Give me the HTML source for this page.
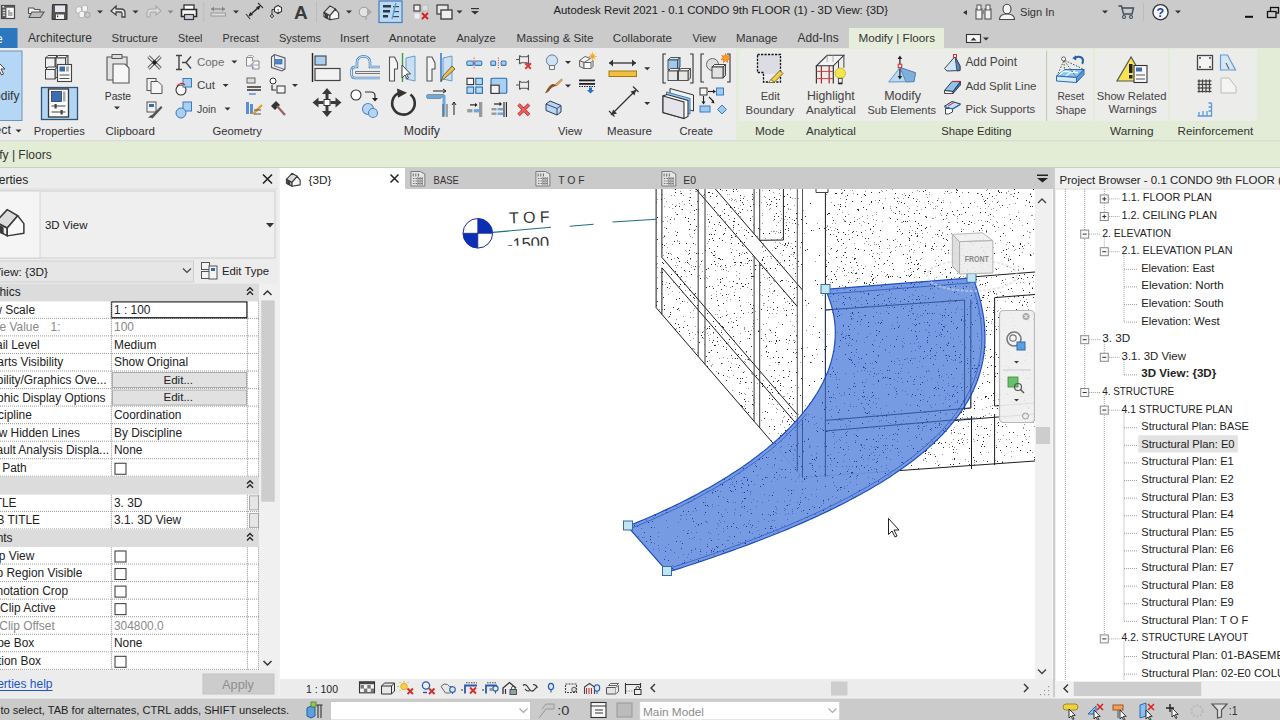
<!DOCTYPE html>
<html><head><meta charset="utf-8"><style>
html,body{margin:0;padding:0;width:1280px;height:720px;overflow:hidden;background:#f0f0f0}
svg{display:block}
text{font-family:"Liberation Sans",sans-serif;white-space:pre}
</style></head><body>
<svg width="1280" height="720" viewBox="0 0 1280 720">
<rect x="0" y="0" width="1280" height="48" fill="#cbcbcb" />
<rect x="1.5" y="5.5" width="13" height="13" fill="#f6f6f6" stroke="#444" stroke-width="1.2" />
<rect x="1.5" y="5.5" width="13" height="2.2" fill="#555" />
<rect x="2.5" y="6" width="1.6" height="1.4" fill="#fff" />
<rect x="1.8" y="7.8" width="4.6" height="10.5" fill="#5a5a5a" />
<rect x="2.8" y="9.5" width="2.4" height="1.4" fill="#ddd" />
<rect x="2.8" y="12" width="2.4" height="1.4" fill="#ddd" />
<rect x="2.8" y="14.5" width="2.4" height="1.4" fill="#ddd" />
<line x1="8" y1="11" x2="10" y2="11" stroke="#555" stroke-width="0.9" />
<line x1="8" y1="13" x2="12.5" y2="13" stroke="#555" stroke-width="0.9" />
<line x1="8" y1="15" x2="12.5" y2="15" stroke="#555" stroke-width="0.9" />
<path d="M28.5 8h5l1.5 1.5h5v4h-11.5z" fill="#f0f0f0" stroke="#555" stroke-width="1.1" />
<path d="M29 17.5l3-5.5h12l-3.5 5.5z" fill="#bdbdbd" stroke="#555" stroke-width="1.1" />
<path d="M52.5 4.5h14.5v15h-15z" fill="#555" stroke="#333" stroke-width="1" />
<rect x="55" y="5.5" width="10" height="6.5" fill="#e4e4ea" />
<rect x="56" y="14.5" width="8" height="4.5" fill="#f4f4f4" />
<rect x="57" y="15.5" width="1.2" height="1.6" fill="#333" />
<path d="M76 8l2.5-1.5 3 1v4.5l-2.5 1.5-3-1z" fill="#f2f2f2" stroke="#b0b0b0" stroke-width="0.9" />
<path d="M82 6.5l2.5-1.5 3 1v4.5l-2.5 1.5-3-1z" fill="#f2f2f2" stroke="#b0b0b0" stroke-width="0.9" />
<path d="M79 12.5l2.5-1.5 3 1v4.5l-2.5 1.5-3-1z" fill="#f2f2f2" stroke="#b0b0b0" stroke-width="0.9" />
<circle cx="87.5" cy="15" r="2.6" fill="none" stroke="#aaa" stroke-width="1.1"/>
<path d="M97 10.5h6l-3 3z" fill="#333"/>
<path d="M111 11l5-5v3h5c3 0 4 2 4 4v4h-3v-3.5c0-1-0.5-1.5-1.5-1.5h-4.5v3z" fill="#e9e9e9" stroke="#444" stroke-width="1.3" />
<path d="M132.5 10.5h6l-3 3z" fill="#333"/>
<path d="M161 11l-5-5v3h-5c-3 0-4 2-4 4v4h3v-3.5c0-1 0.5-1.5 1.5-1.5h4.5v3z" fill="#dcdcdc" stroke="#aaa" stroke-width="1.1" />
<path d="M167.5 10.5h6l-3 3z" fill="#888"/>
<rect x="184" y="5" width="10" height="5" fill="#fff" stroke="#333" stroke-width="1.3" />
<path d="M181.5 9.5h15v7h-15z" fill="#f5f5f5" stroke="#2a2a2a" stroke-width="1.6" />
<rect x="184.5" y="14.5" width="9" height="5" fill="#ccd" stroke="#333" stroke-width="1.2" />
<line x1="203.75" y1="2" x2="203.75" y2="22" stroke="#bcbcbc" stroke-width="1" />
<line x1="211" y1="9" x2="225" y2="9" stroke="#888" stroke-width="1.2" />
<path d="M211 9l3-2.5v5zM225 9l-3-2.5v5z" fill="#888" />
<rect x="211" y="13" width="14.5" height="3" fill="#ddd" stroke="#999" stroke-width="1" />
<path d="M233 10.5h6l-3 3z" fill="#333"/>
<line x1="249" y1="16" x2="260" y2="6" stroke="#222" stroke-width="1.4" />
<line x1="246" y1="14" x2="250" y2="19" stroke="#333" stroke-width="1.1" />
<line x1="258" y1="3" x2="263" y2="8" stroke="#333" stroke-width="1.1" />
<path d="M249 16l1-4 3 3zM260 6l-4 1 3 3z" fill="#222" />
<path d="M278 5.5l3.5 2v4l-3.5 2-3.5-2v-4z" fill="#fff" stroke="#333" stroke-width="1.1" />
<text x="276.6" y="12.5" font-size="6" fill="#222">1</text>
<path d="M274.5 9.5h-2.5v5" fill="none" stroke="#333" stroke-width="1" />
<circle cx="272" cy="16" r="1.4" fill="#fff" stroke="#333" stroke-width="1"/>
<text x="294" y="18.5" font-size="19" fill="#3a3a3a" font-weight="bold">A</text>
<line x1="316.5" y1="2" x2="316.5" y2="22" stroke="#bcbcbc" stroke-width="1" />
<g transform="translate(323.5 4.5) scale(0.92)" stroke="#3a3a3a" stroke-width="1.20" stroke-linejoin="round"><path d="M0.5 8.5L7 12V16.5L0.5 13Z" fill="#ececec"/><path d="M0.5 8.5L7 1.5L13 5L7 12Z" fill="#dcdcdc"/><path d="M7 12L13 5L16.5 9.5V15L7 16.5Z" fill="#f7f7f7"/><path d="M2 14V10.5L4.5 11.8V15.2Z" fill="#3a3a3a"/></g>
<path d="M346 10.5h6l-3 3z" fill="#333"/>
<circle cx="364" cy="12" r="4.8" fill="#e3e3e3" stroke="#999" stroke-width="1"/>
<path d="M367 7.5l5 4.5-5 4.5z" fill="#aaa" />
<line x1="366" y1="17" x2="366" y2="20" stroke="#999" stroke-width="1" />
<rect x="379" y="1" width="23" height="21.5" fill="#bcd9f2" stroke="#3f7fbf" stroke-width="1.2" />
<rect x="383" y="5" width="8" height="2.5" fill="#2a3a4a" />
<rect x="393" y="6" width="6" height="1.2" fill="#3a4a5a" />
<rect x="383" y="10" width="7" height="2.5" fill="#2a3a4a" />
<rect x="393" y="11" width="6" height="1.2" fill="#3a4a5a" />
<rect x="383" y="15" width="5" height="2.5" fill="#2a3a4a" />
<rect x="393" y="16" width="6" height="1.2" fill="#3a4a5a" />
<line x1="392" y1="19" x2="396" y2="3" stroke="#5a9ad8" stroke-width="1.3" />
<rect x="414" y="5" width="6" height="6" fill="#f0f0f0" stroke="#444" stroke-width="1.2" />
<rect x="422" y="5" width="6" height="6" fill="#ddd" stroke="#bbb" stroke-width="1" />
<rect x="414" y="13" width="6" height="6" fill="#eee" stroke="#ccc" stroke-width="1" />
<path d="M422 13l6 6M428 13l-6 6" fill="none" stroke="#d02020" stroke-width="1.8" />
<rect x="437" y="5" width="11" height="9" fill="#e8e8e8" stroke="#444" stroke-width="1.3" />
<rect x="441" y="10" width="11" height="9" fill="#f0f0f0" stroke="#444" stroke-width="1.4" />
<path d="M456.5 10.5h6l-3 3z" fill="#333"/>
<rect x="471" y="8" width="8" height="1.2" fill="#333" />
<path d="M471 11h8l-4 3.5z" fill="#333" />
<text x="553.5" y="13.6" font-size="11.34" fill="#222" textLength="334.5" lengthAdjust="spacingAndGlyphs" >Autodesk Revit 2021 - 0.1 CONDO 9th FLOOR (1) - 3D View: {3D}</text>
<path d="M967 10l-4 2.5 4 2.5z" fill="#333" />
<rect x="976" y="9" width="6" height="10" fill="#f2f2f2" stroke="#555" stroke-width="1.1" />
<rect x="985" y="9" width="6" height="10" fill="#f2f2f2" stroke="#555" stroke-width="1.1" />
<rect x="977" y="5" width="4" height="5" fill="#f2f2f2" stroke="#555" stroke-width="1" />
<rect x="986" y="5" width="4" height="5" fill="#f2f2f2" stroke="#555" stroke-width="1" />
<rect x="981.5" y="10" width="3.5" height="4" fill="#888" />
<ellipse cx="1007" cy="9" rx="4" ry="4.8" fill="#f4f4f4" stroke="#444" stroke-width="1.1"/>
<path d="M999.5 19.5c0-4 3.5-5.5 7.5-5.5s7.5 1.5 7.5 5.5z" fill="#f4f4f4" stroke="#444" stroke-width="1.1" />
<text x="1020" y="16.3" font-size="11.08" fill="#333" textLength="34.5" lengthAdjust="spacingAndGlyphs" >Sign In</text>
<path d="M1102 10.5h6l-3 3z" fill="#333"/>
<path d="M1118.5 6h3l2 8h8.5l1.5-6h-11" fill="none" stroke="#3d4d5d" stroke-width="1.4" />
<circle cx="1124" cy="17" r="1.5" fill="none" stroke="#3d4d5d" stroke-width="1.1"/><circle cx="1131" cy="17" r="1.5" fill="none" stroke="#3d4d5d" stroke-width="1.1"/>
<line x1="1143.5" y1="3" x2="1143.5" y2="21" stroke="#bcbcbc" stroke-width="1" />
<circle cx="1160.5" cy="12.2" r="7.6" fill="#f4f7ff" stroke="#333" stroke-width="1.3"/>
<text x="1156.6" y="16.8" font-size="12.5" font-weight="bold" fill="#1f3f9f">?</text>
<path d="M1175 10.5h6l-3 3z" fill="#333"/>
<rect x="1245" y="15.8" width="8" height="2" fill="#111" />
<rect x="1270.5" y="7.5" width="8" height="5.5" fill="none" stroke="#111" stroke-width="1.3" />
<rect x="1267.5" y="11.5" width="8.5" height="6" fill="#cbcbcb" stroke="#111" stroke-width="1.3" />
<rect x="0" y="28" width="17.5" height="20" fill="#2b78bf" />
<text x="-4" y="42.5" font-size="12" fill="#fff">e</text>
<rect x="849" y="28" width="95" height="20" fill="#e6eedb" />
<text x="28" y="41.8" font-size="12.00" fill="#333" textLength="64.0" lengthAdjust="spacingAndGlyphs" >Architecture</text>
<text x="111.5" y="41.8" font-size="11.46" fill="#333" textLength="46.5" lengthAdjust="spacingAndGlyphs" >Structure</text>
<text x="178" y="41.8" font-size="10.75" fill="#333" textLength="24.5" lengthAdjust="spacingAndGlyphs" >Steel</text>
<text x="222.5" y="41.8" font-size="10.77" fill="#333" textLength="36.5" lengthAdjust="spacingAndGlyphs" >Precast</text>
<text x="279" y="41.8" font-size="10.95" fill="#333" textLength="42.0" lengthAdjust="spacingAndGlyphs" >Systems</text>
<text x="340" y="41.8" font-size="11.60" fill="#333" textLength="29.0" lengthAdjust="spacingAndGlyphs" >Insert</text>
<text x="388.75" y="41.8" font-size="11.80" fill="#333" textLength="47.2" lengthAdjust="spacingAndGlyphs" >Annotate</text>
<text x="456.5" y="41.8" font-size="10.99" fill="#333" textLength="39.1" lengthAdjust="spacingAndGlyphs" >Analyze</text>
<text x="516.5" y="41.8" font-size="11.53" fill="#333" textLength="76.9" lengthAdjust="spacingAndGlyphs" >Massing &amp; Site</text>
<text x="612.8" y="41.8" font-size="11.58" fill="#333" textLength="59.2" lengthAdjust="spacingAndGlyphs" >Collaborate</text>
<text x="692.5" y="41.8" font-size="10.93" fill="#333" textLength="23.5" lengthAdjust="spacingAndGlyphs" >View</text>
<text x="736" y="41.8" font-size="11.48" fill="#333" textLength="41.5" lengthAdjust="spacingAndGlyphs" >Manage</text>
<text x="797.6" y="41.8" font-size="11.90" fill="#333" textLength="41.0" lengthAdjust="spacingAndGlyphs" >Add-Ins</text>
<text x="858.5" y="41.8" font-size="11.70" fill="#333" textLength="76.5" lengthAdjust="spacingAndGlyphs" >Modify | Floors</text>
<rect x="966.5" y="34.5" width="14" height="8" fill="#f4f4f4" stroke="#333" stroke-width="1.1" />
<path d="M970.5 40.5l3-3 3 3z" fill="#333" />
<path d="M983 37.5h6l-3 3z" fill="#333"/>
<rect x="0" y="48" width="1280" height="93" fill="#ececec" />
<rect x="736" y="48" width="544" height="93" fill="#e3ecd6" />
<rect x="739" y="49" width="307" height="72" fill="#ececea" />
<rect x="1048" y="49" width="45" height="72" fill="#ececea" />
<rect x="1095" y="49" width="73" height="72" fill="#ececea" />
<rect x="1170" y="49" width="87" height="72" fill="#ececea" />
<line x1="0" y1="141" x2="1280" y2="141" stroke="#c9cfc2" stroke-width="1" />
<rect x="-1" y="51" width="23" height="69.5" fill="#b5d6f4" stroke="#6b93bd" stroke-width="1" />
<path d="M-4 60l0 13 3-3 2.5 5 2-1-2.5-5 4 0z" fill="#fff" stroke="#333" stroke-width="0.9" />
<text x="-15.9" y="99.9" font-size="11.99" fill="#333" textLength="35.3" lengthAdjust="spacingAndGlyphs" >Modify</text>
<text x="-23.7" y="134" font-size="12.49" fill="#333" textLength="34.7" lengthAdjust="spacingAndGlyphs" >Select</text>
<path d="M15.5 129.5h6l-3 3z" fill="#333"/>
<path d="M45.5 58l2.5-2.5h9.5l-2.5 2.5z" fill="#fafafa" stroke="#444" stroke-width="1" />
<path d="M55.0 58l2.5-2.5v9.5l-2.5 2.5z" fill="#cfcfcf" stroke="#444" stroke-width="1" />
<rect x="45.5" y="58" width="9.5" height="9.5" fill="#f0f0f0" stroke="#444" stroke-width="1" />
<path d="M56 58l2.5-2.5h9.5l-2.5 2.5z" fill="#fafafa" stroke="#444" stroke-width="1" />
<path d="M65.5 58l2.5-2.5v9.5l-2.5 2.5z" fill="#cfcfcf" stroke="#444" stroke-width="1" />
<rect x="56" y="58" width="9.5" height="9.5" fill="#f0f0f0" stroke="#444" stroke-width="1" />
<path d="M45.5 69.5l2.5-2.5h9.5l-2.5 2.5z" fill="#fafafa" stroke="#444" stroke-width="1" />
<path d="M55.0 69.5l2.5-2.5v9.5l-2.5 2.5z" fill="#cfcfcf" stroke="#444" stroke-width="1" />
<rect x="45.5" y="69.5" width="9.5" height="9.5" fill="#f0f0f0" stroke="#444" stroke-width="1" />
<rect x="57.5" y="64.5" width="14" height="17" fill="#f8f8f8" stroke="#444" stroke-width="1.1" />
<rect x="59.5" y="66.5" width="5.5" height="5" fill="#3c6aa8" />
<rect x="66" y="66.5" width="3" height="5" fill="#aaa" />
<line x1="59.5" y1="75" x2="69.5" y2="75" stroke="#555" stroke-width="1" />
<line x1="59.5" y1="78.5" x2="69.5" y2="78.5" stroke="#555" stroke-width="1" />
<rect x="41.5" y="87.5" width="36" height="32" fill="#b2d5f3" stroke="#2f5478" stroke-width="1.3" />
<rect x="48.5" y="89" width="20" height="28" fill="#fafafa" stroke="#333" stroke-width="1.3" />
<rect x="51.5" y="91.5" width="10" height="10" fill="#3d6cb0" stroke="#1f3f70" stroke-width="0.8" />
<rect x="63" y="91.5" width="2.5" height="10" fill="#aaa" />
<line x1="51.5" y1="106" x2="65.5" y2="106" stroke="#777" stroke-width="1.4" />
<line x1="51.5" y1="112" x2="65.5" y2="112" stroke="#777" stroke-width="1.4" />
<rect x="54.5" y="104" width="2.2" height="4.5" fill="#444" />
<rect x="60.5" y="110" width="2.2" height="4.5" fill="#444" />
<text x="33.75" y="135" font-size="11.18" fill="#333" textLength="51.0" lengthAdjust="spacingAndGlyphs" >Properties</text>
<path d="M107 57h20v23h-20z" fill="#e2e2e2" stroke="#555" stroke-width="1.1" />
<rect x="112" y="54.5" width="10" height="4" fill="#ddd" stroke="#555" stroke-width="1" />
<path d="M113 64h12l4 4v15h-16z" fill="#f6f6f6" stroke="#555" stroke-width="1.1" />
<text x="104.8" y="100.3" font-size="10.25" fill="#333" textLength="26.2" lengthAdjust="spacingAndGlyphs" >Paste</text>
<path d="M114 106.5h6l-3 3z" fill="#333"/>
<text x="105.5" y="135" font-size="11.54" fill="#333" textLength="49.4" lengthAdjust="spacingAndGlyphs" >Clipboard</text>
<path d="M148.5 56.5L160.5 68.5M160.5 56.5L148.5 68.5" fill="none" stroke="#555" stroke-width="3.2" />
<path d="M148.5 56.5L160.5 68.5M160.5 56.5L148.5 68.5" fill="none" stroke="#f4f4f4" stroke-width="1.4" />
<circle cx="154.5" cy="62.5" r="2.2" fill="#222"/>
<rect x="147" y="78.5" width="9" height="12" fill="#f2f2f2" stroke="#555" stroke-width="1" />
<path d="M151 81.5h7l4 4v8h-11z" fill="#f6f6f6" stroke="#555" stroke-width="1" />
<rect x="147" y="102" width="9" height="10" fill="#f2f2f2" stroke="#555" stroke-width="1" />
<rect x="149" y="104" width="5" height="3" fill="#3c6aa8" />
<path d="M150 117l11-11 1.5 1.5-10 11z" fill="#555" />
<path d="M148 118l3-3 2 2z" fill="#444" />
<path d="M176 55.5h6M176 69.5h6M179 55.5v14M182 62.5h4l5-6M186 62.5l5 6" fill="none" stroke="#444" stroke-width="1.4" />
<text x="196.9" y="66" font-size="11.50" fill="#6c6c6c" textLength="27.5" lengthAdjust="spacingAndGlyphs" >Cope</text>
<path d="M231.4 60.5h6l-3 3z" fill="#333"/>
<circle cx="181" cy="90" r="5" fill="#fff" stroke="#333" stroke-width="1.1"/>
<rect x="183" y="78.5" width="8.5" height="8.5" fill="#a9d0f0" stroke="#3b79c0" stroke-width="1" />
<path d="M177 86a5 5 0 0 1 8-1" fill="none" stroke="#d22" stroke-width="1.2" />
<text x="196.9" y="89.3" font-size="11.63" fill="#444" textLength="18.1" lengthAdjust="spacingAndGlyphs" >Cut</text>
<path d="M222.6 84h6l-3 3z" fill="#333"/>
<rect x="183" y="102" width="8.5" height="9" fill="#a9d0f0" stroke="#3b79c0" stroke-width="1" />
<circle cx="181" cy="113" r="5" fill="#a9d0f0" stroke="#3b79c0" stroke-width="1"/>
<text x="196.9" y="113" font-size="10.55" fill="#444" textLength="19.3" lengthAdjust="spacingAndGlyphs" >Join</text>
<path d="M224.5 107.5h6l-3 3z" fill="#333"/>
<path d="M246.5 57.5h6v3.5h6.5v8h-6.5v-3h-6z" fill="#f6f6f6" stroke="#8a8a8a" stroke-width="1" />
<path d="M246.5 57.5l2-2h4l2 2" fill="none" stroke="#9a9a9a" stroke-width="0.8" />
<path d="M259 65h-8l3-3M251 65l3 3" fill="none" stroke="#9aa8b8" stroke-width="1.2" />
<path d="M271.5 57l3-2.5 10.5 3.5v11l-3 2-10.5-3.5z" fill="#e9eef4" stroke="#556" stroke-width="1.1" />
<path d="M274.5 54.5v11.5l10.5 3.5" fill="none" stroke="#556" stroke-width="0.8" />
<rect x="275.5" y="59.5" width="6.5" height="4.5" fill="#4f86c6" stroke="#2a5a9a" stroke-width="0.6" />
<rect x="247" y="78" width="8" height="5" fill="#ddd" stroke="#666" stroke-width="1" />
<line x1="247" y1="87" x2="261" y2="87" stroke="#333" stroke-width="1.5" />
<line x1="247" y1="90" x2="261" y2="90" stroke="#333" stroke-width="1.5" />
<line x1="249" y1="94" x2="256" y2="94" stroke="#3b79c0" stroke-width="1.2" />
<circle cx="273" cy="81" r="3" fill="#fff" stroke="#333" stroke-width="1"/>
<rect x="277" y="86" width="8" height="7" fill="#f4f4f4" stroke="#333" stroke-width="1" />
<path d="M272 85v5h4" fill="none" stroke="#333" stroke-width="1.2" />
<path d="M292 84h6l-3 3z" fill="#333"/>
<rect x="246" y="102" width="3" height="12" fill="#5b8fd0" />
<rect x="250" y="104" width="3" height="10" fill="#5b8fd0" />
<path d="M253 114l9-9" fill="none" stroke="#e8a030" stroke-width="2.4" />
<line x1="254" y1="110" x2="261" y2="110" stroke="#555" stroke-width="1" />
<line x1="254" y1="114" x2="261" y2="114" stroke="#555" stroke-width="1" />
<path d="M271 106l5-5 4 4-5 5z" fill="#333" />
<path d="M277 106l8 9" fill="none" stroke="#9a6060" stroke-width="2.2" />
<text x="212.5" y="135" font-size="11.28" fill="#333" textLength="49.5" lengthAdjust="spacingAndGlyphs" >Geometry</text>
<line x1="312.5" y1="53" x2="312.5" y2="82" stroke="#222" stroke-width="1.4" />
<rect x="315" y="56" width="11" height="9" fill="#a9d0f0" stroke="#444" stroke-width="1.1" />
<rect x="315" y="68.5" width="25" height="12" fill="#f2f2f2" stroke="#444" stroke-width="1.2" />
<path d="M380 67H370V62C370 54.5 357 54.5 357 62V67H354.5C352 67 351.5 69 351.5 71V74C351.5 76.5 352.5 78 355 78H380" fill="none" stroke="#4a88c8" stroke-width="2.6" />
<path d="M380 67H370V62C370 54.5 357 54.5 357 62V67H354.5C352 67 351.5 69 351.5 71V74C351.5 76.5 352.5 78 355 78H380" fill="none" stroke="#f2f2f2" stroke-width="0.9" />
<path d="M380 71.5H355.5V73.5H380" fill="none" stroke="#777" stroke-width="1" />
<path d="M389.5 57h5l3 6v6h-3v12h-5z" fill="#f4f4f4" stroke="#555" stroke-width="1.1" />
<path d="M406 58l9-2v25l-9-2z" fill="#c9e0f3" stroke="#6a9acb" stroke-width="1" />
<line x1="402.5" y1="53" x2="402.5" y2="82" stroke="#3aa040" stroke-width="1.4" />
<path d="M402 65v13l3-3 2 4 1.5-1-2-4h4z" fill="#fff" stroke="#333" stroke-width="0.9" />
<path d="M427 57h5l3 6v6h-3v12h-5z" fill="#f4f4f4" stroke="#555" stroke-width="1.1" />
<path d="M443 58l9-2v25l-9-2z" fill="#c9e0f3" stroke="#6a9acb" stroke-width="1" />
<line x1="441" y1="53" x2="441" y2="82" stroke="#3a7fcf" stroke-width="1.6" />
<path d="M441 81l2-5 9-10 3 3-10 9z" fill="#f2c040" stroke="#555" stroke-width="0.9" />
<path d="M327 88l-5 6h3.5v5h3v-5h3.5zM327 117l-5-6h3.5v-5h3v5h3.5zM312.5 102.5l6-5v3.5h5v3h-5v3.5zM341.5 102.5l-6-5v3.5h-5v3h5v3.5z" fill="#3a3a3a" />
<rect x="324" y="99.5" width="6" height="6" fill="#fff" stroke="#333" stroke-width="1" />
<circle cx="356" cy="95" r="5" fill="#fff" stroke="#333" stroke-width="1.1"/>
<path d="M365 92h6c3 0 4 2 4 4v3" fill="none" stroke="#333" stroke-width="1.2" />
<path d="M372 98l3 3.5 3-3.5z" fill="#222" />
<circle cx="368" cy="109" r="5.5" fill="#b7d5f0" stroke="#4a88c8" stroke-width="1.1"/><circle cx="373" cy="113" r="4.5" fill="#b7d5f0" stroke="#4a88c8" stroke-width="1.1"/>
<path d="M398.5 93.2A11.3 11.3 0 1 0 410.5 94.5" fill="none" stroke="#333" stroke-width="2.6" />
<path d="M397 88.5l10 4.2-9 5z" fill="#333" />
<path d="M427 95h17M427 98h14" fill="none" stroke="#333" stroke-width="1" />
<path d="M426 96.5h18v20" fill="none" stroke="#6aa8e0" stroke-width="3" />
<path d="M433 91h13l-3-2M446 91l-3 2M454 115v-13l-2 3M454 102l2 3" fill="none" stroke="#222" stroke-width="1" />
<path d="M443 104v13M447 104v13" fill="none" stroke="#555" stroke-width="1" />
<rect x="466.8" y="61" width="6.5" height="4.4" fill="#a9d0f0" stroke="#3a78b8" stroke-width="1.1" rx="1.2"/>
<rect x="474.8" y="61" width="7" height="4.4" fill="#a9d0f0" stroke="#3a78b8" stroke-width="1.1" rx="1.2"/>
<line x1="474.1" y1="57.5" x2="474.1" y2="68.5" stroke="#e04040" stroke-width="1" stroke-dasharray="1.2 1.2"/>
<rect x="490.8" y="61" width="4.8" height="4.4" fill="#a9d0f0" stroke="#3a78b8" stroke-width="1.1" rx="1"/>
<rect x="501.2" y="61" width="4.8" height="4.4" fill="#a9d0f0" stroke="#3a78b8" stroke-width="1.1" rx="1"/>
<line x1="498.4" y1="57.5" x2="498.4" y2="68.5" stroke="#e04040" stroke-width="1" stroke-dasharray="1.2 1.2"/>
<path d="M516 59.5h3.5M519.5 55.5v8.5M519.5 55.5l1.5 1.2h6l1.5-1.2v8.5l-1.5-1.2h-6l-1.5 1.2" fill="none" stroke="#555" stroke-width="1.1" />
<path d="M525.3 63.3l5.6 5.6M530.9 63.3l-5.6 5.6" fill="none" stroke="#e03535" stroke-width="2" />
<rect x="467" y="78.3" width="6.6" height="6.3" fill="#f6f6f6" stroke="#333" stroke-width="1.1" />
<rect x="475.8" y="78.3" width="6.6" height="6.3" fill="#b5daf2" stroke="#2a6ab0" stroke-width="1.1" />
<rect x="467" y="87" width="6.6" height="6.3" fill="#b5daf2" stroke="#2a6ab0" stroke-width="1.1" />
<rect x="475.8" y="87" width="6.6" height="6.3" fill="#b5daf2" stroke="#2a6ab0" stroke-width="1.1" />
<rect x="491" y="78.3" width="15.8" height="15" fill="#a9d0f0" stroke="#2a6ab0" stroke-width="1.1" rx="1"/>
<rect x="491" y="85.2" width="8.2" height="8.2" fill="#f2f2f2" stroke="#333" stroke-width="1.1" />
<path d="M516 85h3.5M519.5 81v8.5M519.5 81l1.5 1.2h6l1.5-1.2v8.5l-1.5-1.2h-6l-1.5 1.2" fill="none" stroke="#555" stroke-width="1.1" />
<path d="M470 104.9h5.5" fill="none" stroke="#222" stroke-width="1.2" />
<path d="M475 102.8l2.5 2.1-2.5 2.1z" fill="#222" />
<rect x="479" y="102" width="3.3" height="15" fill="#999" />
<rect x="467.2" y="109.1" width="5.2" height="3.3" fill="#999" />
<rect x="473.8" y="109.1" width="5.5" height="3.3" fill="#6aa8e0" />
<path d="M494 104h6" fill="none" stroke="#222" stroke-width="1.2" />
<path d="M499.5 101.8l2.5 2.2-2.5 2.2z" fill="#222" />
<line x1="504" y1="102" x2="504" y2="117" stroke="#222" stroke-width="1.1" />
<line x1="506.4" y1="102" x2="506.4" y2="117" stroke="#222" stroke-width="1.1" />
<rect x="491.5" y="108" width="5" height="2.4" fill="#999" />
<rect x="491.5" y="112.5" width="5" height="2.4" fill="#999" />
<rect x="497.5" y="108" width="5.5" height="2.4" fill="#6aa8e0" />
<rect x="497.5" y="112.5" width="5.5" height="2.4" fill="#6aa8e0" />
<path d="M518.5 104.5l10.5 10.5M529 104.5l-10.5 10.5" fill="none" stroke="#b03030" stroke-width="3.4" />
<path d="M518.5 104.5l10.5 10.5M529 104.5l-10.5 10.5" fill="none" stroke="#f06060" stroke-width="2" />
<circle cx="552" cy="60.5" r="5.6" fill="#cfe3f6" stroke="#6a7a9a" stroke-width="1"/>
<path d="M549.5 65.5h5v4h-5z" fill="#f4f4f4" stroke="#666" stroke-width="0.9" />
<path d="M565 61h6l-3 3z" fill="#333"/>
<path d="M579.5 60.5L585 56.5L590.5 58.5L584 62.5Z" fill="#f4f4f4" stroke="#666" stroke-width="1" />
<path d="M579.5 60.5V66.5L584 68.5V62.5Z" fill="#e0e0e0" stroke="#666" stroke-width="1" />
<path d="M584 62.5H591V68.5H584Z" fill="#f8f8f8" stroke="#666" stroke-width="1" />
<path d="M591 62.5l2-2v6l-2 2" fill="none" stroke="#666" stroke-width="1" />
<circle cx="592.5" cy="56.5" r="2.2" fill="#f7a21b"/>
<path d="M592.5 52.5v1.5M592.5 59v1.5M588.5 56.5h1.5M595 56.5h1.5M589.7 53.7l1 1M594.3 58.3l1 1M595.3 53.7l-1 1" fill="none" stroke="#f7a21b" stroke-width="0.9" />
<path d="M555 84.5L561.5 79L562.5 80L556.5 86Z" fill="#e8a860" stroke="#a06a30" stroke-width="0.6" />
<path d="M556.5 86C553 86.5 551 88 549.5 90.5C548.5 92 546.5 93 545 93.2C546.5 90.5 548 87.5 550 85.5C551.5 84 553.5 83.5 555 84.5Z" fill="#8a5528" />
<path d="M565 84.5h6l-3 3z" fill="#333"/>
<rect x="579" y="79.5" width="16" height="1.8" fill="#222" />
<rect x="579" y="83" width="16" height="1.8" fill="#222" />
<line x1="579" y1="86.5" x2="595" y2="86.5" stroke="#222" stroke-width="1" stroke-dasharray="1.5 1"/>
<path d="M589 87.5h3v2.5h2.2l-3.7 3.5-3.7-3.5h2.2z" fill="#2a70c8" />
<path d="M546 104L550 101L561 105.5V112L557 115L546 110.5Z" fill="#b9d7f2" stroke="#2a3a5a" stroke-width="1" />
<path d="M546 104L557 108.5L561 105.5M557 108.5V115" fill="none" stroke="#2a3a5a" stroke-width="0.9" />
<text x="403.75" y="135" font-size="12.31" fill="#333" textLength="36.2" lengthAdjust="spacingAndGlyphs" >Modify</text>
<text x="558" y="135" font-size="11.17" fill="#333" textLength="24.0" lengthAdjust="spacingAndGlyphs" >View</text>
<path d="M609 63h27" fill="none" stroke="#333" stroke-width="1.3" />
<path d="M609 63l4-3.5v7zM636 63l-4-3.5v7z" fill="#333" />
<rect x="609" y="71" width="27.5" height="5.5" fill="#f2c040" stroke="#a07a10" stroke-width="1" />
<path d="M644.2 67.2h6l-3 3z" fill="#333"/>
<line x1="611" y1="115" x2="636" y2="90" stroke="#333" stroke-width="1.2" />
<path d="M609 111l5.5 5.5M633 86.5l5.5 5.5" fill="none" stroke="#333" stroke-width="1.2" />
<path d="M611.5 115l1.5-5.5 4 4zM636 90l-5.5 1.5 4 4z" fill="#333" />
<path d="M644.2 102.1h6l-3 3z" fill="#333"/>
<text x="607" y="135" font-size="11.57" fill="#333" textLength="45.0" lengthAdjust="spacingAndGlyphs" >Measure</text>
<path d="M666 54h-3v29h3M690 54h3v29h-3" fill="none" stroke="#333" stroke-width="1.1" />
<path d="M668 60l2.5-2.5h9.5l-2.5 2.5z" fill="#c8e2f6" stroke="#444" stroke-width="0.9" />
<path d="M677.5 60l2.5-2.5v9.5l-2.5 2.5z" fill="#7fb2de" stroke="#444" stroke-width="0.9" />
<rect x="668" y="60" width="9.5" height="9.5" fill="#9ccbef" stroke="#444" stroke-width="0.9" />
<path d="M668 71l2.5-2.5h9.5l-2.5 2.5z" fill="#f6f6f6" stroke="#444" stroke-width="0.9" />
<path d="M677.5 71l2.5-2.5v9.5l-2.5 2.5z" fill="#cfcfcf" stroke="#444" stroke-width="0.9" />
<rect x="668" y="71" width="9.5" height="9.5" fill="#e6e6e6" stroke="#444" stroke-width="0.9" />
<path d="M678.5 71l2.5-2.5h9.5l-2.5 2.5z" fill="#f6f6f6" stroke="#444" stroke-width="0.9" />
<path d="M688.0 71l2.5-2.5v9.5l-2.5 2.5z" fill="#cfcfcf" stroke="#444" stroke-width="0.9" />
<rect x="678.5" y="71" width="9.5" height="9.5" fill="#e6e6e6" stroke="#444" stroke-width="0.9" />
<path d="M704 54h-3v28h3M727 54h3v28h-3" fill="none" stroke="#333" stroke-width="1.1" />
<circle cx="712.5" cy="64.5" r="6" fill="#dedede" stroke="#666" stroke-width="1"/>
<path d="M712 67l2.5-2.5h11l-2.5 2.5z" fill="#f4f4f4" stroke="#333" stroke-width="0.9" />
<path d="M723 67l2.5-2.5v11l-2.5 2.5z" fill="#cacaca" stroke="#333" stroke-width="0.9" />
<rect x="712" y="67" width="11" height="11" fill="#e2e2e2" stroke="#333" stroke-width="0.9" />
<path d="M725.5 53.5l1.2 2.6 2.8-.8-1.6 2.4 2.4 1.6-2.8.4.2 2.8-2.2-1.8-2 2 .2-2.8-2.8-.4 2.4-1.6-1.6-2.4 2.8.8z" fill="#f7a21b" stroke="#e0601a" stroke-width="0.6" />
<path d="M670 88.5L693.5 95V111L670 104.5Z" fill="#f2f2f2" stroke="#333" stroke-width="1" />
<path d="M666.5 92L690 98.5V114L666.5 107.5Z" fill="#9ccbef" stroke="#3b79c0" stroke-width="1" />
<path d="M663 112.5V96L667 94.5L688 100.5V116.5L684 118.5Z" fill="#fff" stroke="#333" stroke-width="1.1" />
<path d="M663 96L684 102V118.5L663 112.5Z" fill="#e4e4ea" stroke="#333" stroke-width="1.1" />
<rect x="700" y="88" width="7" height="7" fill="#f4f4f4" stroke="#333" stroke-width="1" />
<line x1="708" y1="91.5" x2="714" y2="91.5" stroke="#222" stroke-width="1.1" />
<path d="M713 89.5l3 2-3 2z" fill="#222" />
<rect x="716.5" y="88" width="7" height="7" fill="#9ccbef" stroke="#3b79c0" stroke-width="1" />
<line x1="703.5" y1="96" x2="703.5" y2="102" stroke="#222" stroke-width="1.1" />
<path d="M701.5 101.5l2 3 2-3z" fill="#222" />
<rect x="700" y="106" width="10" height="6" fill="#9ccbef" stroke="#3b79c0" stroke-width="1" />
<line x1="709" y1="97" x2="713" y2="101" stroke="#222" stroke-width="1.1" />
<path d="M711 102.5l3.5 1-1-3.5z" fill="#222" />
<path d="M722 105l4.5 4.5-4.5 4.5-4.5-4.5z" fill="#9ccbef" stroke="#3b79c0" stroke-width="1" />
<text x="679.5" y="135" font-size="11.16" fill="#333" textLength="33.5" lengthAdjust="spacingAndGlyphs" >Create</text>
<path d="M757.5 54.5H780.5V82H763.5V72.5H757.5Z" fill="#dcdce4" />
<path d="M763.5 74H780.5V82H763.5Z" fill="#ececf0" />
<path d="M757.5 54.5H780.5V82H763.5V72.5H757.5Z" fill="none" stroke="#111" stroke-width="1.3" stroke-dasharray="2.2 1.3"/>
<path d="M771 79.5L780 70.5L783 73.5L774 82.5Z" fill="#f2d040" stroke="#6a5a20" stroke-width="0.9" />
<path d="M768.5 82.5L771 79.5L774 82.5Z" fill="#fff8e0" stroke="#6a5a20" stroke-width="0.8" />
<text x="760.7" y="99.8" font-size="11.08" fill="#444" textLength="19.1" lengthAdjust="spacingAndGlyphs" >Edit</text>
<text x="745.6" y="114.1" font-size="11.35" fill="#444" textLength="48.6" lengthAdjust="spacingAndGlyphs" >Boundary</text>
<text x="755" y="134.9" font-size="11.83" fill="#333" textLength="29.6" lengthAdjust="spacingAndGlyphs" >Mode</text>
<path d="M816.4 65.8L827.2 55.3H843.9L833.3 65.8Z" fill="#f4f4f6" stroke="#333" stroke-width="1.1" />
<path d="M843.9 55.3V67.8M838.5 60.8V68" fill="none" stroke="#444" stroke-width="1" />
<line x1="827.2" y1="55.3" x2="827.2" y2="62" stroke="#999" stroke-width="0.8" />
<line x1="833" y1="55.3" x2="833" y2="62" stroke="#999" stroke-width="0.8" />
<path d="M816.4 65.8V83.6M833.3 65.8V83.6" fill="none" stroke="#333" stroke-width="1.2" />
<path d="M821.4 66V83.6M829.2 66V83.6" fill="none" stroke="#b02828" stroke-width="1.2" />
<path d="M816.4 71.4H833.3M816.4 78.6H833.3" fill="none" stroke="#c84040" stroke-width="1" />
<circle cx="840.3" cy="73.3" r="5.2" fill="#f5e64a" stroke="#c8b430" stroke-width="0.9"/>
<rect x="838.4" y="78.3" width="3.8" height="5.5" fill="#f0f0f0" stroke="#444" stroke-width="0.9" />
<rect x="838.6" y="82.5" width="3.4" height="1.6" fill="#222" />
<text x="806.9" y="99.8" font-size="12.28" fill="#444" textLength="47.8" lengthAdjust="spacingAndGlyphs" >Highlight</text>
<text x="806" y="114.1" font-size="11.64" fill="#444" textLength="49.8" lengthAdjust="spacingAndGlyphs" >Analytical</text>
<text x="806" y="134.9" font-size="11.64" fill="#333" textLength="49.8" lengthAdjust="spacingAndGlyphs" >Analytical</text>
<path d="M888.7 82L899.9 67.5L915.5 72.8L914 81.6Z" fill="#b9daf2" stroke="#5a8cc0" stroke-width="0.9" />
<path d="M899.9 67.5L915.5 72.8L914 81.6L906 82Z" fill="#7fb0dc" stroke="#4a7ab0" stroke-width="0.8" />
<line x1="899.9" y1="57" x2="899.9" y2="64" stroke="#222" stroke-width="1.2" />
<path d="M897.6 59l2.3-3.5 2.3 3.5z" fill="#222" />
<rect x="898.2" y="64.2" width="3.5" height="3.5" fill="#fff" stroke="#d22" stroke-width="1" />
<line x1="899.9" y1="69" x2="899.9" y2="77" stroke="#222" stroke-width="1.2" />
<path d="M897.6 76l2.3 3.5 2.3-3.5z" fill="#222" />
<text x="884.2" y="99.8" font-size="12.46" fill="#444" textLength="36.7" lengthAdjust="spacingAndGlyphs" >Modify</text>
<text x="867.5" y="114.1" font-size="11.00" fill="#444" textLength="68.5" lengthAdjust="spacingAndGlyphs" >Sub Elements</text>
<path d="M944.5 68.5L955 56.5L960 66V70.5L947 71Z" fill="#cfe6f8" stroke="#444" stroke-width="1" />
<path d="M955 56.5L960 66V70.5L957 71Z" fill="#5a8abf" stroke="#334" stroke-width="0.8" />
<rect x="953.5" y="54.5" width="3" height="3" fill="#fff" stroke="#d22" stroke-width="0.9" />
<path d="M944.5 90.5L952 81.5H960.5L953 91.5Z" fill="#8ec4ee" stroke="#334" stroke-width="1" />
<path d="M944.5 90.5V93.5H953V91.5Z" fill="#fff" stroke="#334" stroke-width="0.9" />
<path d="M953 91.5L960.5 81.5V85L953 93.5Z" fill="#3a70b0" stroke="#334" stroke-width="0.8" />
<line x1="952" y1="81.5" x2="960.5" y2="81.5" stroke="#d23" stroke-width="1.2" />
<path d="M944 106.5L952 101.5L960.5 104L952.5 109Z" fill="#bfe0f6" stroke="#334" stroke-width="1" />
<line x1="948" y1="106" x2="954" y2="102.5" stroke="#d23" stroke-width="1" />
<path d="M945.5 108.5h7v3.5l-4 2h-3z" fill="#fff" stroke="#334" stroke-width="0.9" />
<path d="M944 106.5c3 1 6 2 8.5 2.5l8-4.5" fill="none" stroke="#3a70b0" stroke-width="1.2" />
<text x="965.4" y="66.3" font-size="11.90" fill="#444" textLength="51.6" lengthAdjust="spacingAndGlyphs" >Add Point</text>
<text x="965.4" y="89.8" font-size="11.52" fill="#444" textLength="71.1" lengthAdjust="spacingAndGlyphs" >Add Split Line</text>
<text x="965.4" y="113.3" font-size="11.31" fill="#444" textLength="69.8" lengthAdjust="spacingAndGlyphs" >Pick Supports</text>
<line x1="1046.5" y1="51" x2="1046.5" y2="121" stroke="#c4c8c0" stroke-width="1" />
<text x="941.2" y="134.8" font-size="11.29" fill="#333" textLength="70.3" lengthAdjust="spacingAndGlyphs" >Shape Editing</text>
<path d="M1056.5 76L1065 69.5H1084L1076.5 77.5Z" fill="#8cc4ee" stroke="#2a6ab0" stroke-width="1" />
<path d="M1058.5 75.5l5-4h6M1066 76l4-3.5h8M1072 73l3-2.5" fill="none" stroke="#e8f6ff" stroke-width="1.3" />
<path d="M1056.5 76L1076.5 77.5V82.5L1056.5 81Z" fill="#d4ecfa" stroke="#2a6ab0" stroke-width="1" />
<path d="M1076.5 77.5L1084 69.5V74.5L1076.5 82.5Z" fill="#5a9ad8" stroke="#2a6ab0" stroke-width="1" />
<path d="M1063.6 61L1057.5 75M1063.8 61L1064.5 69.5M1064.5 61L1076 76.5M1065 60.5L1083 69" fill="none" stroke="#555" stroke-width="1" stroke-dasharray="1.6 1.4"/>
<circle cx="1063.6" cy="58.9" r="2" fill="#fff" stroke="#555" stroke-width="0.9"/>
<path d="M1075 58C1078.5 55.8 1083 56.8 1083 60.8C1083 62.3 1082.6 63.2 1082 63.8" fill="none" stroke="#2062b0" stroke-width="2" />
<path d="M1072.3 58.3L1076 55.2L1076.3 60.5Z" fill="#2062b0" />
<text x="1057.4" y="99.6" font-size="10.26" fill="#444" textLength="26.8" lengthAdjust="spacingAndGlyphs" >Reset</text>
<text x="1055.5" y="114" font-size="10.58" fill="#444" textLength="30.6" lengthAdjust="spacingAndGlyphs" >Shape</text>
<path d="M1131 57l-14 24h28z" fill="#f8e450" stroke="#555" stroke-width="1.2" />
<rect x="1129" y="64" width="3.5" height="9" fill="#222" />
<rect x="1129" y="75" width="3.5" height="3.5" fill="#222" />
<rect x="1134" y="65.5" width="13" height="17" fill="#f8f8f8" stroke="#333" stroke-width="1.1" />
<rect x="1136" y="67.5" width="6" height="4" fill="#3d6cb0" />
<line x1="1136" y1="75" x2="1145" y2="75" stroke="#555" stroke-width="1" />
<line x1="1136" y1="79" x2="1145" y2="79" stroke="#555" stroke-width="1" />
<text x="1096.7" y="100" font-size="11.20" fill="#444" textLength="69.7" lengthAdjust="spacingAndGlyphs" >Show Related</text>
<text x="1108.6" y="113.3" font-size="11.51" fill="#444" textLength="48.2" lengthAdjust="spacingAndGlyphs" >Warnings</text>
<text x="1110" y="134.8" font-size="11.80" fill="#333" textLength="43.5" lengthAdjust="spacingAndGlyphs" >Warning</text>
<rect x="1197.5" y="55.5" width="15" height="14" fill="#f4f4f4" stroke="#444" stroke-width="1.3" />
<circle cx="1200" cy="58" r="0.9" fill="#333"/>
<circle cx="1210" cy="58" r="0.9" fill="#333"/>
<circle cx="1200" cy="67" r="0.9" fill="#333"/>
<circle cx="1210" cy="67" r="0.9" fill="#333"/>
<path d="M1220.5 55v15h15l-8-15z" fill="#d6e6f5" stroke="#6a9acb" stroke-width="1.2" />
<path d="M1226 63l3 6" fill="none" stroke="#444" stroke-width="1" />
<line x1="1199" y1="79.5" x2="1199" y2="92.5" stroke="#444" stroke-width="1.2" />
<line x1="1197.5" y1="81" x2="1211.5" y2="81" stroke="#444" stroke-width="1.2" />
<line x1="1202.5" y1="79.5" x2="1202.5" y2="92.5" stroke="#444" stroke-width="1.2" />
<line x1="1197.5" y1="84.5" x2="1211.5" y2="84.5" stroke="#444" stroke-width="1.2" />
<line x1="1206" y1="79.5" x2="1206" y2="92.5" stroke="#444" stroke-width="1.2" />
<line x1="1197.5" y1="88" x2="1211.5" y2="88" stroke="#444" stroke-width="1.2" />
<line x1="1209.5" y1="79.5" x2="1209.5" y2="92.5" stroke="#444" stroke-width="1.2" />
<line x1="1197.5" y1="91.5" x2="1211.5" y2="91.5" stroke="#444" stroke-width="1.2" />
<path d="M1221 78v15h15v-6l-7-9z" fill="#f4f4f4" stroke="#bbb" stroke-width="1" />
<path d="M1197.5 116h14v-13M1199 116v-4M1203 116v-5M1207 116v-5M1211.5 103h-3M1211.5 107h-3M1211.5 111h-3" fill="none" stroke="#5a9ad8" stroke-width="1.3" />
<text x="1177.6" y="134.8" font-size="11.64" fill="#333" textLength="75.7" lengthAdjust="spacingAndGlyphs" >Reinforcement</text>
<rect x="0" y="141.5" width="1280" height="26.5" fill="#e3edd5" />
<line x1="0" y1="167.5" x2="1280" y2="167.5" stroke="#c9cfc0" stroke-width="1" />
<text x="-26.8" y="159.4" font-size="12.01" fill="#333" textLength="78.5" lengthAdjust="spacingAndGlyphs" >Modify | Floors</text>
<rect x="0" y="168" width="278" height="530" fill="#ececec" />
<text x="-26.5" y="183.5" font-size="12.00" fill="#222" textLength="54.7" lengthAdjust="spacingAndGlyphs" >Properties</text>
<path d="M263 174.5l9 9M272 174.5l-9 9" fill="none" stroke="#222" stroke-width="1.6" />
<line x1="0" y1="189" x2="278" y2="189" stroke="#dadada" stroke-width="1" />
<rect x="-1" y="191" width="276" height="67" fill="#efefef" stroke="#cdcdcd" stroke-width="1" />
<rect x="-1" y="191" width="41" height="67" fill="#f5f5f5" stroke="#d4d4d4" stroke-width="1" />
<g transform="translate(-5 207) scale(1.75)" stroke="#3a3a3a" stroke-width="0.86" stroke-linejoin="round"><path d="M0.5 8.5L7 12V16.5L0.5 13Z" fill="#ececec"/><path d="M0.5 8.5L7 1.5L13 5L7 12Z" fill="#dcdcdc"/><path d="M7 12L13 5L16.5 9.5V15L7 16.5Z" fill="#f7f7f7"/><path d="M2 14V10.5L4.5 11.8V15.2Z" fill="#3a3a3a"/></g>
<text x="45" y="228.6" font-size="11.44" fill="#222" textLength="42.4" lengthAdjust="spacingAndGlyphs" >3D View</text>
<path d="M266 223h8l-4 4.5z" fill="#333" />
<rect x="-1" y="261" width="194.5" height="21" fill="#e6e6e6" stroke="#cfcfcf" stroke-width="1" />
<text x="48" y="275.6" font-size="11.8" fill="#222" text-anchor="end">3D View: {3D}</text>
<path d="M183 268.5l4 4 4-4" fill="none" stroke="#444" stroke-width="1.2" />
<rect x="201.5" y="262.5" width="8" height="7" fill="#f4f4f4" stroke="#555" stroke-width="1" />
<rect x="201.5" y="271.5" width="8" height="7" fill="#f4f4f4" stroke="#555" stroke-width="1" />
<rect x="209" y="266" width="8" height="13" fill="#f4f4f4" stroke="#555" stroke-width="1" />
<rect x="211" y="268" width="4" height="3" fill="#3c6aa8" />
<text x="222" y="274.8" font-size="11.32" fill="#222" textLength="47.0" lengthAdjust="spacingAndGlyphs" >Edit Type</text>
<rect x="0" y="283.75" width="259" height="386.1" fill="#fff" />
<rect x="0" y="283.75" width="259" height="17.55" fill="#dcdcdc" />
<text x="20.6" y="296.35" font-size="12.3" fill="#222" text-anchor="end" textLength="47.6" lengthAdjust="spacingAndGlyphs">Graphics</text>
<path d="M247 290.75l3-3 3 3M247 294.75l3-3 3 3" fill="none" stroke="#222" stroke-width="1.4" />
<line x1="0" y1="318.35" x2="259" y2="318.35" stroke="#9a9a9a" stroke-width="1" stroke-dasharray="1 1"/>
<text x="35" y="313.8" font-size="12.3" fill="#222" text-anchor="end" textLength="58.7" lengthAdjust="spacingAndGlyphs">View Scale</text>
<text x="114" y="313.8" font-size="12.3" fill="#222" textLength="36.4" lengthAdjust="spacingAndGlyphs">1 : 100</text>
<rect x="111.5" y="301.8" width="135.5" height="16" fill="none" stroke="#111" stroke-width="1.3" />
<line x1="0" y1="335.9" x2="259" y2="335.9" stroke="#9a9a9a" stroke-width="1" stroke-dasharray="1 1"/>
<text x="39" y="331.35" font-size="12.3" fill="#8a8a8a" text-anchor="end" textLength="62.6" lengthAdjust="spacingAndGlyphs">Scale Value</text>
<text x="50.6" y="331.35" font-size="12.3" fill="#8a8a8a" textLength="9.9" lengthAdjust="spacingAndGlyphs">1:</text>
<text x="114" y="331.35" font-size="12.3" fill="#8a8a8a" textLength="19.9" lengthAdjust="spacingAndGlyphs">100</text>
<line x1="0" y1="353.45" x2="259" y2="353.45" stroke="#9a9a9a" stroke-width="1" stroke-dasharray="1 1"/>
<text x="39.7" y="348.9" font-size="12.3" fill="#222" text-anchor="end" textLength="62.2" lengthAdjust="spacingAndGlyphs">Detail Level</text>
<text x="114" y="348.9" font-size="12.3" fill="#222" textLength="42.3" lengthAdjust="spacingAndGlyphs">Medium</text>
<line x1="0" y1="371" x2="259" y2="371" stroke="#9a9a9a" stroke-width="1" stroke-dasharray="1 1"/>
<text x="63.2" y="366.45" font-size="12.3" fill="#222" text-anchor="end" textLength="73.8" lengthAdjust="spacingAndGlyphs">Parts Visibility</text>
<text x="114" y="366.45" font-size="12.3" fill="#222" textLength="74.1" lengthAdjust="spacingAndGlyphs">Show Original</text>
<line x1="0" y1="388.55" x2="259" y2="388.55" stroke="#9a9a9a" stroke-width="1" stroke-dasharray="1 1"/>
<text x="106.5" y="384" font-size="12.3" fill="#222" text-anchor="end" textLength="128.7" lengthAdjust="spacingAndGlyphs">Visibility/Graphics Ove...</text>
<rect x="112.5" y="372.5" width="134" height="15" fill="#e1e1e1" stroke="#adadad" stroke-width="1" />
<text x="163.5" y="383.7" font-size="11.54" fill="#222" textLength="29.5" lengthAdjust="spacingAndGlyphs" >Edit...</text>
<line x1="0" y1="406.1" x2="259" y2="406.1" stroke="#9a9a9a" stroke-width="1" stroke-dasharray="1 1"/>
<text x="105.5" y="401.55" font-size="12.3" fill="#222" text-anchor="end" textLength="128.3" lengthAdjust="spacingAndGlyphs">Graphic Display Options</text>
<rect x="112.5" y="390.05" width="134" height="15" fill="#e1e1e1" stroke="#adadad" stroke-width="1" />
<text x="163.5" y="401.25" font-size="11.54" fill="#222" textLength="29.5" lengthAdjust="spacingAndGlyphs" >Edit...</text>
<line x1="0" y1="423.65" x2="259" y2="423.65" stroke="#9a9a9a" stroke-width="1" stroke-dasharray="1 1"/>
<text x="31.8" y="419.1" font-size="12.3" fill="#222" text-anchor="end" textLength="50.9" lengthAdjust="spacingAndGlyphs">Discipline</text>
<text x="114" y="419.1" font-size="12.3" fill="#222" textLength="67.5" lengthAdjust="spacingAndGlyphs">Coordination</text>
<line x1="0" y1="441.2" x2="259" y2="441.2" stroke="#9a9a9a" stroke-width="1" stroke-dasharray="1 1"/>
<text x="80" y="436.65" font-size="12.3" fill="#222" text-anchor="end" textLength="102.5" lengthAdjust="spacingAndGlyphs">Show Hidden Lines</text>
<text x="114" y="436.65" font-size="12.3" fill="#222" textLength="68.1" lengthAdjust="spacingAndGlyphs">By Discipline</text>
<line x1="0" y1="458.75" x2="259" y2="458.75" stroke="#9a9a9a" stroke-width="1" stroke-dasharray="1 1"/>
<text x="109" y="454.2" font-size="12.3" fill="#222" text-anchor="end" textLength="131.0" lengthAdjust="spacingAndGlyphs">Default Analysis Displa...</text>
<text x="114" y="454.2" font-size="12.3" fill="#222" textLength="28.4" lengthAdjust="spacingAndGlyphs">None</text>
<line x1="0" y1="476.3" x2="259" y2="476.3" stroke="#9a9a9a" stroke-width="1" stroke-dasharray="1 1"/>
<text x="26.7" y="471.75" font-size="12.3" fill="#222" text-anchor="end" textLength="49.0" lengthAdjust="spacingAndGlyphs">Sun Path</text>
<rect x="115" y="463.25" width="11" height="11" fill="#fff" stroke="#333" stroke-width="1" />
<rect x="0" y="476.8" width="259" height="17.55" fill="#dcdcdc" />
<path d="M247 483.8l3-3 3 3M247 487.8l3-3 3 3" fill="none" stroke="#222" stroke-width="1.4" />
<line x1="0" y1="511.4" x2="259" y2="511.4" stroke="#9a9a9a" stroke-width="1" stroke-dasharray="1 1"/>
<text x="16.5" y="506.85" font-size="12.3" fill="#222" text-anchor="end" textLength="32.4" lengthAdjust="spacingAndGlyphs">TITLE</text>
<text x="114" y="506.85" font-size="12.3" fill="#222" textLength="28.4" lengthAdjust="spacingAndGlyphs">3. 3D</text>
<rect x="249.5" y="495.85" width="9" height="14" fill="#e6e6e6" stroke="#aaa" stroke-width="1" />
<line x1="0" y1="528.95" x2="259" y2="528.95" stroke="#9a9a9a" stroke-width="1" stroke-dasharray="1 1"/>
<text x="40" y="524.4" font-size="12.3" fill="#222" text-anchor="end" textLength="60.0" lengthAdjust="spacingAndGlyphs">SUB TITLE</text>
<text x="114" y="524.4" font-size="12.3" fill="#222" textLength="67.2" lengthAdjust="spacingAndGlyphs">3.1. 3D View</text>
<rect x="249.5" y="513.4" width="9" height="14" fill="#e6e6e6" stroke="#aaa" stroke-width="1" />
<rect x="0" y="529.45" width="259" height="17.55" fill="#dcdcdc" />
<text x="12.5" y="542.05" font-size="12.3" fill="#222" text-anchor="end" textLength="39.7" lengthAdjust="spacingAndGlyphs">Extents</text>
<path d="M247 536.45l3-3 3 3M247 540.45l3-3 3 3" fill="none" stroke="#222" stroke-width="1.4" />
<line x1="0" y1="564.05" x2="259" y2="564.05" stroke="#9a9a9a" stroke-width="1" stroke-dasharray="1 1"/>
<text x="34.3" y="559.5" font-size="12.3" fill="#222" text-anchor="end" textLength="54.7" lengthAdjust="spacingAndGlyphs">Crop View</text>
<rect x="115" y="551" width="11" height="11" fill="#fff" stroke="#333" stroke-width="1" />
<line x1="0" y1="581.6" x2="259" y2="581.6" stroke="#9a9a9a" stroke-width="1" stroke-dasharray="1 1"/>
<text x="82.3" y="577.05" font-size="12.3" fill="#222" text-anchor="end" textLength="105.0" lengthAdjust="spacingAndGlyphs">Crop Region Visible</text>
<rect x="115" y="568.55" width="11" height="11" fill="#fff" stroke="#333" stroke-width="1" />
<line x1="0" y1="599.15" x2="259" y2="599.15" stroke="#9a9a9a" stroke-width="1" stroke-dasharray="1 1"/>
<text x="68" y="594.6" font-size="12.3" fill="#222" text-anchor="end" textLength="86.0" lengthAdjust="spacingAndGlyphs">Annotation Crop</text>
<rect x="115" y="586.1" width="11" height="11" fill="#fff" stroke="#333" stroke-width="1" />
<line x1="0" y1="616.7" x2="259" y2="616.7" stroke="#9a9a9a" stroke-width="1" stroke-dasharray="1 1"/>
<text x="55.6" y="612.15" font-size="12.3" fill="#222" text-anchor="end" textLength="76.7" lengthAdjust="spacingAndGlyphs">Far Clip Active</text>
<rect x="115" y="603.65" width="11" height="11" fill="#fff" stroke="#333" stroke-width="1" />
<line x1="0" y1="634.25" x2="259" y2="634.25" stroke="#9a9a9a" stroke-width="1" stroke-dasharray="1 1"/>
<text x="54.7" y="629.7" font-size="12.3" fill="#8a8a8a" text-anchor="end" textLength="76.5" lengthAdjust="spacingAndGlyphs">Far Clip Offset</text>
<text x="114" y="629.7" font-size="12.3" fill="#8a8a8a" textLength="49.6" lengthAdjust="spacingAndGlyphs">304800.0</text>
<line x1="0" y1="651.8" x2="259" y2="651.8" stroke="#9a9a9a" stroke-width="1" stroke-dasharray="1 1"/>
<text x="34.3" y="647.25" font-size="12.3" fill="#222" text-anchor="end" textLength="57.6" lengthAdjust="spacingAndGlyphs">Scope Box</text>
<text x="114" y="647.25" font-size="12.3" fill="#222" textLength="28.4" lengthAdjust="spacingAndGlyphs">None</text>
<line x1="0" y1="669.35" x2="259" y2="669.35" stroke="#9a9a9a" stroke-width="1" stroke-dasharray="1 1"/>
<text x="41" y="664.8" font-size="12.3" fill="#222" text-anchor="end" textLength="63.5" lengthAdjust="spacingAndGlyphs">Section Box</text>
<rect x="115" y="656.3" width="11" height="11" fill="#fff" stroke="#333" stroke-width="1" />
<line x1="111.5" y1="301.3" x2="111.5" y2="669.85" stroke="#9a9a9a" stroke-width="1" stroke-dasharray="1 1"/>
<line x1="247.5" y1="301.3" x2="247.5" y2="669.85" stroke="#9a9a9a" stroke-width="1" stroke-dasharray="1 1"/>
<line x1="258.5" y1="301.3" x2="258.5" y2="669.85" stroke="#9a9a9a" stroke-width="1" stroke-dasharray="1 1"/>
<rect x="0" y="283.75" width="259" height="17.55" fill="#dcdcdc" />
<text x="20.6" y="296.35" font-size="12.3" fill="#222" text-anchor="end" textLength="47.6" lengthAdjust="spacingAndGlyphs">Graphics</text>
<path d="M247 290.75l3-3 3 3M247 294.75l3-3 3 3" fill="none" stroke="#222" stroke-width="1.4" />
<rect x="0" y="476.8" width="259" height="17.55" fill="#dcdcdc" />
<path d="M247 483.8l3-3 3 3M247 487.8l3-3 3 3" fill="none" stroke="#222" stroke-width="1.4" />
<rect x="0" y="529.45" width="259" height="17.55" fill="#dcdcdc" />
<text x="12.5" y="542.05" font-size="12.3" fill="#222" text-anchor="end" textLength="39.7" lengthAdjust="spacingAndGlyphs">Extents</text>
<path d="M247 536.45l3-3 3 3M247 540.45l3-3 3 3" fill="none" stroke="#222" stroke-width="1.4" />
<rect x="259" y="283.5" width="19" height="386" fill="#f0f0f0" />
<path d="M263.5 295l4-4 4 4" fill="none" stroke="#333" stroke-width="1.5" />
<rect x="261.25" y="300.4" width="13.5" height="201.3" fill="#cdcdcd" />
<path d="M263.5 661l4 4 4-4" fill="none" stroke="#333" stroke-width="1.5" />
<text x="52.5" y="688" font-size="12" fill="#1a56c8" text-anchor="end">Properties help</text>
<line x1="-5" y1="690.5" x2="52.5" y2="690.5" stroke="#1a56c8" stroke-width="1" />
<rect x="203" y="674" width="71" height="20" fill="#cccccc" stroke="#c4c4c4" stroke-width="1" />
<text x="222" y="689" font-size="12.79" fill="#8f8f8f" textLength="32.0" lengthAdjust="spacingAndGlyphs" >Apply</text>
<rect x="280" y="168" width="773" height="530" fill="#fff" />
<rect x="280" y="168" width="773" height="21" fill="#cacaca" />
<rect x="280" y="168" width="125" height="21" fill="#fff" />
<g transform="translate(286 172) scale(0.86)" stroke="#3a3a3a" stroke-width="1.28" stroke-linejoin="round"><path d="M0.5 8.5L7 12V16.5L0.5 13Z" fill="#ececec"/><path d="M0.5 8.5L7 1.5L13 5L7 12Z" fill="#dcdcdc"/><path d="M7 12L13 5L16.5 9.5V15L7 16.5Z" fill="#f7f7f7"/><path d="M2 14V10.5L4.5 11.8V15.2Z" fill="#3a3a3a"/></g>
<text x="308.6" y="184.2" font-size="11.77" fill="#222" textLength="22.9" lengthAdjust="spacingAndGlyphs" >{3D}</text>
<path d="M390.5 174.5l8 8M398.5 174.5l-8 8" fill="none" stroke="#222" stroke-width="1.5" />
<path d="M410.9 171.5H420.4L424.9 174V186H410.9Z" fill="#e4e4e4" stroke="#7a7a7a" stroke-width="1" />
<line x1="413.2" y1="173.5" x2="413.2" y2="176.5" stroke="#666" stroke-width="1" />
<line x1="415.8" y1="173.5" x2="415.8" y2="176.5" stroke="#666" stroke-width="1" />
<line x1="418.4" y1="173.5" x2="418.4" y2="176.5" stroke="#666" stroke-width="1" />
<line x1="412.9" y1="178.5" x2="422.9" y2="178.5" stroke="#777" stroke-width="1" stroke-dasharray="1.6 1"/>
<line x1="412.9" y1="181" x2="422.9" y2="181" stroke="#777" stroke-width="1" stroke-dasharray="1.6 1"/>
<line x1="412.9" y1="183.5" x2="422.9" y2="183.5" stroke="#777" stroke-width="1" stroke-dasharray="1.6 1"/>
<line x1="417.9" y1="177" x2="417.9" y2="185" stroke="#777" stroke-width="0.9" />
<line x1="420.1" y1="177" x2="420.1" y2="185" stroke="#777" stroke-width="0.9" />
<line x1="422.3" y1="177" x2="422.3" y2="185" stroke="#777" stroke-width="0.9" />
<text x="433.6" y="184.2" font-size="11.80" fill="#333" textLength="25.2" lengthAdjust="spacingAndGlyphs" >BASE</text>
<path d="M535.9 171.5H545.4L549.9 174V186H535.9Z" fill="#e4e4e4" stroke="#7a7a7a" stroke-width="1" />
<line x1="538.2" y1="173.5" x2="538.2" y2="176.5" stroke="#666" stroke-width="1" />
<line x1="540.8" y1="173.5" x2="540.8" y2="176.5" stroke="#666" stroke-width="1" />
<line x1="543.4" y1="173.5" x2="543.4" y2="176.5" stroke="#666" stroke-width="1" />
<line x1="537.9" y1="178.5" x2="547.9" y2="178.5" stroke="#777" stroke-width="1" stroke-dasharray="1.6 1"/>
<line x1="537.9" y1="181" x2="547.9" y2="181" stroke="#777" stroke-width="1" stroke-dasharray="1.6 1"/>
<line x1="537.9" y1="183.5" x2="547.9" y2="183.5" stroke="#777" stroke-width="1" stroke-dasharray="1.6 1"/>
<line x1="542.9" y1="177" x2="542.9" y2="185" stroke="#777" stroke-width="0.9" />
<line x1="545.1" y1="177" x2="545.1" y2="185" stroke="#777" stroke-width="0.9" />
<line x1="547.3" y1="177" x2="547.3" y2="185" stroke="#777" stroke-width="0.9" />
<text x="558.2" y="184.2" font-size="11.80" fill="#333" textLength="26.5" lengthAdjust="spacingAndGlyphs" >T O F</text>
<path d="M661.8 171.5H671.3L675.8 174V186H661.8Z" fill="#e4e4e4" stroke="#7a7a7a" stroke-width="1" />
<line x1="664.1" y1="173.5" x2="664.1" y2="176.5" stroke="#666" stroke-width="1" />
<line x1="666.7" y1="173.5" x2="666.7" y2="176.5" stroke="#666" stroke-width="1" />
<line x1="669.3" y1="173.5" x2="669.3" y2="176.5" stroke="#666" stroke-width="1" />
<line x1="663.8" y1="178.5" x2="673.8" y2="178.5" stroke="#777" stroke-width="1" stroke-dasharray="1.6 1"/>
<line x1="663.8" y1="181" x2="673.8" y2="181" stroke="#777" stroke-width="1" stroke-dasharray="1.6 1"/>
<line x1="663.8" y1="183.5" x2="673.8" y2="183.5" stroke="#777" stroke-width="1" stroke-dasharray="1.6 1"/>
<line x1="668.8" y1="177" x2="668.8" y2="185" stroke="#777" stroke-width="0.9" />
<line x1="671" y1="177" x2="671" y2="185" stroke="#777" stroke-width="0.9" />
<line x1="673.2" y1="177" x2="673.2" y2="185" stroke="#777" stroke-width="0.9" />
<text x="683.2" y="184.2" font-size="11.80" fill="#333" textLength="12.8" lengthAdjust="spacingAndGlyphs" >E0</text>
<rect x="1037" y="174.5" width="11" height="1.5" fill="#222" />
<path d="M1037 178h11l-5.5 4.5z" fill="#222" />
<rect x="280" y="189" width="755" height="490" fill="#fff" />
<path d="M778 232h1v1h-1zM794 205h1v1h-1zM690 312h1v1h-1zM702 253h1v1h-1zM827 275h1v1h-1zM920 259h1v1h-1zM942 233h1v1h-1zM974 462h1v1h-1zM907 206h1v1h-1zM909 195h1v1h-1zM744 329h1v1h-1zM795 353h1v1h-1zM951 442h1v1h-1zM1032 324h1v1h-1zM717 195h1v1h-1zM856 231h1v1h-1zM1026 439h1v1h-1zM1029 436h1v1h-1zM761 264h1v1h-1zM1018 318h1v1h-1zM730 248h1v1h-1zM997 432h1v1h-1zM1000 415h1v1h-1zM837 240h1v1h-1zM782 421h1v1h-1zM806 305h1v1h-1zM790 321h1v1h-1zM998 310h1v1h-1zM958 238h1v1h-1zM750 269h1v1h-1zM1013 264h1v1h-1zM747 210h1v1h-1zM1022 252h1v1h-1zM806 330h1v1h-1zM717 314h1v1h-1zM929 194h1v1h-1zM827 287h1v1h-1zM774 277h1v1h-1zM864 243h1v1h-1zM1010 219h1v1h-1zM974 441h1v1h-1zM846 247h1v1h-1zM771 256h1v1h-1zM1029 232h1v1h-1zM899 201h1v1h-1zM994 370h1v1h-1zM963 229h1v1h-1zM792 219h1v1h-1zM841 189h1v1h-1zM932 248h1v1h-1zM757 383h1v1h-1zM766 338h1v1h-1zM832 223h1v1h-1zM1010 194h1v1h-1zM1014 250h1v1h-1zM709 340h1v1h-1zM786 280h1v1h-1zM974 223h1v1h-1zM797 302h1v1h-1zM674 218h1v1h-1zM750 266h1v1h-1zM727 297h1v1h-1zM991 424h1v1h-1zM1002 461h1v1h-1zM928 203h1v1h-1zM768 403h1v1h-1zM844 252h1v1h-1zM1022 225h1v1h-1zM1017 435h1v1h-1zM664 198h1v1h-1zM995 326h1v1h-1zM656 302h1v1h-1zM751 373h1v1h-1zM698 209h1v1h-1zM1019 375h1v1h-1zM784 310h1v1h-1zM996 445h1v1h-1zM938 198h1v1h-1zM734 292h1v1h-1zM669 207h1v1h-1zM753 405h1v1h-1zM784 267h1v1h-1zM889 265h1v1h-1zM942 454h1v1h-1zM751 313h1v1h-1zM1007 242h1v1h-1zM974 274h1v1h-1zM826 264h1v1h-1zM1014 219h1v1h-1zM774 247h1v1h-1zM690 236h1v1h-1zM1017 279h1v1h-1zM791 309h1v1h-1zM997 311h1v1h-1zM763 340h1v1h-1zM697 331h1v1h-1zM838 204h1v1h-1zM740 306h1v1h-1zM702 260h1v1h-1zM943 200h1v1h-1zM841 257h1v1h-1zM690 317h1v1h-1zM995 268h1v1h-1zM710 334h1v1h-1zM734 265h1v1h-1zM986 350h1v1h-1zM990 219h1v1h-1zM752 374h1v1h-1zM668 232h1v1h-1zM791 254h1v1h-1zM879 248h1v1h-1zM835 228h1v1h-1zM756 192h1v1h-1zM998 201h1v1h-1zM951 192h1v1h-1zM670 286h1v1h-1zM745 404h1v1h-1zM772 250h1v1h-1zM666 201h1v1h-1zM993 208h1v1h-1zM977 424h1v1h-1zM787 393h1v1h-1zM763 251h1v1h-1zM844 220h1v1h-1zM770 392h1v1h-1zM780 243h1v1h-1zM932 218h1v1h-1zM694 300h1v1h-1zM831 230h1v1h-1zM809 403h1v1h-1zM989 413h1v1h-1zM979 386h1v1h-1zM828 279h1v1h-1zM693 310h1v1h-1zM1015 249h1v1h-1zM937 461h1v1h-1zM869 254h1v1h-1zM789 374h1v1h-1zM969 451h1v1h-1zM956 237h1v1h-1zM744 229h1v1h-1zM897 197h1v1h-1zM794 326h1v1h-1zM1005 365h1v1h-1zM955 452h1v1h-1zM914 250h1v1h-1zM967 417h1v1h-1zM776 313h1v1h-1zM1009 204h1v1h-1zM670 223h1v1h-1zM802 360h1v1h-1zM932 237h1v1h-1zM1014 416h1v1h-1zM766 206h1v1h-1zM1026 430h1v1h-1zM772 313h1v1h-1zM798 387h1v1h-1zM755 311h1v1h-1zM992 201h1v1h-1zM963 440h1v1h-1zM958 247h1v1h-1zM1009 256h1v1h-1zM1000 207h1v1h-1zM753 225h1v1h-1zM912 192h1v1h-1zM729 199h1v1h-1zM825 217h1v1h-1zM740 205h1v1h-1zM865 230h1v1h-1zM782 237h1v1h-1zM909 250h1v1h-1zM1001 252h1v1h-1zM708 241h1v1h-1zM732 208h1v1h-1zM842 193h1v1h-1zM881 190h1v1h-1zM667 216h1v1h-1zM729 194h1v1h-1zM938 236h1v1h-1zM1023 414h1v1h-1zM732 395h1v1h-1zM747 253h1v1h-1zM842 271h1v1h-1zM783 291h1v1h-1zM986 190h1v1h-1zM771 231h1v1h-1zM876 214h1v1h-1zM778 433h1v1h-1zM1015 385h1v1h-1zM786 342h1v1h-1zM720 281h1v1h-1zM954 277h1v1h-1zM657 277h1v1h-1zM909 246h1v1h-1zM865 266h1v1h-1zM720 340h1v1h-1zM993 357h1v1h-1zM979 280h1v1h-1zM965 277h1v1h-1zM1019 332h1v1h-1zM748 302h1v1h-1zM739 278h1v1h-1zM791 243h1v1h-1zM691 267h1v1h-1zM704 317h1v1h-1zM716 291h1v1h-1zM827 226h1v1h-1zM763 305h1v1h-1zM949 444h1v1h-1zM897 241h1v1h-1zM940 213h1v1h-1zM805 405h1v1h-1zM762 215h1v1h-1zM961 264h1v1h-1zM1023 373h1v1h-1zM762 246h1v1h-1zM940 213h1v1h-1zM953 429h1v1h-1zM779 242h1v1h-1zM777 295h1v1h-1zM999 463h1v1h-1zM876 212h1v1h-1zM718 317h1v1h-1zM763 380h1v1h-1zM768 317h1v1h-1zM778 322h1v1h-1zM1000 439h1v1h-1zM1020 368h1v1h-1zM886 275h1v1h-1zM1017 328h1v1h-1zM769 288h1v1h-1zM666 243h1v1h-1zM825 213h1v1h-1zM863 221h1v1h-1zM752 216h1v1h-1zM751 330h1v1h-1zM683 316h1v1h-1zM736 275h1v1h-1zM935 463h1v1h-1zM693 348h1v1h-1zM663 221h1v1h-1zM720 293h1v1h-1zM845 264h1v1h-1zM957 442h1v1h-1zM914 277h1v1h-1zM723 357h1v1h-1zM985 208h1v1h-1zM731 363h1v1h-1zM901 246h1v1h-1zM707 243h1v1h-1zM987 374h1v1h-1zM736 283h1v1h-1zM1006 352h1v1h-1zM936 263h1v1h-1zM1031 255h1v1h-1zM866 241h1v1h-1zM830 282h1v1h-1zM792 415h1v1h-1zM692 237h1v1h-1zM690 287h1v1h-1zM917 199h1v1h-1zM915 231h1v1h-1zM1022 445h1v1h-1zM682 201h1v1h-1zM1028 442h1v1h-1zM744 371h1v1h-1zM739 230h1v1h-1zM746 238h1v1h-1zM791 421h1v1h-1zM662 247h1v1h-1zM677 240h1v1h-1zM972 215h1v1h-1zM767 307h1v1h-1zM1006 244h1v1h-1zM739 211h1v1h-1zM694 214h1v1h-1zM869 204h1v1h-1zM814 358h1v1h-1zM852 190h1v1h-1zM771 440h1v1h-1zM957 273h1v1h-1zM898 203h1v1h-1zM973 231h1v1h-1zM905 263h1v1h-1zM919 201h1v1h-1zM767 256h1v1h-1zM1001 283h1v1h-1zM862 216h1v1h-1zM969 224h1v1h-1zM1006 198h1v1h-1zM1022 288h1v1h-1zM826 260h1v1h-1zM769 209h1v1h-1zM692 348h1v1h-1zM781 433h1v1h-1zM989 222h1v1h-1zM859 223h1v1h-1zM718 344h1v1h-1zM986 334h1v1h-1zM852 273h1v1h-1zM744 361h1v1h-1zM748 401h1v1h-1zM1000 406h1v1h-1zM731 370h1v1h-1zM954 215h1v1h-1zM788 236h1v1h-1zM1011 451h1v1h-1zM971 421h1v1h-1zM954 262h1v1h-1zM743 246h1v1h-1zM745 331h1v1h-1zM956 190h1v1h-1zM662 221h1v1h-1zM725 267h1v1h-1zM793 254h1v1h-1zM1018 335h1v1h-1zM694 349h1v1h-1zM908 211h1v1h-1zM1025 205h1v1h-1zM993 400h1v1h-1zM1026 377h1v1h-1zM709 338h1v1h-1zM768 300h1v1h-1zM775 233h1v1h-1zM760 294h1v1h-1zM856 272h1v1h-1zM785 302h1v1h-1zM788 242h1v1h-1zM812 334h1v1h-1zM976 417h1v1h-1zM740 216h1v1h-1zM921 209h1v1h-1zM779 189h1v1h-1zM879 254h1v1h-1zM1033 422h1v1h-1zM763 245h1v1h-1zM730 266h1v1h-1zM939 464h1v1h-1zM718 372h1v1h-1zM697 352h1v1h-1zM1000 394h1v1h-1zM1027 315h1v1h-1zM733 259h1v1h-1zM731 321h1v1h-1zM930 204h1v1h-1zM746 377h1v1h-1zM834 230h1v1h-1zM954 427h1v1h-1zM674 258h1v1h-1zM739 383h1v1h-1zM925 243h1v1h-1zM954 447h1v1h-1zM795 276h1v1h-1zM712 364h1v1h-1zM957 453h1v1h-1zM927 197h1v1h-1zM1013 317h1v1h-1zM1027 378h1v1h-1zM663 255h1v1h-1zM1005 284h1v1h-1zM949 447h1v1h-1zM857 219h1v1h-1zM1002 389h1v1h-1zM722 316h1v1h-1zM753 197h1v1h-1zM735 264h1v1h-1zM709 221h1v1h-1zM770 307h1v1h-1zM970 254h1v1h-1zM680 193h1v1h-1zM792 325h1v1h-1zM981 220h1v1h-1zM776 248h1v1h-1zM792 223h1v1h-1zM1014 403h1v1h-1zM744 327h1v1h-1zM1015 331h1v1h-1zM891 251h1v1h-1zM829 254h1v1h-1zM753 320h1v1h-1zM712 228h1v1h-1zM719 358h1v1h-1zM1018 266h1v1h-1zM794 340h1v1h-1zM716 296h1v1h-1zM946 431h1v1h-1zM743 265h1v1h-1zM712 286h1v1h-1zM777 310h1v1h-1zM717 215h1v1h-1zM920 265h1v1h-1zM878 244h1v1h-1zM876 220h1v1h-1zM739 273h1v1h-1zM715 254h1v1h-1zM773 280h1v1h-1zM689 203h1v1h-1zM682 301h1v1h-1zM776 327h1v1h-1zM700 264h1v1h-1zM998 326h1v1h-1zM884 272h1v1h-1zM1019 220h1v1h-1zM777 239h1v1h-1zM967 439h1v1h-1zM1000 308h1v1h-1zM1004 422h1v1h-1zM860 286h1v1h-1zM985 347h1v1h-1zM784 416h1v1h-1zM936 246h1v1h-1zM934 279h1v1h-1zM873 219h1v1h-1zM793 294h1v1h-1zM919 225h1v1h-1zM690 340h1v1h-1zM959 252h1v1h-1zM770 284h1v1h-1zM726 347h1v1h-1zM909 230h1v1h-1zM1034 351h1v1h-1zM784 396h1v1h-1zM745 263h1v1h-1zM722 363h1v1h-1zM732 358h1v1h-1zM912 230h1v1h-1zM804 233h1v1h-1zM711 295h1v1h-1zM725 222h1v1h-1zM788 343h1v1h-1zM802 294h1v1h-1zM760 285h1v1h-1zM677 265h1v1h-1zM928 452h1v1h-1zM986 407h1v1h-1zM703 195h1v1h-1zM752 256h1v1h-1zM935 206h1v1h-1zM981 454h1v1h-1zM917 190h1v1h-1zM798 266h1v1h-1zM954 427h1v1h-1zM916 281h1v1h-1zM942 232h1v1h-1zM1009 214h1v1h-1zM986 317h1v1h-1zM753 400h1v1h-1zM692 332h1v1h-1zM817 354h1v1h-1zM835 223h1v1h-1zM837 214h1v1h-1zM994 198h1v1h-1zM1008 326h1v1h-1zM1002 422h1v1h-1zM938 256h1v1h-1zM1005 235h1v1h-1zM795 349h1v1h-1zM879 236h1v1h-1zM702 271h1v1h-1zM1015 372h1v1h-1zM885 276h1v1h-1zM680 191h1v1h-1zM1032 385h1v1h-1zM1023 279h1v1h-1zM659 309h1v1h-1zM851 282h1v1h-1zM906 465h1v1h-1zM1032 369h1v1h-1zM740 383h1v1h-1zM827 334h1v1h-1zM781 214h1v1h-1zM771 283h1v1h-1zM901 234h1v1h-1zM783 218h1v1h-1zM782 266h1v1h-1zM740 305h1v1h-1zM1004 217h1v1h-1zM841 245h1v1h-1zM925 269h1v1h-1zM672 291h1v1h-1zM1033 281h1v1h-1zM953 439h1v1h-1zM1023 375h1v1h-1zM870 245h1v1h-1zM772 293h1v1h-1zM792 198h1v1h-1zM758 330h1v1h-1zM715 270h1v1h-1zM979 285h1v1h-1zM727 194h1v1h-1zM779 375h1v1h-1zM997 222h1v1h-1zM963 267h1v1h-1zM1032 215h1v1h-1zM848 272h1v1h-1zM666 252h1v1h-1zM730 239h1v1h-1zM918 264h1v1h-1zM849 280h1v1h-1zM706 329h1v1h-1zM707 278h1v1h-1zM740 317h1v1h-1zM1023 427h1v1h-1zM976 240h1v1h-1zM853 193h1v1h-1zM982 247h1v1h-1zM681 209h1v1h-1zM999 441h1v1h-1zM1006 349h1v1h-1zM982 230h1v1h-1zM1018 270h1v1h-1zM971 260h1v1h-1zM1017 295h1v1h-1zM845 196h1v1h-1zM735 289h1v1h-1zM1004 325h1v1h-1zM954 246h1v1h-1zM760 373h1v1h-1zM950 273h1v1h-1zM694 308h1v1h-1zM712 253h1v1h-1zM874 244h1v1h-1zM731 200h1v1h-1zM917 233h1v1h-1zM933 218h1v1h-1zM780 220h1v1h-1zM735 199h1v1h-1zM993 307h1v1h-1zM769 395h1v1h-1zM733 375h1v1h-1zM1023 282h1v1h-1zM668 317h1v1h-1zM770 358h1v1h-1zM697 276h1v1h-1zM974 202h1v1h-1zM899 213h1v1h-1zM1013 263h1v1h-1zM887 248h1v1h-1zM889 245h1v1h-1zM926 216h1v1h-1zM695 326h1v1h-1zM797 390h1v1h-1zM1021 414h1v1h-1zM926 461h1v1h-1zM989 266h1v1h-1zM958 433h1v1h-1zM694 233h1v1h-1zM665 217h1v1h-1zM1023 296h1v1h-1zM992 225h1v1h-1zM1005 424h1v1h-1zM923 459h1v1h-1zM842 285h1v1h-1zM1033 318h1v1h-1zM895 239h1v1h-1zM722 211h1v1h-1zM778 364h1v1h-1zM973 391h1v1h-1zM943 202h1v1h-1zM908 269h1v1h-1zM988 206h1v1h-1zM741 393h1v1h-1zM885 283h1v1h-1zM1017 414h1v1h-1zM706 277h1v1h-1zM875 224h1v1h-1zM848 230h1v1h-1zM967 251h1v1h-1zM1029 284h1v1h-1zM1005 279h1v1h-1zM762 412h1v1h-1zM941 215h1v1h-1zM687 260h1v1h-1zM767 270h1v1h-1zM983 374h1v1h-1zM695 334h1v1h-1zM715 314h1v1h-1zM798 224h1v1h-1zM672 208h1v1h-1zM770 208h1v1h-1zM840 198h1v1h-1zM868 244h1v1h-1zM782 255h1v1h-1zM985 415h1v1h-1zM770 256h1v1h-1zM948 252h1v1h-1zM656 264h1v1h-1zM734 344h1v1h-1zM851 267h1v1h-1zM1011 271h1v1h-1zM996 195h1v1h-1zM773 192h1v1h-1zM771 341h1v1h-1zM921 258h1v1h-1zM1028 243h1v1h-1zM957 216h1v1h-1zM993 247h1v1h-1zM1012 223h1v1h-1zM1019 218h1v1h-1zM930 281h1v1h-1zM963 276h1v1h-1zM1018 212h1v1h-1zM1004 329h1v1h-1zM932 248h1v1h-1zM968 422h1v1h-1zM690 193h1v1h-1zM752 391h1v1h-1zM933 208h1v1h-1zM889 217h1v1h-1zM815 261h1v1h-1zM964 241h1v1h-1zM1016 283h1v1h-1zM697 308h1v1h-1zM878 268h1v1h-1zM792 391h1v1h-1zM783 386h1v1h-1zM718 263h1v1h-1zM1026 375h1v1h-1zM1029 201h1v1h-1zM747 338h1v1h-1zM1009 439h1v1h-1zM859 218h1v1h-1zM957 419h1v1h-1zM776 231h1v1h-1zM777 337h1v1h-1zM990 291h1v1h-1zM793 268h1v1h-1zM867 215h1v1h-1zM695 229h1v1h-1zM951 233h1v1h-1zM947 234h1v1h-1zM837 269h1v1h-1zM783 396h1v1h-1zM1029 430h1v1h-1zM989 436h1v1h-1zM771 239h1v1h-1zM1034 344h1v1h-1zM752 196h1v1h-1zM662 309h1v1h-1zM752 295h1v1h-1zM745 394h1v1h-1zM1034 420h1v1h-1zM873 231h1v1h-1zM962 438h1v1h-1zM722 190h1v1h-1zM745 359h1v1h-1zM735 210h1v1h-1zM780 253h1v1h-1zM935 260h1v1h-1zM1034 302h1v1h-1zM680 277h1v1h-1zM895 247h1v1h-1zM861 265h1v1h-1zM769 365h1v1h-1zM1004 455h1v1h-1zM788 208h1v1h-1zM962 417h1v1h-1zM975 429h1v1h-1zM1028 309h1v1h-1zM783 308h1v1h-1zM702 203h1v1h-1zM889 248h1v1h-1zM983 372h1v1h-1zM721 265h1v1h-1zM678 276h1v1h-1zM973 403h1v1h-1zM657 256h1v1h-1zM993 224h1v1h-1zM973 439h1v1h-1zM981 426h1v1h-1zM941 249h1v1h-1zM685 290h1v1h-1zM747 359h1v1h-1zM944 251h1v1h-1zM739 394h1v1h-1zM959 265h1v1h-1zM777 404h1v1h-1zM993 292h1v1h-1zM1005 398h1v1h-1zM859 278h1v1h-1zM1011 456h1v1h-1zM753 404h1v1h-1zM708 335h1v1h-1zM726 270h1v1h-1zM684 301h1v1h-1zM825 283h1v1h-1zM675 265h1v1h-1zM983 225h1v1h-1zM956 449h1v1h-1zM886 190h1v1h-1zM696 261h1v1h-1zM746 352h1v1h-1zM795 315h1v1h-1zM876 282h1v1h-1zM926 194h1v1h-1zM775 362h1v1h-1zM716 294h1v1h-1zM753 198h1v1h-1zM790 246h1v1h-1zM689 197h1v1h-1zM862 236h1v1h-1zM1006 439h1v1h-1zM961 214h1v1h-1zM831 202h1v1h-1zM985 346h1v1h-1zM842 212h1v1h-1zM715 329h1v1h-1zM681 267h1v1h-1zM688 330h1v1h-1zM950 202h1v1h-1zM704 278h1v1h-1zM980 271h1v1h-1zM682 292h1v1h-1zM1023 269h1v1h-1zM980 208h1v1h-1zM996 294h1v1h-1zM1024 245h1v1h-1zM935 234h1v1h-1zM1023 428h1v1h-1zM1015 396h1v1h-1zM968 422h1v1h-1zM780 211h1v1h-1zM791 301h1v1h-1zM1018 269h1v1h-1zM1010 228h1v1h-1zM853 270h1v1h-1zM728 227h1v1h-1zM924 273h1v1h-1zM725 242h1v1h-1zM725 230h1v1h-1zM875 261h1v1h-1zM1014 297h1v1h-1zM987 367h1v1h-1zM985 355h1v1h-1zM970 249h1v1h-1zM726 277h1v1h-1zM844 221h1v1h-1zM1012 302h1v1h-1zM763 243h1v1h-1zM731 198h1v1h-1zM664 236h1v1h-1zM994 428h1v1h-1zM883 264h1v1h-1zM784 427h1v1h-1zM974 421h1v1h-1zM832 217h1v1h-1zM741 227h1v1h-1zM1015 336h1v1h-1zM1007 409h1v1h-1zM726 286h1v1h-1zM842 192h1v1h-1zM765 347h1v1h-1zM882 221h1v1h-1zM901 214h1v1h-1zM773 404h1v1h-1zM763 324h1v1h-1zM908 237h1v1h-1zM717 279h1v1h-1zM1029 295h1v1h-1zM732 199h1v1h-1zM995 352h1v1h-1zM709 276h1v1h-1zM734 256h1v1h-1zM865 191h1v1h-1zM895 221h1v1h-1zM891 210h1v1h-1zM991 277h1v1h-1zM973 261h1v1h-1zM976 434h1v1h-1zM1023 248h1v1h-1zM685 262h1v1h-1zM1009 296h1v1h-1zM1016 346h1v1h-1zM913 244h1v1h-1zM971 417h1v1h-1zM826 227h1v1h-1zM775 378h1v1h-1zM917 241h1v1h-1zM725 221h1v1h-1zM998 439h1v1h-1zM752 326h1v1h-1zM960 433h1v1h-1zM900 231h1v1h-1zM910 256h1v1h-1zM991 415h1v1h-1zM774 291h1v1h-1zM716 371h1v1h-1zM931 448h1v1h-1zM780 195h1v1h-1zM1022 378h1v1h-1zM1027 231h1v1h-1zM747 200h1v1h-1zM671 217h1v1h-1zM922 233h1v1h-1zM919 191h1v1h-1zM996 293h1v1h-1zM739 279h1v1h-1zM991 321h1v1h-1zM703 338h1v1h-1zM802 237h1v1h-1zM957 222h1v1h-1zM923 460h1v1h-1zM1017 312h1v1h-1zM664 227h1v1h-1zM699 275h1v1h-1zM667 221h1v1h-1zM925 246h1v1h-1zM988 215h1v1h-1zM1015 367h1v1h-1zM1012 318h1v1h-1zM996 294h1v1h-1zM825 259h1v1h-1zM1018 341h1v1h-1zM679 241h1v1h-1zM742 252h1v1h-1zM1006 192h1v1h-1zM1032 287h1v1h-1zM963 419h1v1h-1zM843 219h1v1h-1zM852 237h1v1h-1zM672 244h1v1h-1zM746 278h1v1h-1zM961 203h1v1h-1zM856 280h1v1h-1zM1015 203h1v1h-1zM784 219h1v1h-1zM1009 380h1v1h-1zM827 225h1v1h-1zM756 265h1v1h-1zM991 275h1v1h-1zM737 191h1v1h-1zM777 409h1v1h-1zM854 254h1v1h-1zM657 199h1v1h-1zM1012 386h1v1h-1zM795 341h1v1h-1zM1026 334h1v1h-1zM872 215h1v1h-1zM839 267h1v1h-1zM978 255h1v1h-1zM825 320h1v1h-1zM797 255h1v1h-1zM676 267h1v1h-1zM763 274h1v1h-1zM780 424h1v1h-1zM794 253h1v1h-1zM790 189h1v1h-1zM661 293h1v1h-1zM885 198h1v1h-1zM1007 207h1v1h-1zM1000 240h1v1h-1zM800 362h1v1h-1zM762 190h1v1h-1zM977 206h1v1h-1zM874 242h1v1h-1zM779 265h1v1h-1zM792 404h1v1h-1zM798 198h1v1h-1zM882 191h1v1h-1zM909 208h1v1h-1zM988 452h1v1h-1zM836 271h1v1h-1zM949 222h1v1h-1zM727 376h1v1h-1zM882 203h1v1h-1zM825 235h1v1h-1zM929 452h1v1h-1zM733 229h1v1h-1zM773 291h1v1h-1zM996 210h1v1h-1zM881 271h1v1h-1zM1008 298h1v1h-1zM899 277h1v1h-1zM761 329h1v1h-1zM1012 277h1v1h-1zM902 222h1v1h-1zM787 301h1v1h-1zM905 245h1v1h-1zM916 236h1v1h-1zM1034 379h1v1h-1zM931 250h1v1h-1zM899 246h1v1h-1zM989 204h1v1h-1zM675 212h1v1h-1zM685 281h1v1h-1zM910 226h1v1h-1zM676 205h1v1h-1zM776 408h1v1h-1zM748 388h1v1h-1zM796 321h1v1h-1zM766 202h1v1h-1zM664 235h1v1h-1zM1022 304h1v1h-1zM1012 245h1v1h-1zM660 272h1v1h-1zM988 362h1v1h-1zM726 267h1v1h-1zM753 397h1v1h-1zM986 232h1v1h-1zM765 238h1v1h-1zM893 212h1v1h-1zM794 331h1v1h-1zM682 292h1v1h-1zM980 265h1v1h-1zM984 295h1v1h-1zM1002 295h1v1h-1zM855 281h1v1h-1zM845 202h1v1h-1zM695 189h1v1h-1zM673 282h1v1h-1zM873 253h1v1h-1zM961 268h1v1h-1zM946 227h1v1h-1zM922 237h1v1h-1zM927 232h1v1h-1zM876 212h1v1h-1zM1016 409h1v1h-1zM736 271h1v1h-1zM968 461h1v1h-1zM680 303h1v1h-1zM775 242h1v1h-1zM1027 277h1v1h-1zM779 193h1v1h-1zM786 314h1v1h-1zM867 218h1v1h-1zM1008 259h1v1h-1zM711 365h1v1h-1zM1024 347h1v1h-1zM909 251h1v1h-1zM913 252h1v1h-1zM1000 314h1v1h-1zM1010 296h1v1h-1zM709 308h1v1h-1zM968 426h1v1h-1zM691 265h1v1h-1zM895 239h1v1h-1zM877 253h1v1h-1zM875 277h1v1h-1zM948 222h1v1h-1zM1008 360h1v1h-1zM744 196h1v1h-1zM870 228h1v1h-1zM948 253h1v1h-1zM677 232h1v1h-1zM990 271h1v1h-1zM871 271h1v1h-1zM656 202h1v1h-1zM999 205h1v1h-1zM1024 398h1v1h-1zM998 268h1v1h-1zM987 264h1v1h-1zM822 295h1v1h-1zM1024 424h1v1h-1zM1024 295h1v1h-1zM784 377h1v1h-1zM1025 341h1v1h-1zM807 347h1v1h-1zM740 198h1v1h-1zM657 267h1v1h-1zM693 266h1v1h-1zM771 332h1v1h-1zM753 328h1v1h-1zM672 204h1v1h-1zM754 227h1v1h-1zM764 303h1v1h-1zM738 208h1v1h-1zM908 275h1v1h-1zM986 230h1v1h-1zM1032 452h1v1h-1zM729 219h1v1h-1zM1034 426h1v1h-1zM952 459h1v1h-1zM729 330h1v1h-1zM961 255h1v1h-1zM1013 320h1v1h-1zM935 217h1v1h-1zM764 277h1v1h-1zM761 202h1v1h-1zM991 323h1v1h-1zM736 250h1v1h-1zM1024 398h1v1h-1zM685 250h1v1h-1zM961 229h1v1h-1zM1002 295h1v1h-1zM983 269h1v1h-1zM830 227h1v1h-1zM676 214h1v1h-1zM987 298h1v1h-1zM685 271h1v1h-1zM904 271h1v1h-1zM892 189h1v1h-1zM951 433h1v1h-1zM765 336h1v1h-1zM1008 248h1v1h-1zM689 335h1v1h-1zM946 218h1v1h-1zM757 236h1v1h-1zM813 230h1v1h-1zM748 312h1v1h-1zM796 263h1v1h-1zM707 333h1v1h-1zM1022 295h1v1h-1zM917 210h1v1h-1zM998 227h1v1h-1zM890 208h1v1h-1zM995 231h1v1h-1zM676 319h1v1h-1zM781 238h1v1h-1zM890 206h1v1h-1zM992 405h1v1h-1zM671 195h1v1h-1zM732 249h1v1h-1zM670 253h1v1h-1zM981 399h1v1h-1zM771 258h1v1h-1zM730 287h1v1h-1zM942 208h1v1h-1zM1012 372h1v1h-1zM937 206h1v1h-1zM800 247h1v1h-1zM788 209h1v1h-1zM761 420h1v1h-1zM688 263h1v1h-1zM776 270h1v1h-1zM997 423h1v1h-1zM898 198h1v1h-1zM920 242h1v1h-1zM728 294h1v1h-1zM883 264h1v1h-1zM736 317h1v1h-1zM674 219h1v1h-1zM951 432h1v1h-1zM766 352h1v1h-1zM972 244h1v1h-1zM961 439h1v1h-1zM683 195h1v1h-1zM797 289h1v1h-1zM769 329h1v1h-1zM1026 350h1v1h-1zM937 440h1v1h-1zM722 334h1v1h-1zM781 218h1v1h-1zM718 224h1v1h-1zM1027 306h1v1h-1zM982 233h1v1h-1zM995 373h1v1h-1zM990 430h1v1h-1zM669 288h1v1h-1zM676 328h1v1h-1zM664 206h1v1h-1zM675 231h1v1h-1zM690 190h1v1h-1zM674 328h1v1h-1zM781 218h1v1h-1zM731 337h1v1h-1zM736 201h1v1h-1zM745 362h1v1h-1zM832 312h1v1h-1zM674 195h1v1h-1zM1012 291h1v1h-1zM968 422h1v1h-1zM793 256h1v1h-1zM1009 366h1v1h-1zM730 336h1v1h-1zM963 444h1v1h-1zM795 385h1v1h-1zM978 258h1v1h-1zM709 360h1v1h-1zM786 212h1v1h-1zM761 383h1v1h-1zM928 454h1v1h-1zM761 355h1v1h-1zM721 269h1v1h-1zM944 193h1v1h-1zM726 311h1v1h-1zM911 272h1v1h-1zM767 278h1v1h-1zM693 317h1v1h-1zM790 209h1v1h-1zM718 285h1v1h-1zM786 247h1v1h-1zM845 248h1v1h-1zM732 237h1v1h-1zM1015 325h1v1h-1zM793 309h1v1h-1zM1011 313h1v1h-1zM657 263h1v1h-1zM828 253h1v1h-1zM713 333h1v1h-1zM787 219h1v1h-1zM739 343h1v1h-1zM907 254h1v1h-1zM1000 292h1v1h-1zM958 237h1v1h-1zM817 223h1v1h-1zM980 267h1v1h-1zM749 360h1v1h-1zM663 237h1v1h-1zM1013 321h1v1h-1zM897 276h1v1h-1zM861 225h1v1h-1zM734 340h1v1h-1zM793 298h1v1h-1zM747 287h1v1h-1zM734 200h1v1h-1zM830 249h1v1h-1zM909 239h1v1h-1zM684 321h1v1h-1zM726 300h1v1h-1zM729 281h1v1h-1zM786 222h1v1h-1zM679 203h1v1h-1zM1013 392h1v1h-1zM778 222h1v1h-1zM897 226h1v1h-1zM773 220h1v1h-1zM782 244h1v1h-1zM1016 344h1v1h-1zM1031 215h1v1h-1zM854 243h1v1h-1zM686 276h1v1h-1zM990 250h1v1h-1zM962 192h1v1h-1zM803 210h1v1h-1zM1033 374h1v1h-1zM704 327h1v1h-1zM1033 391h1v1h-1zM753 399h1v1h-1zM666 282h1v1h-1zM699 266h1v1h-1zM1010 447h1v1h-1zM797 349h1v1h-1zM766 370h1v1h-1zM729 377h1v1h-1zM793 340h1v1h-1zM1007 379h1v1h-1zM991 330h1v1h-1zM741 254h1v1h-1zM993 216h1v1h-1zM874 258h1v1h-1zM782 422h1v1h-1zM769 280h1v1h-1zM848 234h1v1h-1zM1026 304h1v1h-1zM784 261h1v1h-1zM690 301h1v1h-1zM731 211h1v1h-1zM998 399h1v1h-1zM815 317h1v1h-1zM740 333h1v1h-1zM934 454h1v1h-1zM769 205h1v1h-1zM1017 420h1v1h-1zM1030 232h1v1h-1zM1030 245h1v1h-1zM974 464h1v1h-1zM732 390h1v1h-1zM728 342h1v1h-1zM1011 194h1v1h-1zM978 220h1v1h-1zM978 234h1v1h-1zM1032 354h1v1h-1zM990 406h1v1h-1zM694 252h1v1h-1zM754 402h1v1h-1zM744 406h1v1h-1zM984 376h1v1h-1zM942 274h1v1h-1zM904 193h1v1h-1zM780 262h1v1h-1zM895 250h1v1h-1zM684 204h1v1h-1zM1033 403h1v1h-1zM704 344h1v1h-1zM833 234h1v1h-1zM760 229h1v1h-1zM717 266h1v1h-1zM982 268h1v1h-1zM1029 237h1v1h-1zM766 323h1v1h-1zM854 217h1v1h-1zM727 314h1v1h-1zM662 194h1v1h-1zM705 246h1v1h-1zM757 319h1v1h-1zM864 222h1v1h-1zM708 352h1v1h-1zM811 362h1v1h-1zM696 191h1v1h-1zM795 416h1v1h-1zM994 367h1v1h-1zM677 241h1v1h-1zM978 254h1v1h-1zM769 291h1v1h-1zM981 446h1v1h-1zM909 220h1v1h-1zM797 368h1v1h-1zM973 244h1v1h-1zM746 382h1v1h-1zM1028 320h1v1h-1zM769 433h1v1h-1zM826 230h1v1h-1zM901 222h1v1h-1zM910 259h1v1h-1zM721 330h1v1h-1zM896 246h1v1h-1zM1004 415h1v1h-1zM929 192h1v1h-1zM741 263h1v1h-1zM1003 371h1v1h-1zM1008 191h1v1h-1zM764 196h1v1h-1zM935 208h1v1h-1zM1032 364h1v1h-1zM771 419h1v1h-1zM1003 435h1v1h-1zM980 259h1v1h-1zM978 193h1v1h-1zM861 197h1v1h-1zM957 218h1v1h-1zM769 313h1v1h-1zM676 262h1v1h-1zM665 284h1v1h-1zM728 271h1v1h-1zM695 244h1v1h-1zM780 220h1v1h-1zM1008 258h1v1h-1zM960 276h1v1h-1zM727 358h1v1h-1zM1020 282h1v1h-1zM982 409h1v1h-1zM903 198h1v1h-1zM793 252h1v1h-1zM995 243h1v1h-1zM1020 300h1v1h-1zM689 234h1v1h-1zM705 275h1v1h-1zM795 198h1v1h-1zM996 221h1v1h-1zM902 194h1v1h-1zM764 289h1v1h-1zM708 226h1v1h-1zM774 281h1v1h-1zM788 281h1v1h-1zM967 442h1v1h-1zM994 376h1v1h-1zM766 345h1v1h-1zM1001 452h1v1h-1zM932 202h1v1h-1zM936 277h1v1h-1zM1033 253h1v1h-1zM1024 399h1v1h-1zM988 374h1v1h-1zM991 209h1v1h-1zM744 393h1v1h-1zM858 269h1v1h-1zM762 223h1v1h-1zM997 296h1v1h-1zM848 214h1v1h-1zM762 247h1v1h-1zM1011 325h1v1h-1zM876 244h1v1h-1zM881 252h1v1h-1zM1022 328h1v1h-1zM826 194h1v1h-1zM983 460h1v1h-1zM945 191h1v1h-1zM671 254h1v1h-1zM711 366h1v1h-1zM690 212h1v1h-1zM728 361h1v1h-1zM693 338h1v1h-1zM916 210h1v1h-1zM668 294h1v1h-1zM751 278h1v1h-1zM1005 301h1v1h-1zM774 231h1v1h-1zM985 347h1v1h-1zM827 246h1v1h-1zM763 303h1v1h-1zM730 299h1v1h-1zM798 414h1v1h-1zM689 290h1v1h-1zM748 261h1v1h-1zM1006 426h1v1h-1zM715 257h1v1h-1zM985 221h1v1h-1zM809 325h1v1h-1zM949 193h1v1h-1zM689 264h1v1h-1zM956 253h1v1h-1zM707 214h1v1h-1zM686 251h1v1h-1zM656 222h1v1h-1zM1026 299h1v1h-1zM782 420h1v1h-1zM744 328h1v1h-1zM730 318h1v1h-1zM930 226h1v1h-1zM736 364h1v1h-1zM878 202h1v1h-1zM690 247h1v1h-1zM765 197h1v1h-1zM977 397h1v1h-1zM703 331h1v1h-1zM919 247h1v1h-1zM846 275h1v1h-1zM825 205h1v1h-1zM780 230h1v1h-1zM837 266h1v1h-1zM989 307h1v1h-1zM761 309h1v1h-1zM1006 310h1v1h-1zM995 460h1v1h-1zM844 275h1v1h-1zM775 362h1v1h-1zM789 222h1v1h-1zM785 233h1v1h-1zM753 224h1v1h-1zM751 236h1v1h-1zM667 247h1v1h-1zM1006 193h1v1h-1zM978 237h1v1h-1zM963 245h1v1h-1zM762 213h1v1h-1zM965 459h1v1h-1zM679 310h1v1h-1zM719 310h1v1h-1zM987 189h1v1h-1zM997 300h1v1h-1zM899 213h1v1h-1zM740 288h1v1h-1zM1030 193h1v1h-1zM770 204h1v1h-1zM690 259h1v1h-1zM767 356h1v1h-1zM1003 282h1v1h-1zM688 254h1v1h-1zM704 334h1v1h-1zM983 199h1v1h-1zM762 295h1v1h-1zM776 225h1v1h-1zM695 191h1v1h-1zM963 244h1v1h-1zM1021 401h1v1h-1zM776 412h1v1h-1zM975 254h1v1h-1zM875 200h1v1h-1zM959 258h1v1h-1zM773 231h1v1h-1zM679 292h1v1h-1zM917 206h1v1h-1zM742 243h1v1h-1zM852 257h1v1h-1zM917 241h1v1h-1zM985 358h1v1h-1zM1025 436h1v1h-1zM1034 219h1v1h-1zM792 264h1v1h-1zM687 302h1v1h-1zM796 336h1v1h-1zM783 417h1v1h-1zM985 285h1v1h-1z" fill="#9a9a9a"/>
<path d="M670 314h1v1h-1zM981 272h1v1h-1zM700 278h1v1h-1zM679 206h1v1h-1zM1027 223h1v1h-1zM967 271h1v1h-1zM719 222h1v1h-1zM947 226h1v1h-1zM761 309h1v1h-1zM713 240h1v1h-1zM896 207h1v1h-1zM735 236h1v1h-1zM675 189h1v1h-1zM694 294h1v1h-1zM987 367h1v1h-1zM751 289h1v1h-1zM688 218h1v1h-1zM790 197h1v1h-1zM794 252h1v1h-1zM720 225h1v1h-1zM998 422h1v1h-1zM986 428h1v1h-1zM751 273h1v1h-1zM878 264h1v1h-1zM1013 432h1v1h-1zM953 449h1v1h-1zM784 245h1v1h-1zM695 266h1v1h-1zM951 267h1v1h-1zM1007 266h1v1h-1zM855 258h1v1h-1zM717 203h1v1h-1zM765 334h1v1h-1zM787 194h1v1h-1zM819 332h1v1h-1zM787 204h1v1h-1zM752 236h1v1h-1zM762 259h1v1h-1zM830 234h1v1h-1zM1024 347h1v1h-1zM1021 278h1v1h-1zM989 301h1v1h-1zM743 198h1v1h-1zM751 210h1v1h-1zM1025 332h1v1h-1zM899 211h1v1h-1zM752 404h1v1h-1zM871 192h1v1h-1zM826 266h1v1h-1zM996 329h1v1h-1zM826 276h1v1h-1zM926 450h1v1h-1zM792 313h1v1h-1zM1033 319h1v1h-1zM728 215h1v1h-1zM690 258h1v1h-1zM784 206h1v1h-1zM750 304h1v1h-1zM750 220h1v1h-1zM900 277h1v1h-1zM836 257h1v1h-1zM1020 393h1v1h-1zM1006 254h1v1h-1zM774 426h1v1h-1zM843 243h1v1h-1zM814 381h1v1h-1zM805 250h1v1h-1zM675 206h1v1h-1zM1034 459h1v1h-1zM720 189h1v1h-1zM963 411h1v1h-1zM775 268h1v1h-1zM1013 196h1v1h-1zM780 281h1v1h-1zM952 211h1v1h-1zM941 260h1v1h-1zM749 260h1v1h-1zM991 356h1v1h-1zM671 274h1v1h-1zM890 252h1v1h-1zM709 248h1v1h-1zM780 385h1v1h-1zM863 207h1v1h-1zM1033 294h1v1h-1zM931 248h1v1h-1zM796 335h1v1h-1zM1022 246h1v1h-1zM970 242h1v1h-1zM696 226h1v1h-1zM954 458h1v1h-1zM788 408h1v1h-1zM776 199h1v1h-1zM699 342h1v1h-1zM1031 356h1v1h-1zM819 337h1v1h-1zM742 378h1v1h-1zM748 232h1v1h-1zM788 376h1v1h-1zM1011 401h1v1h-1zM1012 230h1v1h-1zM722 278h1v1h-1zM741 219h1v1h-1zM756 375h1v1h-1zM989 193h1v1h-1zM710 196h1v1h-1zM1008 289h1v1h-1zM1002 462h1v1h-1zM733 221h1v1h-1zM733 281h1v1h-1zM663 263h1v1h-1zM720 189h1v1h-1zM808 303h1v1h-1zM992 196h1v1h-1zM991 258h1v1h-1zM714 234h1v1h-1zM779 340h1v1h-1zM897 219h1v1h-1zM1012 339h1v1h-1zM804 410h1v1h-1zM1029 292h1v1h-1zM789 265h1v1h-1zM752 312h1v1h-1zM762 260h1v1h-1zM895 193h1v1h-1zM1016 379h1v1h-1zM694 230h1v1h-1zM954 432h1v1h-1zM990 349h1v1h-1zM678 324h1v1h-1zM948 250h1v1h-1zM816 349h1v1h-1zM781 280h1v1h-1zM769 190h1v1h-1zM1002 379h1v1h-1zM753 276h1v1h-1zM736 233h1v1h-1zM704 194h1v1h-1zM934 243h1v1h-1zM1021 396h1v1h-1zM965 212h1v1h-1zM840 206h1v1h-1zM962 271h1v1h-1zM961 412h1v1h-1zM793 352h1v1h-1zM852 232h1v1h-1zM1033 297h1v1h-1zM786 339h1v1h-1zM752 199h1v1h-1zM724 213h1v1h-1zM806 223h1v1h-1zM740 200h1v1h-1zM1012 385h1v1h-1zM719 258h1v1h-1zM984 446h1v1h-1zM764 263h1v1h-1zM1034 457h1v1h-1zM785 229h1v1h-1zM925 246h1v1h-1zM843 268h1v1h-1zM740 241h1v1h-1zM985 396h1v1h-1zM702 332h1v1h-1zM1011 301h1v1h-1zM964 434h1v1h-1zM857 209h1v1h-1zM847 195h1v1h-1zM771 376h1v1h-1zM767 412h1v1h-1zM1019 403h1v1h-1zM930 273h1v1h-1zM1019 248h1v1h-1zM1001 192h1v1h-1zM791 361h1v1h-1zM693 297h1v1h-1zM897 201h1v1h-1zM943 219h1v1h-1zM720 266h1v1h-1zM998 357h1v1h-1zM766 351h1v1h-1zM789 260h1v1h-1zM763 257h1v1h-1zM1016 335h1v1h-1zM702 337h1v1h-1zM773 302h1v1h-1zM777 381h1v1h-1zM680 279h1v1h-1zM706 269h1v1h-1zM789 371h1v1h-1zM717 246h1v1h-1zM950 272h1v1h-1zM750 206h1v1h-1zM910 257h1v1h-1zM709 352h1v1h-1zM971 222h1v1h-1zM792 248h1v1h-1zM825 221h1v1h-1zM1027 352h1v1h-1zM751 260h1v1h-1zM974 274h1v1h-1zM845 234h1v1h-1zM689 200h1v1h-1zM980 417h1v1h-1zM787 245h1v1h-1zM796 357h1v1h-1zM741 355h1v1h-1zM1031 398h1v1h-1zM677 257h1v1h-1zM968 224h1v1h-1zM911 262h1v1h-1zM726 349h1v1h-1zM684 284h1v1h-1zM994 359h1v1h-1zM1029 202h1v1h-1zM910 268h1v1h-1zM788 228h1v1h-1zM986 320h1v1h-1zM871 276h1v1h-1zM681 276h1v1h-1zM1005 358h1v1h-1zM791 413h1v1h-1zM996 269h1v1h-1zM664 236h1v1h-1zM922 252h1v1h-1zM1021 363h1v1h-1zM962 442h1v1h-1zM677 309h1v1h-1zM753 323h1v1h-1zM1026 320h1v1h-1zM690 197h1v1h-1zM794 232h1v1h-1zM935 456h1v1h-1zM740 262h1v1h-1zM738 354h1v1h-1zM983 441h1v1h-1zM1033 275h1v1h-1zM743 313h1v1h-1zM707 313h1v1h-1zM845 221h1v1h-1zM1024 301h1v1h-1zM811 230h1v1h-1zM953 452h1v1h-1zM984 201h1v1h-1zM971 426h1v1h-1zM714 261h1v1h-1zM827 214h1v1h-1zM1033 390h1v1h-1zM796 287h1v1h-1zM760 282h1v1h-1zM981 247h1v1h-1zM997 408h1v1h-1zM813 326h1v1h-1zM986 231h1v1h-1zM760 265h1v1h-1zM980 263h1v1h-1zM1004 350h1v1h-1zM775 343h1v1h-1zM870 282h1v1h-1zM911 274h1v1h-1zM734 218h1v1h-1zM953 464h1v1h-1zM915 233h1v1h-1zM776 351h1v1h-1zM1027 302h1v1h-1zM855 273h1v1h-1zM689 229h1v1h-1zM994 434h1v1h-1zM904 203h1v1h-1zM706 356h1v1h-1zM838 232h1v1h-1zM795 246h1v1h-1zM733 225h1v1h-1zM742 406h1v1h-1zM925 207h1v1h-1zM713 288h1v1h-1zM731 252h1v1h-1zM783 250h1v1h-1zM717 341h1v1h-1zM999 333h1v1h-1zM669 283h1v1h-1zM1017 447h1v1h-1zM766 346h1v1h-1zM917 269h1v1h-1zM720 279h1v1h-1zM1020 243h1v1h-1zM1013 246h1v1h-1zM805 300h1v1h-1zM962 221h1v1h-1zM706 287h1v1h-1zM1025 421h1v1h-1zM708 268h1v1h-1zM824 349h1v1h-1zM969 221h1v1h-1zM683 327h1v1h-1zM785 244h1v1h-1zM771 201h1v1h-1zM694 219h1v1h-1zM735 262h1v1h-1zM737 358h1v1h-1zM858 209h1v1h-1zM801 219h1v1h-1zM883 207h1v1h-1zM1030 255h1v1h-1zM937 200h1v1h-1zM1025 421h1v1h-1zM717 337h1v1h-1zM862 273h1v1h-1zM734 313h1v1h-1zM1026 347h1v1h-1zM978 435h1v1h-1zM947 191h1v1h-1zM751 276h1v1h-1zM778 216h1v1h-1zM774 370h1v1h-1zM689 250h1v1h-1zM999 192h1v1h-1zM919 277h1v1h-1zM681 193h1v1h-1zM1023 388h1v1h-1zM947 240h1v1h-1zM785 430h1v1h-1zM801 378h1v1h-1zM793 398h1v1h-1zM954 261h1v1h-1zM854 221h1v1h-1zM957 271h1v1h-1zM945 253h1v1h-1zM739 300h1v1h-1zM925 216h1v1h-1zM837 239h1v1h-1zM866 209h1v1h-1zM854 258h1v1h-1zM983 250h1v1h-1zM838 241h1v1h-1zM669 316h1v1h-1zM777 307h1v1h-1zM909 195h1v1h-1zM925 228h1v1h-1zM810 203h1v1h-1zM662 272h1v1h-1zM1022 441h1v1h-1zM850 222h1v1h-1zM1020 244h1v1h-1zM996 354h1v1h-1zM918 263h1v1h-1zM1019 416h1v1h-1zM1020 450h1v1h-1zM946 276h1v1h-1zM879 246h1v1h-1zM657 239h1v1h-1zM1030 194h1v1h-1zM753 204h1v1h-1zM1008 351h1v1h-1zM958 421h1v1h-1zM960 418h1v1h-1zM870 229h1v1h-1zM747 263h1v1h-1zM773 381h1v1h-1zM988 322h1v1h-1zM701 335h1v1h-1zM751 382h1v1h-1zM1009 368h1v1h-1zM1027 452h1v1h-1zM805 216h1v1h-1zM765 411h1v1h-1zM696 209h1v1h-1zM784 260h1v1h-1zM785 243h1v1h-1zM977 426h1v1h-1zM794 297h1v1h-1zM992 408h1v1h-1zM985 251h1v1h-1zM750 218h1v1h-1zM742 209h1v1h-1zM989 382h1v1h-1zM1032 314h1v1h-1zM925 458h1v1h-1zM1006 249h1v1h-1zM973 457h1v1h-1zM1013 317h1v1h-1zM783 411h1v1h-1zM731 235h1v1h-1zM890 276h1v1h-1zM738 213h1v1h-1zM775 335h1v1h-1zM1014 325h1v1h-1zM880 230h1v1h-1zM1022 305h1v1h-1zM1014 348h1v1h-1zM959 196h1v1h-1zM664 245h1v1h-1zM961 231h1v1h-1zM981 300h1v1h-1zM1026 200h1v1h-1zM1027 314h1v1h-1zM1033 393h1v1h-1zM724 233h1v1h-1zM913 198h1v1h-1zM709 239h1v1h-1zM1008 367h1v1h-1zM694 269h1v1h-1zM737 378h1v1h-1zM798 261h1v1h-1zM1009 242h1v1h-1zM964 223h1v1h-1zM845 286h1v1h-1zM774 197h1v1h-1zM1015 387h1v1h-1zM982 383h1v1h-1zM733 336h1v1h-1zM968 192h1v1h-1zM709 234h1v1h-1zM745 408h1v1h-1zM968 259h1v1h-1zM724 209h1v1h-1zM1010 259h1v1h-1zM998 190h1v1h-1zM986 396h1v1h-1zM839 286h1v1h-1zM726 343h1v1h-1zM736 320h1v1h-1zM933 249h1v1h-1zM918 268h1v1h-1zM742 286h1v1h-1zM977 440h1v1h-1zM815 280h1v1h-1zM993 312h1v1h-1zM752 194h1v1h-1zM887 274h1v1h-1zM980 452h1v1h-1zM849 224h1v1h-1zM773 309h1v1h-1zM748 359h1v1h-1zM676 299h1v1h-1zM736 189h1v1h-1zM690 295h1v1h-1zM988 292h1v1h-1zM1018 296h1v1h-1zM792 305h1v1h-1zM707 366h1v1h-1zM1024 400h1v1h-1zM784 196h1v1h-1zM938 443h1v1h-1zM789 424h1v1h-1zM911 465h1v1h-1zM772 399h1v1h-1zM985 203h1v1h-1zM687 262h1v1h-1zM841 261h1v1h-1zM905 195h1v1h-1zM779 362h1v1h-1zM764 418h1v1h-1zM795 241h1v1h-1zM697 201h1v1h-1zM987 247h1v1h-1zM945 269h1v1h-1zM746 351h1v1h-1zM663 297h1v1h-1zM835 193h1v1h-1zM740 212h1v1h-1zM729 339h1v1h-1zM810 362h1v1h-1zM726 315h1v1h-1zM877 275h1v1h-1zM843 255h1v1h-1zM983 239h1v1h-1zM916 201h1v1h-1zM1019 302h1v1h-1zM836 279h1v1h-1zM909 238h1v1h-1zM871 250h1v1h-1zM780 435h1v1h-1zM982 297h1v1h-1zM1019 255h1v1h-1zM714 345h1v1h-1zM796 218h1v1h-1zM994 226h1v1h-1zM732 286h1v1h-1zM691 205h1v1h-1zM801 264h1v1h-1zM969 448h1v1h-1zM1014 193h1v1h-1zM959 258h1v1h-1zM749 338h1v1h-1zM787 421h1v1h-1zM758 331h1v1h-1zM680 284h1v1h-1zM963 255h1v1h-1zM984 428h1v1h-1zM751 346h1v1h-1zM981 446h1v1h-1zM946 277h1v1h-1zM965 235h1v1h-1zM987 307h1v1h-1zM667 287h1v1h-1zM921 225h1v1h-1zM737 283h1v1h-1zM982 263h1v1h-1zM1005 380h1v1h-1zM851 272h1v1h-1zM739 297h1v1h-1zM794 220h1v1h-1zM775 332h1v1h-1zM1027 352h1v1h-1zM676 235h1v1h-1zM952 446h1v1h-1zM903 254h1v1h-1zM893 269h1v1h-1zM744 242h1v1h-1zM769 398h1v1h-1zM803 412h1v1h-1zM932 246h1v1h-1zM785 216h1v1h-1zM711 216h1v1h-1zM1018 192h1v1h-1zM777 246h1v1h-1zM795 223h1v1h-1zM750 356h1v1h-1zM991 365h1v1h-1zM1006 446h1v1h-1zM728 370h1v1h-1zM671 268h1v1h-1zM712 342h1v1h-1zM982 225h1v1h-1zM822 361h1v1h-1zM1033 403h1v1h-1zM1014 189h1v1h-1zM974 401h1v1h-1zM662 284h1v1h-1zM873 226h1v1h-1zM793 302h1v1h-1zM795 258h1v1h-1zM987 461h1v1h-1zM832 282h1v1h-1zM994 431h1v1h-1zM983 437h1v1h-1zM873 283h1v1h-1zM868 238h1v1h-1zM715 264h1v1h-1zM1000 236h1v1h-1zM705 250h1v1h-1zM805 409h1v1h-1zM855 248h1v1h-1zM864 283h1v1h-1zM766 270h1v1h-1zM903 221h1v1h-1zM1028 407h1v1h-1zM762 268h1v1h-1zM788 243h1v1h-1zM1008 260h1v1h-1zM987 221h1v1h-1zM662 281h1v1h-1zM978 388h1v1h-1zM905 281h1v1h-1zM718 305h1v1h-1zM801 348h1v1h-1zM959 214h1v1h-1zM987 282h1v1h-1zM959 277h1v1h-1zM675 192h1v1h-1zM997 405h1v1h-1zM901 202h1v1h-1zM777 264h1v1h-1zM786 225h1v1h-1zM739 253h1v1h-1zM759 205h1v1h-1zM831 271h1v1h-1zM841 239h1v1h-1zM788 362h1v1h-1zM1010 219h1v1h-1zM788 230h1v1h-1zM1007 343h1v1h-1zM926 227h1v1h-1zM696 253h1v1h-1zM1029 283h1v1h-1zM836 236h1v1h-1zM821 378h1v1h-1zM990 334h1v1h-1zM921 230h1v1h-1zM857 194h1v1h-1zM998 425h1v1h-1zM741 283h1v1h-1zM1030 206h1v1h-1zM685 217h1v1h-1zM1027 418h1v1h-1zM698 253h1v1h-1zM733 189h1v1h-1zM748 283h1v1h-1zM792 282h1v1h-1zM868 223h1v1h-1zM721 289h1v1h-1zM725 228h1v1h-1zM720 259h1v1h-1zM904 214h1v1h-1zM857 278h1v1h-1zM839 209h1v1h-1zM957 190h1v1h-1zM734 295h1v1h-1zM1003 295h1v1h-1zM994 253h1v1h-1zM957 210h1v1h-1zM713 332h1v1h-1zM833 220h1v1h-1zM718 258h1v1h-1zM682 301h1v1h-1zM992 319h1v1h-1zM742 202h1v1h-1zM790 396h1v1h-1zM918 223h1v1h-1zM755 265h1v1h-1zM740 378h1v1h-1zM1030 374h1v1h-1zM997 461h1v1h-1zM923 191h1v1h-1zM724 285h1v1h-1zM865 195h1v1h-1zM1000 378h1v1h-1zM752 308h1v1h-1zM695 293h1v1h-1zM909 240h1v1h-1zM1032 206h1v1h-1zM837 229h1v1h-1zM711 264h1v1h-1zM789 398h1v1h-1zM762 383h1v1h-1zM688 221h1v1h-1zM983 297h1v1h-1zM850 262h1v1h-1zM1013 432h1v1h-1zM863 268h1v1h-1zM767 356h1v1h-1zM866 283h1v1h-1zM743 372h1v1h-1zM990 357h1v1h-1zM717 352h1v1h-1zM836 251h1v1h-1zM739 392h1v1h-1zM767 387h1v1h-1zM987 198h1v1h-1zM789 217h1v1h-1zM734 207h1v1h-1zM852 201h1v1h-1zM849 239h1v1h-1zM998 317h1v1h-1zM1000 365h1v1h-1zM963 207h1v1h-1zM687 325h1v1h-1zM720 282h1v1h-1zM730 367h1v1h-1zM982 444h1v1h-1zM958 440h1v1h-1zM697 190h1v1h-1zM776 341h1v1h-1zM836 193h1v1h-1zM1018 278h1v1h-1zM679 327h1v1h-1zM1004 225h1v1h-1zM1032 277h1v1h-1zM750 334h1v1h-1zM714 224h1v1h-1zM690 224h1v1h-1zM959 443h1v1h-1zM769 426h1v1h-1zM941 202h1v1h-1zM761 338h1v1h-1zM985 397h1v1h-1zM946 239h1v1h-1zM723 327h1v1h-1zM941 443h1v1h-1zM675 271h1v1h-1zM686 243h1v1h-1zM1004 417h1v1h-1zM1023 235h1v1h-1zM670 324h1v1h-1zM858 210h1v1h-1zM1011 288h1v1h-1zM711 252h1v1h-1zM674 241h1v1h-1zM884 263h1v1h-1zM662 244h1v1h-1zM789 403h1v1h-1zM1020 384h1v1h-1zM684 270h1v1h-1zM774 429h1v1h-1zM789 340h1v1h-1zM1033 229h1v1h-1zM738 224h1v1h-1zM734 262h1v1h-1zM981 194h1v1h-1zM973 267h1v1h-1zM783 377h1v1h-1zM720 317h1v1h-1zM1034 368h1v1h-1zM1017 343h1v1h-1zM988 398h1v1h-1zM769 385h1v1h-1zM794 288h1v1h-1zM945 442h1v1h-1zM845 252h1v1h-1zM726 190h1v1h-1zM812 355h1v1h-1zM976 279h1v1h-1zM670 219h1v1h-1zM909 232h1v1h-1zM917 235h1v1h-1zM677 214h1v1h-1zM809 385h1v1h-1zM790 417h1v1h-1zM739 255h1v1h-1zM770 330h1v1h-1zM938 265h1v1h-1zM1028 442h1v1h-1zM1002 205h1v1h-1zM718 373h1v1h-1zM666 228h1v1h-1zM856 262h1v1h-1zM677 232h1v1h-1zM719 323h1v1h-1zM934 443h1v1h-1zM944 245h1v1h-1zM908 216h1v1h-1zM974 405h1v1h-1zM1006 365h1v1h-1zM997 202h1v1h-1zM919 213h1v1h-1zM709 326h1v1h-1zM943 246h1v1h-1zM871 201h1v1h-1zM853 231h1v1h-1zM914 213h1v1h-1zM707 361h1v1h-1zM945 269h1v1h-1zM753 305h1v1h-1zM924 271h1v1h-1zM846 257h1v1h-1zM872 256h1v1h-1zM776 206h1v1h-1zM780 390h1v1h-1zM925 453h1v1h-1zM656 305h1v1h-1zM696 253h1v1h-1zM892 263h1v1h-1zM915 221h1v1h-1zM787 349h1v1h-1zM782 324h1v1h-1zM723 346h1v1h-1zM664 305h1v1h-1zM691 274h1v1h-1zM765 250h1v1h-1zM964 419h1v1h-1zM939 442h1v1h-1zM879 258h1v1h-1zM1029 315h1v1h-1zM744 399h1v1h-1zM716 196h1v1h-1zM914 264h1v1h-1zM995 376h1v1h-1zM819 255h1v1h-1zM752 395h1v1h-1zM854 259h1v1h-1zM743 372h1v1h-1zM745 382h1v1h-1zM1032 288h1v1h-1zM748 331h1v1h-1zM745 401h1v1h-1zM837 250h1v1h-1zM983 295h1v1h-1zM743 204h1v1h-1zM739 365h1v1h-1zM796 352h1v1h-1zM756 236h1v1h-1zM714 255h1v1h-1zM971 455h1v1h-1zM864 250h1v1h-1zM986 310h1v1h-1zM872 274h1v1h-1zM930 454h1v1h-1zM861 201h1v1h-1zM1014 296h1v1h-1zM789 303h1v1h-1zM752 276h1v1h-1zM689 253h1v1h-1zM1003 250h1v1h-1zM825 237h1v1h-1zM913 271h1v1h-1zM725 265h1v1h-1zM872 280h1v1h-1zM988 295h1v1h-1zM826 346h1v1h-1zM657 301h1v1h-1zM789 256h1v1h-1zM865 238h1v1h-1zM768 296h1v1h-1zM689 271h1v1h-1zM701 261h1v1h-1zM776 213h1v1h-1zM738 367h1v1h-1zM925 245h1v1h-1zM1006 393h1v1h-1zM993 393h1v1h-1zM857 265h1v1h-1zM987 381h1v1h-1zM773 357h1v1h-1zM959 463h1v1h-1zM848 282h1v1h-1zM958 271h1v1h-1zM917 236h1v1h-1zM791 380h1v1h-1zM879 192h1v1h-1zM784 298h1v1h-1zM902 233h1v1h-1zM737 325h1v1h-1zM774 219h1v1h-1zM721 363h1v1h-1zM834 274h1v1h-1zM1000 450h1v1h-1zM741 393h1v1h-1zM831 279h1v1h-1zM770 268h1v1h-1zM1009 432h1v1h-1zM689 333h1v1h-1zM954 253h1v1h-1zM1013 269h1v1h-1zM908 197h1v1h-1zM796 372h1v1h-1zM726 204h1v1h-1zM782 357h1v1h-1zM735 349h1v1h-1zM778 362h1v1h-1zM657 217h1v1h-1zM679 298h1v1h-1zM982 196h1v1h-1zM1002 426h1v1h-1zM1016 216h1v1h-1zM899 229h1v1h-1zM964 263h1v1h-1zM911 235h1v1h-1zM1033 189h1v1h-1zM712 238h1v1h-1zM790 335h1v1h-1zM895 213h1v1h-1zM723 269h1v1h-1zM709 328h1v1h-1zM974 408h1v1h-1zM664 309h1v1h-1zM804 356h1v1h-1zM780 383h1v1h-1zM678 258h1v1h-1zM1005 343h1v1h-1zM951 278h1v1h-1zM956 192h1v1h-1zM783 370h1v1h-1zM930 271h1v1h-1zM844 190h1v1h-1zM740 381h1v1h-1zM857 235h1v1h-1zM688 221h1v1h-1zM730 207h1v1h-1zM733 191h1v1h-1zM780 232h1v1h-1zM925 451h1v1h-1zM740 341h1v1h-1zM993 291h1v1h-1zM722 259h1v1h-1zM993 310h1v1h-1zM732 327h1v1h-1zM753 413h1v1h-1zM892 276h1v1h-1zM662 262h1v1h-1zM748 412h1v1h-1zM758 228h1v1h-1zM1023 290h1v1h-1zM821 308h1v1h-1zM719 238h1v1h-1zM712 193h1v1h-1zM906 275h1v1h-1zM858 249h1v1h-1zM925 458h1v1h-1zM746 230h1v1h-1zM741 310h1v1h-1zM907 258h1v1h-1zM888 277h1v1h-1zM715 230h1v1h-1zM795 273h1v1h-1zM1007 394h1v1h-1zM1023 268h1v1h-1zM925 190h1v1h-1zM800 395h1v1h-1zM1003 233h1v1h-1zM693 243h1v1h-1zM711 298h1v1h-1zM1018 373h1v1h-1zM1002 324h1v1h-1zM952 466h1v1h-1zM911 249h1v1h-1zM1028 408h1v1h-1zM968 207h1v1h-1zM679 286h1v1h-1zM714 207h1v1h-1zM956 240h1v1h-1zM1027 418h1v1h-1zM726 380h1v1h-1zM978 237h1v1h-1zM1031 196h1v1h-1zM767 310h1v1h-1zM996 447h1v1h-1zM707 328h1v1h-1zM770 204h1v1h-1zM661 199h1v1h-1zM1024 434h1v1h-1zM775 387h1v1h-1zM779 199h1v1h-1zM775 248h1v1h-1zM1002 280h1v1h-1zM991 395h1v1h-1zM974 460h1v1h-1zM874 266h1v1h-1zM1012 328h1v1h-1zM1007 371h1v1h-1zM890 218h1v1h-1zM698 332h1v1h-1zM667 257h1v1h-1zM844 270h1v1h-1zM713 340h1v1h-1zM762 386h1v1h-1zM1024 389h1v1h-1zM708 219h1v1h-1zM1011 417h1v1h-1zM738 243h1v1h-1zM769 341h1v1h-1zM1028 378h1v1h-1zM840 204h1v1h-1zM825 316h1v1h-1zM788 419h1v1h-1zM856 273h1v1h-1zM741 262h1v1h-1zM1026 402h1v1h-1zM1009 355h1v1h-1zM774 216h1v1h-1zM733 227h1v1h-1zM1023 297h1v1h-1zM941 210h1v1h-1zM985 283h1v1h-1zM831 248h1v1h-1zM975 271h1v1h-1zM864 282h1v1h-1zM839 286h1v1h-1zM845 206h1v1h-1zM733 322h1v1h-1zM723 303h1v1h-1zM1011 442h1v1h-1zM767 204h1v1h-1zM926 217h1v1h-1zM713 255h1v1h-1zM778 357h1v1h-1zM963 414h1v1h-1zM835 276h1v1h-1zM670 312h1v1h-1zM986 330h1v1h-1zM864 194h1v1h-1zM953 214h1v1h-1zM941 235h1v1h-1zM1023 371h1v1h-1zM887 260h1v1h-1zM905 221h1v1h-1zM913 469h1v1h-1zM939 230h1v1h-1zM999 192h1v1h-1zM673 307h1v1h-1zM828 229h1v1h-1zM961 248h1v1h-1zM735 358h1v1h-1zM679 331h1v1h-1zM731 243h1v1h-1zM769 277h1v1h-1zM879 200h1v1h-1zM1025 355h1v1h-1zM986 326h1v1h-1zM900 244h1v1h-1zM846 199h1v1h-1zM771 389h1v1h-1zM675 329h1v1h-1zM731 237h1v1h-1zM715 345h1v1h-1zM977 193h1v1h-1zM883 208h1v1h-1zM996 276h1v1h-1zM951 430h1v1h-1zM897 231h1v1h-1zM782 280h1v1h-1zM871 202h1v1h-1zM744 253h1v1h-1zM744 235h1v1h-1zM981 228h1v1h-1zM834 205h1v1h-1zM709 222h1v1h-1zM776 203h1v1h-1zM873 278h1v1h-1zM984 353h1v1h-1zM985 212h1v1h-1zM910 275h1v1h-1zM722 295h1v1h-1zM937 234h1v1h-1zM843 232h1v1h-1zM678 308h1v1h-1zM677 274h1v1h-1zM917 264h1v1h-1zM997 373h1v1h-1zM747 258h1v1h-1zM969 464h1v1h-1zM769 233h1v1h-1zM1024 360h1v1h-1zM1030 450h1v1h-1zM938 465h1v1h-1zM711 234h1v1h-1zM1014 402h1v1h-1zM772 392h1v1h-1zM925 271h1v1h-1zM908 263h1v1h-1zM1012 363h1v1h-1zM1022 419h1v1h-1zM949 229h1v1h-1zM861 232h1v1h-1zM887 239h1v1h-1zM1016 309h1v1h-1zM679 261h1v1h-1zM928 201h1v1h-1zM791 387h1v1h-1zM829 213h1v1h-1zM943 447h1v1h-1zM723 234h1v1h-1zM675 323h1v1h-1zM1019 275h1v1h-1zM711 350h1v1h-1zM963 428h1v1h-1zM907 221h1v1h-1zM721 332h1v1h-1zM745 284h1v1h-1zM769 199h1v1h-1zM817 284h1v1h-1zM909 276h1v1h-1zM717 300h1v1h-1zM668 253h1v1h-1zM1004 257h1v1h-1zM790 286h1v1h-1zM776 340h1v1h-1zM998 191h1v1h-1zM741 405h1v1h-1zM982 284h1v1h-1zM828 213h1v1h-1zM709 192h1v1h-1zM990 214h1v1h-1zM985 200h1v1h-1zM697 305h1v1h-1zM918 468h1v1h-1zM1017 198h1v1h-1zM742 245h1v1h-1zM940 272h1v1h-1zM950 464h1v1h-1zM980 212h1v1h-1zM986 277h1v1h-1zM916 260h1v1h-1zM984 253h1v1h-1zM888 276h1v1h-1zM956 189h1v1h-1zM786 310h1v1h-1zM774 290h1v1h-1zM720 215h1v1h-1zM947 213h1v1h-1zM679 243h1v1h-1zM999 329h1v1h-1zM1027 406h1v1h-1zM786 315h1v1h-1zM763 233h1v1h-1zM734 221h1v1h-1zM728 322h1v1h-1zM986 330h1v1h-1zM1013 277h1v1h-1zM970 203h1v1h-1zM1027 277h1v1h-1zM723 375h1v1h-1zM740 265h1v1h-1zM746 252h1v1h-1zM979 230h1v1h-1zM917 228h1v1h-1zM828 262h1v1h-1zM713 321h1v1h-1zM726 294h1v1h-1zM1022 369h1v1h-1zM967 269h1v1h-1zM946 215h1v1h-1zM671 259h1v1h-1zM845 216h1v1h-1zM709 286h1v1h-1zM715 326h1v1h-1zM983 416h1v1h-1zM766 268h1v1h-1zM824 228h1v1h-1zM796 213h1v1h-1zM801 242h1v1h-1zM819 228h1v1h-1zM743 286h1v1h-1zM755 269h1v1h-1zM708 192h1v1h-1zM682 209h1v1h-1zM880 241h1v1h-1zM777 260h1v1h-1zM872 279h1v1h-1zM1024 274h1v1h-1zM714 251h1v1h-1zM1030 394h1v1h-1zM976 461h1v1h-1zM731 355h1v1h-1zM694 210h1v1h-1zM968 260h1v1h-1zM954 459h1v1h-1zM722 240h1v1h-1zM893 240h1v1h-1zM872 233h1v1h-1zM894 198h1v1h-1zM797 316h1v1h-1zM740 195h1v1h-1zM768 352h1v1h-1zM869 284h1v1h-1zM657 288h1v1h-1zM778 380h1v1h-1zM1030 254h1v1h-1zM722 326h1v1h-1zM943 238h1v1h-1zM841 193h1v1h-1zM995 366h1v1h-1zM694 298h1v1h-1zM987 434h1v1h-1zM794 342h1v1h-1zM807 249h1v1h-1zM994 293h1v1h-1zM778 393h1v1h-1zM980 284h1v1h-1zM889 256h1v1h-1z" fill="#2a2a2a"/>
<line x1="656.1" y1="189" x2="656.1" y2="307.6" stroke="#1e1e1e" stroke-width="1" />
<line x1="661.9" y1="189" x2="661.9" y2="257.4" stroke="#1e1e1e" stroke-width="1" />
<line x1="661.9" y1="267.8" x2="661.9" y2="314.3" stroke="#1e1e1e" stroke-width="1" />
<line x1="656.1" y1="307.6" x2="802.5" y2="477.4" stroke="#1e1e1e" stroke-width="1" />
<line x1="661.9" y1="257.4" x2="797.3" y2="414.464" stroke="#1e1e1e" stroke-width="1" />
<line x1="661.9" y1="267.8" x2="797.3" y2="424.864" stroke="#1e1e1e" stroke-width="1" />
<line x1="696" y1="189" x2="797.3" y2="306.456" stroke="#1e1e1e" stroke-width="1" />
<line x1="715.4" y1="189" x2="802.5" y2="290.046" stroke="#1e1e1e" stroke-width="1" />
<line x1="698.2" y1="189" x2="698.2" y2="356.436" stroke="#3a3a3a" stroke-width="1" />
<line x1="705" y1="189" x2="705" y2="364.324" stroke="#3a3a3a" stroke-width="1" />
<line x1="754.1" y1="189" x2="754.1" y2="233.9" stroke="#3a3a3a" stroke-width="1" />
<line x1="754.1" y1="256.3" x2="754.1" y2="421.28" stroke="#3a3a3a" stroke-width="1" />
<line x1="759.7" y1="189" x2="759.7" y2="240.3" stroke="#3a3a3a" stroke-width="1" />
<line x1="759.7" y1="262.8" x2="759.7" y2="427.776" stroke="#3a3a3a" stroke-width="1" />
<line x1="783.4" y1="189" x2="783.4" y2="240" stroke="#1e1e1e" stroke-width="1" />
<line x1="759.7" y1="240.3" x2="783.4" y2="240" stroke="#1e1e1e" stroke-width="1" />
<line x1="797.3" y1="189" x2="797.3" y2="471.4" stroke="#555" stroke-width="1" />
<line x1="802.5" y1="189" x2="802.5" y2="477.4" stroke="#555" stroke-width="1" />
<line x1="825.4" y1="193" x2="825.4" y2="477" stroke="#1e1e1e" stroke-width="1" />
<path d="M816 189v3.5h12v-3.5" fill="none" stroke="#444" stroke-width="1" />
<line x1="802.5" y1="477.4" x2="1035" y2="461" stroke="#1e1e1e" stroke-width="1" />
<line x1="825.4" y1="310" x2="964.6" y2="300" stroke="#1e1e1e" stroke-width="1" />
<line x1="964.6" y1="300" x2="964.6" y2="410" stroke="#1e1e1e" stroke-width="1" />
<line x1="970.8" y1="299.6" x2="970.8" y2="408" stroke="#1e1e1e" stroke-width="1" />
<line x1="825.4" y1="420.4" x2="970.8" y2="408" stroke="#1e1e1e" stroke-width="1" />
<line x1="825.4" y1="431" x2="1035" y2="414" stroke="#1e1e1e" stroke-width="1" />
<line x1="971.5" y1="277" x2="1035" y2="272" stroke="#1e1e1e" stroke-width="1" />
<line x1="994.6" y1="297.6" x2="1035" y2="294.5" stroke="#1e1e1e" stroke-width="1" />
<line x1="994.6" y1="297.6" x2="994.6" y2="406" stroke="#1e1e1e" stroke-width="1" />
<line x1="994.6" y1="406" x2="1035" y2="403" stroke="#1e1e1e" stroke-width="1" />
<line x1="971.5" y1="416" x2="971.5" y2="469" stroke="#1e1e1e" stroke-width="1" />
<line x1="994.6" y1="414" x2="994.6" y2="465" stroke="#1e1e1e" stroke-width="1" />
<path d="M971.5 277.8 L974.9 282.9 L976.8 288.5 L978.6 294.4 L980.2 300.2 L981.5 306.2 L982.7 312.2 L983.7 318.2 L984.4 324.3 L984.8 330.4 L985.0 336.5 L984.9 342.7 L984.5 348.8 L983.8 354.9 L982.8 360.9 L981.5 366.9 L979.9 372.8 L978.1 378.5 L976.0 384.1 L973.6 389.7 L970.9 395.2 L968.0 400.7 L964.8 406.0 L961.4 411.2 L957.8 416.3 L954.0 421.2 L950.1 425.9 L946.0 430.5 L941.9 435.0 L937.6 439.3 L933.2 443.5 L928.7 447.6 L924.0 451.6 L919.4 455.5 L914.6 459.3 L909.8 463.0 L904.9 466.6 L899.9 470.1 L894.8 473.5 L889.8 476.9 L884.6 480.2 L879.4 483.4 L874.2 486.5 L869.3 489.4 L865.6 491.5 L860.2 494.5 L854.8 497.4 L849.4 500.3 L843.9 503.2 L838.4 505.9 L832.9 508.7 L827.4 511.4 L821.8 514.0 L816.2 516.6 L810.6 519.1 L805.0 521.6 L799.4 524.1 L793.8 526.5 L788.2 528.9 L782.5 531.2 L776.8 533.5 L771.1 535.8 L765.4 538.0 L759.7 540.3 L754.0 542.4 L748.3 544.6 L742.6 546.7 L736.8 548.8 L731.1 550.9 L725.3 552.9 L719.5 555.0 L713.8 557.0 L708.0 559.0 L702.2 560.9 L696.4 562.9 L690.6 564.8 L684.7 566.7 L678.9 568.6 L673.1 570.4 L666.9 571.1 L627.4 526.2 L631.5 524.7 L635.5 523.1 L639.5 521.4 L643.6 519.7 L647.6 518.0 L651.6 516.3 L655.5 514.5 L659.5 512.7 L663.5 510.9 L667.4 509.1 L671.3 507.3 L675.3 505.4 L679.2 503.5 L683.1 501.5 L687.0 499.6 L690.8 497.6 L694.7 495.6 L698.5 493.5 L702.3 491.4 L706.1 489.3 L709.9 487.2 L713.7 485.0 L717.4 482.8 L721.2 480.6 L724.9 478.3 L728.6 476.0 L732.2 473.6 L735.9 471.3 L739.5 468.9 L743.1 466.4 L746.6 463.9 L750.2 461.4 L753.7 458.8 L757.2 456.2 L760.6 453.6 L764.0 450.9 L767.4 448.1 L770.8 445.3 L774.1 442.5 L777.3 439.6 L780.5 436.7 L783.7 433.7 L786.8 430.7 L789.9 427.6 L792.9 424.4 L795.9 421.2 L798.8 417.9 L801.6 414.6 L804.3 411.3 L807.0 407.8 L809.6 404.3 L812.1 400.8 L814.5 397.1 L816.8 393.5 L819.1 389.7 L821.2 385.9 L823.2 382.0 L825.0 378.1 L826.8 374.1 L828.4 370.1 L829.8 366.0 L831.1 361.9 L832.2 357.7 L833.2 353.4 L834.0 349.2 L834.6 344.9 L835.0 340.5 L835.3 336.2 L835.3 331.8 L835.2 327.4 L834.8 323.0 L834.3 318.7 L833.6 314.4 L832.6 310.1 L831.5 305.8 L830.2 301.7 L828.8 297.6 L827.2 293.5 L825.8 289.4Z" fill="#7096e2" fill-opacity="0.95" stroke="#1f4fc0" stroke-width="1.2"/>
<path d="M874 304h1v1h-1zM855 442h1v1h-1zM804 441h1v1h-1zM948 343h1v1h-1zM905 290h1v1h-1zM930 350h1v1h-1zM837 462h1v1h-1zM872 392h1v1h-1zM971 393h1v1h-1zM877 447h1v1h-1zM837 387h1v1h-1zM867 303h1v1h-1zM853 386h1v1h-1zM967 314h1v1h-1zM935 427h1v1h-1zM806 476h1v1h-1zM883 377h1v1h-1zM803 451h1v1h-1zM951 321h1v1h-1zM913 448h1v1h-1zM878 381h1v1h-1zM952 396h1v1h-1zM865 315h1v1h-1zM896 391h1v1h-1zM846 435h1v1h-1zM845 298h1v1h-1zM949 356h1v1h-1zM926 371h1v1h-1zM898 429h1v1h-1zM790 435h1v1h-1zM886 415h1v1h-1zM849 329h1v1h-1zM847 471h1v1h-1zM889 370h1v1h-1zM836 308h1v1h-1zM873 316h1v1h-1zM961 387h1v1h-1zM875 449h1v1h-1zM984 330h1v1h-1zM789 450h1v1h-1zM975 371h1v1h-1zM888 394h1v1h-1zM971 295h1v1h-1zM843 337h1v1h-1zM950 287h1v1h-1zM861 457h1v1h-1zM974 365h1v1h-1zM822 402h1v1h-1zM953 394h1v1h-1zM866 300h1v1h-1zM852 339h1v1h-1zM849 335h1v1h-1zM948 282h1v1h-1zM907 288h1v1h-1zM868 293h1v1h-1zM934 395h1v1h-1zM979 365h1v1h-1zM851 318h1v1h-1zM833 294h1v1h-1zM897 434h1v1h-1zM908 428h1v1h-1zM864 396h1v1h-1zM869 455h1v1h-1zM916 299h1v1h-1zM976 303h1v1h-1zM856 466h1v1h-1zM936 336h1v1h-1zM931 348h1v1h-1zM930 284h1v1h-1zM854 461h1v1h-1zM808 439h1v1h-1zM840 447h1v1h-1zM775 443h1v1h-1zM886 457h1v1h-1zM894 346h1v1h-1zM830 374h1v1h-1zM956 368h1v1h-1zM880 323h1v1h-1zM865 412h1v1h-1zM877 295h1v1h-1zM932 313h1v1h-1zM881 322h1v1h-1zM956 328h1v1h-1zM915 395h1v1h-1zM976 368h1v1h-1zM828 423h1v1h-1zM895 298h1v1h-1zM939 375h1v1h-1zM826 431h1v1h-1zM900 469h1v1h-1zM941 334h1v1h-1zM884 428h1v1h-1zM930 358h1v1h-1zM929 397h1v1h-1zM957 327h1v1h-1zM892 445h1v1h-1zM866 427h1v1h-1zM882 339h1v1h-1zM944 431h1v1h-1zM917 405h1v1h-1zM878 380h1v1h-1zM830 401h1v1h-1zM885 377h1v1h-1zM877 461h1v1h-1zM856 435h1v1h-1zM912 394h1v1h-1zM876 462h1v1h-1zM967 363h1v1h-1zM858 399h1v1h-1zM927 342h1v1h-1zM940 412h1v1h-1zM927 401h1v1h-1zM904 299h1v1h-1zM808 421h1v1h-1zM954 292h1v1h-1zM895 421h1v1h-1zM837 316h1v1h-1zM898 327h1v1h-1zM955 355h1v1h-1zM861 403h1v1h-1zM857 436h1v1h-1zM876 469h1v1h-1zM873 351h1v1h-1zM927 337h1v1h-1zM927 421h1v1h-1zM849 359h1v1h-1zM849 297h1v1h-1zM854 383h1v1h-1zM878 355h1v1h-1zM843 296h1v1h-1zM907 381h1v1h-1zM863 367h1v1h-1zM963 401h1v1h-1zM865 363h1v1h-1zM872 344h1v1h-1zM812 459h1v1h-1zM868 322h1v1h-1zM862 423h1v1h-1zM852 312h1v1h-1zM848 335h1v1h-1zM876 335h1v1h-1zM907 460h1v1h-1zM812 465h1v1h-1zM973 358h1v1h-1zM874 298h1v1h-1zM867 413h1v1h-1zM920 384h1v1h-1zM799 456h1v1h-1zM941 324h1v1h-1zM951 317h1v1h-1zM961 361h1v1h-1zM897 317h1v1h-1zM868 326h1v1h-1zM949 406h1v1h-1zM850 421h1v1h-1zM920 400h1v1h-1zM851 352h1v1h-1zM927 322h1v1h-1zM855 386h1v1h-1zM791 446h1v1h-1zM884 415h1v1h-1zM918 296h1v1h-1zM856 349h1v1h-1zM915 319h1v1h-1zM973 351h1v1h-1zM934 388h1v1h-1zM879 428h1v1h-1zM975 307h1v1h-1zM921 282h1v1h-1zM943 326h1v1h-1zM938 371h1v1h-1zM959 357h1v1h-1zM935 355h1v1h-1zM877 416h1v1h-1zM898 373h1v1h-1zM947 345h1v1h-1zM868 470h1v1h-1zM840 473h1v1h-1zM873 439h1v1h-1zM816 457h1v1h-1zM887 370h1v1h-1zM833 371h1v1h-1zM913 286h1v1h-1zM848 326h1v1h-1zM963 288h1v1h-1zM860 450h1v1h-1zM849 394h1v1h-1zM915 331h1v1h-1zM900 301h1v1h-1zM779 438h1v1h-1zM942 315h1v1h-1zM785 452h1v1h-1zM840 340h1v1h-1zM805 419h1v1h-1zM939 423h1v1h-1zM868 404h1v1h-1zM946 355h1v1h-1zM862 396h1v1h-1zM916 324h1v1h-1zM916 336h1v1h-1zM889 301h1v1h-1zM886 304h1v1h-1zM879 331h1v1h-1zM953 386h1v1h-1zM903 308h1v1h-1zM848 410h1v1h-1zM947 331h1v1h-1zM876 362h1v1h-1zM864 467h1v1h-1zM815 475h1v1h-1zM854 364h1v1h-1zM897 287h1v1h-1zM876 330h1v1h-1zM955 286h1v1h-1zM875 361h1v1h-1zM950 284h1v1h-1zM848 345h1v1h-1zM878 322h1v1h-1zM797 463h1v1h-1zM920 410h1v1h-1zM911 330h1v1h-1zM934 286h1v1h-1zM845 338h1v1h-1zM955 351h1v1h-1zM856 461h1v1h-1zM844 304h1v1h-1zM917 338h1v1h-1zM915 325h1v1h-1zM861 358h1v1h-1zM942 329h1v1h-1zM815 471h1v1h-1zM886 438h1v1h-1zM940 347h1v1h-1zM972 368h1v1h-1zM935 415h1v1h-1zM961 309h1v1h-1zM910 360h1v1h-1zM868 294h1v1h-1zM917 451h1v1h-1zM918 428h1v1h-1zM801 466h1v1h-1zM972 324h1v1h-1zM843 325h1v1h-1zM928 298h1v1h-1zM935 387h1v1h-1zM922 382h1v1h-1zM824 443h1v1h-1zM920 302h1v1h-1zM831 397h1v1h-1zM881 413h1v1h-1zM888 298h1v1h-1zM944 315h1v1h-1zM924 351h1v1h-1zM926 419h1v1h-1zM881 286h1v1h-1zM960 354h1v1h-1zM852 362h1v1h-1zM850 290h1v1h-1zM878 304h1v1h-1zM830 458h1v1h-1zM911 308h1v1h-1zM938 388h1v1h-1zM948 315h1v1h-1zM919 323h1v1h-1zM843 449h1v1h-1zM790 451h1v1h-1zM835 374h1v1h-1zM839 315h1v1h-1zM919 299h1v1h-1zM920 346h1v1h-1zM826 446h1v1h-1zM933 364h1v1h-1zM959 357h1v1h-1zM943 350h1v1h-1zM945 309h1v1h-1zM961 319h1v1h-1zM865 368h1v1h-1zM923 452h1v1h-1zM977 379h1v1h-1zM852 472h1v1h-1zM930 429h1v1h-1zM841 334h1v1h-1zM838 311h1v1h-1zM872 396h1v1h-1zM857 321h1v1h-1zM903 463h1v1h-1zM873 395h1v1h-1zM861 465h1v1h-1zM861 445h1v1h-1zM888 313h1v1h-1zM839 346h1v1h-1zM885 445h1v1h-1zM897 448h1v1h-1zM908 301h1v1h-1zM843 302h1v1h-1zM889 290h1v1h-1zM894 328h1v1h-1zM883 452h1v1h-1zM956 300h1v1h-1zM858 312h1v1h-1zM884 300h1v1h-1zM889 378h1v1h-1zM934 437h1v1h-1zM876 441h1v1h-1zM927 313h1v1h-1zM929 325h1v1h-1zM952 282h1v1h-1zM852 313h1v1h-1zM893 434h1v1h-1zM866 354h1v1h-1zM947 360h1v1h-1zM817 431h1v1h-1zM832 470h1v1h-1zM914 379h1v1h-1zM882 435h1v1h-1zM923 358h1v1h-1zM914 284h1v1h-1zM874 373h1v1h-1zM933 297h1v1h-1zM851 472h1v1h-1zM823 430h1v1h-1zM851 360h1v1h-1zM966 286h1v1h-1zM894 411h1v1h-1zM891 361h1v1h-1zM866 439h1v1h-1zM862 382h1v1h-1zM863 392h1v1h-1zM957 392h1v1h-1zM920 394h1v1h-1zM829 397h1v1h-1zM927 340h1v1h-1zM944 390h1v1h-1zM902 462h1v1h-1zM890 378h1v1h-1zM925 310h1v1h-1zM864 386h1v1h-1zM961 404h1v1h-1zM896 339h1v1h-1zM828 391h1v1h-1zM911 283h1v1h-1zM855 306h1v1h-1zM953 346h1v1h-1zM951 374h1v1h-1zM861 319h1v1h-1zM824 409h1v1h-1zM869 400h1v1h-1zM834 458h1v1h-1zM945 428h1v1h-1zM916 437h1v1h-1zM894 307h1v1h-1zM943 430h1v1h-1zM796 445h1v1h-1zM908 315h1v1h-1zM955 301h1v1h-1zM814 459h1v1h-1zM845 354h1v1h-1zM922 423h1v1h-1zM961 320h1v1h-1zM838 412h1v1h-1zM802 489h1v1h-1zM776 472h1v1h-1zM869 483h1v1h-1zM717 551h1v1h-1zM770 528h1v1h-1zM714 549h1v1h-1zM795 469h1v1h-1zM716 546h1v1h-1zM735 489h1v1h-1zM634 525h1v1h-1zM749 532h1v1h-1zM825 486h1v1h-1zM727 501h1v1h-1zM736 527h1v1h-1zM707 546h1v1h-1zM743 468h1v1h-1zM711 550h1v1h-1zM684 562h1v1h-1zM765 528h1v1h-1zM745 498h1v1h-1zM742 483h1v1h-1zM797 508h1v1h-1zM745 540h1v1h-1zM734 536h1v1h-1zM747 490h1v1h-1zM644 532h1v1h-1zM804 479h1v1h-1zM705 505h1v1h-1zM803 510h1v1h-1zM650 536h1v1h-1zM773 514h1v1h-1zM756 466h1v1h-1zM722 544h1v1h-1zM722 516h1v1h-1zM718 496h1v1h-1zM837 490h1v1h-1zM700 551h1v1h-1zM713 551h1v1h-1zM698 524h1v1h-1zM730 490h1v1h-1zM724 479h1v1h-1zM723 551h1v1h-1zM762 514h1v1h-1zM773 511h1v1h-1zM762 479h1v1h-1zM687 533h1v1h-1zM832 477h1v1h-1zM698 560h1v1h-1zM722 484h1v1h-1zM694 537h1v1h-1zM772 495h1v1h-1zM760 486h1v1h-1zM816 476h1v1h-1zM718 512h1v1h-1zM785 469h1v1h-1zM840 487h1v1h-1zM759 459h1v1h-1zM785 477h1v1h-1zM736 481h1v1h-1zM701 523h1v1h-1zM652 521h1v1h-1zM666 512h1v1h-1zM830 505h1v1h-1zM688 511h1v1h-1zM744 477h1v1h-1zM727 526h1v1h-1zM651 542h1v1h-1zM807 517h1v1h-1zM771 526h1v1h-1zM800 502h1v1h-1zM770 515h1v1h-1zM665 551h1v1h-1zM857 475h1v1h-1zM746 526h1v1h-1zM804 478h1v1h-1zM672 568h1v1h-1zM673 569h1v1h-1zM734 486h1v1h-1zM655 515h1v1h-1zM791 493h1v1h-1zM799 504h1v1h-1zM668 560h1v1h-1zM693 521h1v1h-1zM745 543h1v1h-1zM823 510h1v1h-1zM692 518h1v1h-1zM678 565h1v1h-1zM711 540h1v1h-1zM744 492h1v1h-1zM761 535h1v1h-1zM748 485h1v1h-1zM774 477h1v1h-1zM751 513h1v1h-1zM715 491h1v1h-1zM809 509h1v1h-1zM747 480h1v1h-1zM682 543h1v1h-1zM712 492h1v1h-1zM763 484h1v1h-1zM807 513h1v1h-1zM637 526h1v1h-1zM742 501h1v1h-1zM646 541h1v1h-1zM731 526h1v1h-1zM650 539h1v1h-1zM753 471h1v1h-1zM775 458h1v1h-1zM819 507h1v1h-1zM805 497h1v1h-1zM787 505h1v1h-1zM664 559h1v1h-1zM751 481h1v1h-1zM744 498h1v1h-1zM828 499h1v1h-1zM651 527h1v1h-1zM788 490h1v1h-1zM765 477h1v1h-1zM741 487h1v1h-1zM648 522h1v1h-1zM841 487h1v1h-1zM731 491h1v1h-1zM752 525h1v1h-1zM720 484h1v1h-1zM691 550h1v1h-1zM683 511h1v1h-1zM878 481h1v1h-1zM848 491h1v1h-1zM766 457h1v1h-1zM707 505h1v1h-1zM681 548h1v1h-1zM814 507h1v1h-1zM695 508h1v1h-1zM747 479h1v1h-1zM823 500h1v1h-1zM703 502h1v1h-1zM688 502h1v1h-1zM717 547h1v1h-1zM744 506h1v1h-1zM791 490h1v1h-1zM859 490h1v1h-1zM733 523h1v1h-1zM729 479h1v1h-1zM666 510h1v1h-1zM762 458h1v1h-1zM682 563h1v1h-1zM850 476h1v1h-1zM885 473h1v1h-1zM740 515h1v1h-1zM705 512h1v1h-1zM676 541h1v1h-1z" fill="#1e3d9a"/>
<path d="M876 374h1v1h-1zM913 313h1v1h-1zM945 355h1v1h-1zM919 361h1v1h-1zM864 445h1v1h-1zM917 338h1v1h-1zM966 403h1v1h-1zM903 420h1v1h-1zM902 341h1v1h-1zM846 343h1v1h-1zM866 416h1v1h-1zM850 389h1v1h-1zM927 380h1v1h-1zM816 453h1v1h-1zM896 421h1v1h-1zM848 388h1v1h-1zM856 406h1v1h-1zM847 431h1v1h-1zM867 371h1v1h-1zM939 334h1v1h-1zM848 446h1v1h-1zM826 407h1v1h-1zM871 446h1v1h-1zM894 439h1v1h-1zM901 410h1v1h-1zM911 310h1v1h-1zM794 449h1v1h-1zM836 466h1v1h-1zM844 394h1v1h-1zM939 434h1v1h-1zM962 378h1v1h-1zM877 458h1v1h-1zM809 445h1v1h-1zM898 452h1v1h-1zM864 370h1v1h-1zM876 312h1v1h-1zM950 337h1v1h-1zM842 466h1v1h-1zM894 303h1v1h-1zM945 317h1v1h-1zM897 441h1v1h-1zM886 336h1v1h-1zM938 323h1v1h-1zM919 434h1v1h-1zM938 283h1v1h-1zM833 432h1v1h-1zM879 294h1v1h-1zM968 372h1v1h-1zM842 420h1v1h-1zM920 417h1v1h-1zM941 376h1v1h-1zM906 404h1v1h-1zM957 401h1v1h-1zM955 390h1v1h-1zM911 458h1v1h-1zM873 345h1v1h-1zM950 423h1v1h-1zM965 324h1v1h-1zM837 313h1v1h-1zM793 458h1v1h-1zM918 342h1v1h-1zM842 333h1v1h-1zM928 370h1v1h-1zM969 306h1v1h-1zM878 373h1v1h-1zM929 445h1v1h-1zM829 410h1v1h-1zM874 455h1v1h-1zM949 395h1v1h-1zM924 322h1v1h-1zM958 294h1v1h-1zM922 428h1v1h-1zM912 323h1v1h-1zM940 418h1v1h-1zM836 359h1v1h-1zM895 417h1v1h-1zM951 312h1v1h-1zM869 374h1v1h-1zM924 376h1v1h-1zM880 408h1v1h-1zM967 327h1v1h-1zM971 341h1v1h-1zM963 286h1v1h-1zM836 441h1v1h-1zM926 425h1v1h-1zM925 299h1v1h-1zM874 340h1v1h-1zM880 438h1v1h-1zM852 466h1v1h-1zM895 423h1v1h-1zM853 314h1v1h-1zM881 466h1v1h-1zM863 366h1v1h-1zM789 438h1v1h-1zM889 435h1v1h-1zM935 404h1v1h-1zM878 333h1v1h-1zM814 416h1v1h-1zM977 333h1v1h-1zM870 333h1v1h-1zM969 337h1v1h-1zM917 426h1v1h-1zM873 308h1v1h-1zM888 422h1v1h-1zM839 418h1v1h-1zM858 300h1v1h-1zM878 295h1v1h-1zM948 300h1v1h-1zM913 381h1v1h-1zM905 391h1v1h-1zM872 396h1v1h-1zM915 290h1v1h-1zM816 458h1v1h-1zM970 371h1v1h-1zM965 347h1v1h-1zM908 362h1v1h-1zM841 314h1v1h-1zM900 371h1v1h-1zM795 430h1v1h-1zM870 371h1v1h-1zM856 352h1v1h-1zM850 359h1v1h-1zM869 413h1v1h-1zM817 446h1v1h-1zM938 288h1v1h-1zM825 432h1v1h-1zM846 442h1v1h-1zM913 302h1v1h-1zM874 301h1v1h-1zM875 285h1v1h-1zM868 412h1v1h-1zM895 373h1v1h-1zM864 306h1v1h-1zM838 295h1v1h-1zM901 306h1v1h-1zM893 286h1v1h-1zM866 379h1v1h-1zM945 414h1v1h-1zM836 379h1v1h-1zM845 373h1v1h-1zM811 455h1v1h-1zM940 427h1v1h-1zM882 320h1v1h-1zM927 444h1v1h-1zM844 455h1v1h-1zM903 346h1v1h-1zM919 283h1v1h-1zM855 366h1v1h-1zM835 398h1v1h-1zM856 340h1v1h-1zM837 420h1v1h-1zM913 295h1v1h-1zM963 291h1v1h-1zM925 296h1v1h-1zM842 337h1v1h-1zM936 305h1v1h-1zM925 329h1v1h-1zM866 337h1v1h-1zM824 443h1v1h-1zM868 421h1v1h-1zM940 332h1v1h-1zM839 439h1v1h-1zM841 418h1v1h-1zM918 425h1v1h-1zM910 405h1v1h-1zM820 428h1v1h-1zM956 387h1v1h-1zM972 287h1v1h-1zM906 423h1v1h-1zM887 448h1v1h-1zM850 298h1v1h-1zM824 466h1v1h-1zM915 350h1v1h-1zM878 356h1v1h-1zM912 299h1v1h-1zM873 428h1v1h-1zM834 351h1v1h-1zM863 407h1v1h-1zM949 303h1v1h-1zM874 306h1v1h-1zM937 427h1v1h-1zM922 366h1v1h-1zM894 287h1v1h-1zM962 344h1v1h-1zM828 386h1v1h-1zM851 316h1v1h-1zM929 371h1v1h-1zM790 449h1v1h-1zM801 424h1v1h-1zM953 323h1v1h-1zM897 394h1v1h-1zM898 455h1v1h-1zM881 420h1v1h-1zM963 321h1v1h-1zM887 377h1v1h-1zM978 313h1v1h-1zM859 469h1v1h-1zM902 345h1v1h-1zM899 360h1v1h-1zM960 383h1v1h-1zM899 325h1v1h-1zM907 431h1v1h-1zM903 338h1v1h-1zM936 344h1v1h-1zM795 450h1v1h-1zM882 450h1v1h-1zM876 446h1v1h-1zM810 446h1v1h-1zM905 359h1v1h-1zM892 325h1v1h-1zM819 466h1v1h-1zM934 293h1v1h-1zM922 315h1v1h-1zM896 393h1v1h-1zM858 399h1v1h-1zM932 288h1v1h-1zM917 367h1v1h-1zM969 396h1v1h-1zM828 373h1v1h-1zM832 368h1v1h-1zM857 430h1v1h-1zM945 312h1v1h-1zM885 449h1v1h-1zM931 407h1v1h-1zM786 433h1v1h-1zM938 385h1v1h-1zM895 448h1v1h-1zM970 339h1v1h-1zM864 409h1v1h-1zM849 459h1v1h-1zM850 324h1v1h-1zM939 395h1v1h-1zM955 360h1v1h-1zM837 332h1v1h-1zM886 416h1v1h-1zM886 384h1v1h-1zM953 338h1v1h-1zM873 452h1v1h-1zM833 397h1v1h-1zM888 470h1v1h-1zM866 306h1v1h-1zM795 467h1v1h-1zM864 293h1v1h-1zM879 421h1v1h-1zM836 301h1v1h-1zM923 313h1v1h-1zM964 326h1v1h-1zM920 356h1v1h-1zM930 289h1v1h-1zM931 439h1v1h-1zM846 335h1v1h-1zM947 393h1v1h-1zM924 426h1v1h-1zM953 378h1v1h-1zM957 402h1v1h-1zM944 285h1v1h-1zM892 414h1v1h-1zM851 473h1v1h-1zM889 352h1v1h-1zM904 343h1v1h-1zM829 430h1v1h-1zM914 384h1v1h-1zM870 407h1v1h-1zM822 429h1v1h-1zM831 416h1v1h-1zM905 306h1v1h-1zM954 385h1v1h-1zM859 316h1v1h-1zM873 376h1v1h-1zM830 296h1v1h-1zM850 316h1v1h-1zM970 327h1v1h-1zM867 439h1v1h-1zM895 433h1v1h-1zM846 309h1v1h-1zM971 303h1v1h-1zM967 309h1v1h-1zM878 398h1v1h-1zM901 423h1v1h-1zM832 432h1v1h-1zM962 390h1v1h-1zM873 414h1v1h-1zM831 409h1v1h-1zM890 423h1v1h-1zM951 359h1v1h-1zM842 303h1v1h-1zM861 297h1v1h-1zM959 362h1v1h-1zM865 399h1v1h-1zM837 372h1v1h-1zM946 413h1v1h-1zM915 435h1v1h-1zM788 444h1v1h-1zM954 396h1v1h-1zM838 299h1v1h-1zM966 297h1v1h-1zM874 447h1v1h-1zM879 346h1v1h-1zM917 299h1v1h-1zM965 320h1v1h-1zM910 343h1v1h-1zM864 408h1v1h-1zM932 356h1v1h-1zM930 288h1v1h-1zM972 290h1v1h-1zM945 325h1v1h-1zM907 358h1v1h-1zM919 331h1v1h-1zM830 376h1v1h-1zM849 337h1v1h-1zM881 413h1v1h-1zM930 405h1v1h-1zM904 359h1v1h-1zM833 301h1v1h-1zM897 288h1v1h-1zM890 450h1v1h-1zM955 417h1v1h-1zM967 358h1v1h-1zM894 379h1v1h-1zM865 399h1v1h-1zM916 419h1v1h-1zM946 344h1v1h-1zM971 322h1v1h-1zM808 438h1v1h-1zM952 386h1v1h-1zM840 420h1v1h-1zM856 467h1v1h-1zM926 330h1v1h-1zM931 428h1v1h-1zM911 351h1v1h-1zM832 367h1v1h-1zM975 287h1v1h-1zM874 459h1v1h-1zM852 473h1v1h-1zM880 313h1v1h-1zM882 294h1v1h-1zM827 455h1v1h-1zM909 296h1v1h-1zM886 311h1v1h-1zM864 448h1v1h-1zM812 467h1v1h-1zM970 384h1v1h-1zM844 392h1v1h-1zM922 446h1v1h-1zM968 368h1v1h-1zM838 452h1v1h-1zM890 384h1v1h-1zM873 384h1v1h-1zM880 342h1v1h-1zM870 363h1v1h-1zM843 461h1v1h-1zM856 301h1v1h-1zM874 468h1v1h-1zM858 357h1v1h-1zM952 395h1v1h-1zM834 447h1v1h-1zM886 438h1v1h-1zM850 357h1v1h-1zM851 345h1v1h-1zM944 326h1v1h-1zM888 412h1v1h-1zM863 292h1v1h-1zM849 343h1v1h-1zM845 292h1v1h-1zM913 358h1v1h-1zM831 460h1v1h-1zM882 378h1v1h-1zM827 431h1v1h-1zM867 465h1v1h-1zM900 451h1v1h-1zM907 394h1v1h-1zM891 328h1v1h-1zM902 364h1v1h-1zM972 346h1v1h-1zM858 333h1v1h-1zM846 466h1v1h-1zM855 440h1v1h-1zM901 378h1v1h-1zM857 371h1v1h-1zM848 420h1v1h-1zM912 294h1v1h-1zM867 397h1v1h-1zM912 313h1v1h-1zM849 466h1v1h-1zM974 298h1v1h-1zM841 437h1v1h-1zM912 308h1v1h-1zM860 444h1v1h-1zM931 319h1v1h-1zM839 393h1v1h-1zM890 297h1v1h-1zM935 331h1v1h-1zM977 336h1v1h-1zM919 306h1v1h-1zM836 406h1v1h-1zM793 444h1v1h-1zM873 402h1v1h-1zM845 336h1v1h-1zM917 287h1v1h-1zM936 352h1v1h-1zM929 335h1v1h-1zM882 416h1v1h-1zM878 447h1v1h-1zM895 389h1v1h-1zM848 358h1v1h-1zM849 388h1v1h-1zM798 443h1v1h-1zM961 309h1v1h-1zM939 424h1v1h-1zM954 346h1v1h-1zM945 397h1v1h-1zM902 457h1v1h-1zM903 289h1v1h-1zM809 447h1v1h-1zM923 399h1v1h-1zM909 440h1v1h-1zM860 292h1v1h-1zM855 298h1v1h-1zM941 424h1v1h-1zM901 414h1v1h-1zM871 469h1v1h-1zM869 449h1v1h-1zM839 410h1v1h-1zM919 348h1v1h-1zM845 433h1v1h-1zM827 466h1v1h-1zM934 355h1v1h-1zM894 361h1v1h-1zM886 405h1v1h-1zM939 425h1v1h-1zM856 341h1v1h-1zM895 397h1v1h-1zM942 302h1v1h-1zM871 397h1v1h-1zM916 339h1v1h-1zM839 409h1v1h-1zM911 445h1v1h-1zM887 445h1v1h-1zM957 282h1v1h-1zM833 436h1v1h-1zM944 327h1v1h-1zM843 326h1v1h-1zM950 299h1v1h-1zM929 397h1v1h-1zM854 376h1v1h-1zM931 430h1v1h-1zM978 375h1v1h-1zM889 307h1v1h-1zM875 398h1v1h-1zM897 358h1v1h-1zM780 447h1v1h-1zM830 464h1v1h-1zM929 332h1v1h-1zM866 413h1v1h-1zM859 359h1v1h-1zM923 426h1v1h-1zM866 403h1v1h-1zM860 321h1v1h-1zM977 315h1v1h-1zM917 314h1v1h-1zM931 378h1v1h-1zM934 313h1v1h-1zM916 376h1v1h-1zM930 354h1v1h-1zM922 295h1v1h-1zM864 367h1v1h-1zM850 313h1v1h-1zM975 320h1v1h-1zM830 454h1v1h-1zM876 471h1v1h-1zM891 303h1v1h-1zM854 434h1v1h-1zM926 443h1v1h-1zM939 335h1v1h-1zM862 307h1v1h-1zM871 453h1v1h-1zM939 322h1v1h-1zM824 446h1v1h-1zM898 377h1v1h-1zM948 385h1v1h-1zM970 361h1v1h-1zM886 291h1v1h-1zM878 435h1v1h-1zM817 427h1v1h-1zM972 378h1v1h-1zM914 343h1v1h-1zM810 463h1v1h-1zM781 446h1v1h-1zM863 459h1v1h-1zM969 336h1v1h-1zM828 455h1v1h-1zM842 331h1v1h-1zM901 286h1v1h-1zM970 350h1v1h-1zM854 328h1v1h-1zM848 469h1v1h-1zM850 404h1v1h-1zM815 460h1v1h-1zM866 403h1v1h-1zM945 399h1v1h-1zM887 307h1v1h-1zM902 347h1v1h-1zM922 430h1v1h-1zM816 430h1v1h-1zM880 370h1v1h-1zM864 315h1v1h-1zM912 363h1v1h-1zM921 390h1v1h-1zM971 278h1v1h-1zM948 355h1v1h-1zM890 345h1v1h-1zM812 417h1v1h-1zM886 465h1v1h-1zM913 384h1v1h-1zM942 320h1v1h-1zM957 386h1v1h-1zM846 426h1v1h-1zM913 314h1v1h-1zM908 328h1v1h-1zM964 349h1v1h-1zM924 412h1v1h-1zM872 459h1v1h-1zM937 382h1v1h-1zM855 289h1v1h-1zM918 423h1v1h-1zM962 374h1v1h-1zM916 335h1v1h-1zM901 462h1v1h-1zM943 380h1v1h-1zM911 358h1v1h-1zM960 362h1v1h-1zM827 475h1v1h-1zM908 416h1v1h-1zM910 284h1v1h-1zM854 392h1v1h-1zM909 311h1v1h-1zM851 319h1v1h-1zM970 375h1v1h-1zM786 452h1v1h-1zM948 342h1v1h-1zM928 332h1v1h-1zM955 402h1v1h-1zM882 303h1v1h-1zM929 313h1v1h-1zM839 474h1v1h-1zM850 338h1v1h-1zM883 445h1v1h-1zM976 377h1v1h-1zM854 290h1v1h-1zM846 432h1v1h-1zM966 387h1v1h-1zM839 379h1v1h-1zM935 423h1v1h-1zM925 357h1v1h-1zM977 301h1v1h-1zM942 317h1v1h-1zM907 446h1v1h-1zM974 372h1v1h-1zM899 364h1v1h-1zM882 373h1v1h-1zM911 396h1v1h-1zM967 386h1v1h-1zM814 424h1v1h-1zM974 368h1v1h-1zM952 413h1v1h-1zM953 360h1v1h-1zM851 304h1v1h-1zM896 388h1v1h-1zM821 418h1v1h-1zM854 395h1v1h-1zM975 285h1v1h-1zM860 324h1v1h-1zM970 282h1v1h-1zM962 316h1v1h-1zM844 403h1v1h-1zM834 434h1v1h-1zM872 419h1v1h-1zM917 389h1v1h-1zM894 363h1v1h-1zM981 318h1v1h-1zM902 382h1v1h-1zM921 438h1v1h-1zM916 316h1v1h-1zM878 306h1v1h-1zM942 330h1v1h-1zM901 368h1v1h-1zM939 377h1v1h-1zM873 368h1v1h-1zM957 307h1v1h-1zM867 336h1v1h-1zM885 350h1v1h-1zM928 304h1v1h-1zM925 412h1v1h-1zM869 411h1v1h-1zM862 447h1v1h-1zM910 318h1v1h-1zM897 322h1v1h-1zM870 467h1v1h-1zM888 366h1v1h-1zM853 406h1v1h-1zM897 381h1v1h-1zM918 346h1v1h-1zM850 406h1v1h-1zM901 285h1v1h-1zM781 441h1v1h-1zM949 399h1v1h-1zM861 304h1v1h-1zM936 389h1v1h-1zM861 444h1v1h-1zM858 362h1v1h-1zM864 342h1v1h-1zM890 459h1v1h-1zM816 423h1v1h-1zM912 305h1v1h-1zM908 372h1v1h-1zM946 358h1v1h-1zM967 360h1v1h-1zM878 441h1v1h-1zM915 358h1v1h-1zM862 455h1v1h-1zM875 323h1v1h-1zM845 454h1v1h-1zM914 324h1v1h-1zM793 454h1v1h-1zM960 341h1v1h-1zM885 349h1v1h-1zM873 428h1v1h-1zM849 425h1v1h-1zM923 305h1v1h-1zM824 474h1v1h-1zM876 407h1v1h-1zM799 426h1v1h-1zM845 424h1v1h-1zM946 374h1v1h-1zM923 395h1v1h-1zM836 377h1v1h-1zM863 390h1v1h-1zM886 420h1v1h-1zM837 384h1v1h-1zM899 326h1v1h-1zM851 304h1v1h-1zM920 377h1v1h-1zM841 395h1v1h-1zM894 387h1v1h-1zM863 397h1v1h-1zM879 455h1v1h-1zM920 315h1v1h-1zM928 414h1v1h-1zM851 359h1v1h-1zM919 406h1v1h-1zM865 382h1v1h-1zM861 370h1v1h-1zM911 306h1v1h-1zM955 312h1v1h-1zM854 355h1v1h-1zM853 318h1v1h-1zM825 441h1v1h-1zM892 306h1v1h-1zM975 368h1v1h-1zM956 291h1v1h-1zM840 440h1v1h-1zM840 426h1v1h-1zM932 441h1v1h-1zM822 403h1v1h-1zM848 449h1v1h-1zM943 403h1v1h-1zM918 317h1v1h-1zM812 469h1v1h-1zM886 468h1v1h-1zM839 419h1v1h-1zM944 336h1v1h-1zM892 439h1v1h-1zM868 458h1v1h-1zM833 293h1v1h-1zM956 309h1v1h-1zM963 400h1v1h-1zM844 289h1v1h-1zM919 426h1v1h-1zM979 348h1v1h-1zM927 355h1v1h-1zM942 387h1v1h-1zM809 463h1v1h-1zM958 336h1v1h-1zM941 336h1v1h-1zM948 377h1v1h-1zM808 414h1v1h-1zM853 373h1v1h-1zM833 394h1v1h-1zM891 293h1v1h-1zM876 403h1v1h-1zM943 365h1v1h-1zM793 460h1v1h-1zM811 463h1v1h-1zM921 439h1v1h-1zM897 426h1v1h-1zM979 340h1v1h-1zM835 338h1v1h-1zM950 405h1v1h-1zM834 429h1v1h-1zM938 288h1v1h-1zM910 376h1v1h-1zM834 443h1v1h-1zM957 400h1v1h-1zM935 359h1v1h-1zM872 363h1v1h-1zM930 351h1v1h-1zM940 314h1v1h-1zM972 302h1v1h-1zM902 390h1v1h-1zM900 288h1v1h-1zM837 290h1v1h-1zM955 359h1v1h-1zM950 333h1v1h-1zM897 336h1v1h-1zM850 299h1v1h-1zM948 383h1v1h-1zM958 408h1v1h-1zM938 369h1v1h-1zM795 427h1v1h-1zM781 469h1v1h-1zM693 511h1v1h-1zM654 514h1v1h-1zM746 467h1v1h-1zM712 506h1v1h-1zM758 530h1v1h-1zM775 512h1v1h-1zM776 530h1v1h-1zM665 547h1v1h-1zM658 536h1v1h-1zM856 476h1v1h-1zM690 559h1v1h-1zM639 524h1v1h-1zM680 541h1v1h-1zM720 522h1v1h-1zM792 511h1v1h-1zM710 538h1v1h-1zM731 479h1v1h-1zM680 515h1v1h-1zM830 508h1v1h-1zM773 452h1v1h-1zM690 514h1v1h-1zM744 524h1v1h-1zM774 474h1v1h-1zM718 525h1v1h-1zM683 554h1v1h-1zM840 499h1v1h-1zM698 525h1v1h-1zM836 497h1v1h-1zM751 527h1v1h-1zM717 523h1v1h-1zM774 446h1v1h-1zM776 507h1v1h-1zM712 493h1v1h-1zM760 468h1v1h-1zM787 519h1v1h-1zM744 543h1v1h-1zM683 563h1v1h-1zM823 503h1v1h-1zM756 506h1v1h-1zM676 506h1v1h-1zM850 482h1v1h-1zM792 509h1v1h-1zM691 552h1v1h-1zM654 527h1v1h-1zM732 482h1v1h-1zM684 560h1v1h-1zM768 500h1v1h-1zM723 531h1v1h-1zM777 501h1v1h-1zM705 521h1v1h-1zM784 510h1v1h-1zM681 515h1v1h-1zM790 469h1v1h-1zM764 494h1v1h-1zM749 531h1v1h-1zM727 528h1v1h-1zM640 521h1v1h-1zM706 554h1v1h-1zM743 477h1v1h-1zM750 524h1v1h-1zM692 538h1v1h-1zM805 488h1v1h-1zM720 491h1v1h-1zM762 502h1v1h-1zM688 533h1v1h-1zM750 494h1v1h-1zM799 475h1v1h-1zM874 479h1v1h-1zM753 499h1v1h-1zM833 482h1v1h-1zM768 521h1v1h-1zM840 489h1v1h-1zM816 496h1v1h-1zM706 552h1v1h-1zM728 540h1v1h-1zM766 477h1v1h-1zM759 537h1v1h-1zM767 477h1v1h-1zM784 501h1v1h-1zM691 532h1v1h-1zM741 480h1v1h-1zM704 514h1v1h-1zM733 491h1v1h-1zM729 487h1v1h-1zM812 506h1v1h-1zM721 514h1v1h-1zM696 532h1v1h-1zM786 505h1v1h-1zM734 514h1v1h-1zM802 481h1v1h-1zM844 486h1v1h-1zM719 520h1v1h-1zM784 525h1v1h-1zM708 506h1v1h-1zM817 481h1v1h-1zM695 526h1v1h-1zM735 509h1v1h-1zM738 542h1v1h-1zM847 485h1v1h-1zM743 466h1v1h-1zM714 555h1v1h-1zM678 557h1v1h-1zM744 508h1v1h-1zM638 536h1v1h-1zM671 550h1v1h-1zM734 512h1v1h-1zM642 537h1v1h-1zM774 465h1v1h-1zM821 505h1v1h-1zM877 472h1v1h-1zM767 532h1v1h-1zM680 519h1v1h-1zM756 527h1v1h-1zM888 475h1v1h-1zM754 484h1v1h-1zM696 510h1v1h-1zM681 515h1v1h-1zM717 490h1v1h-1zM851 495h1v1h-1zM755 465h1v1h-1zM723 528h1v1h-1zM736 483h1v1h-1zM754 537h1v1h-1zM712 504h1v1h-1zM738 545h1v1h-1zM849 477h1v1h-1zM674 552h1v1h-1zM844 488h1v1h-1zM770 526h1v1h-1zM773 447h1v1h-1zM725 546h1v1h-1zM793 490h1v1h-1zM878 483h1v1h-1zM772 528h1v1h-1zM748 484h1v1h-1zM733 502h1v1h-1zM746 477h1v1h-1zM836 487h1v1h-1zM791 479h1v1h-1zM712 548h1v1h-1zM678 522h1v1h-1zM708 532h1v1h-1zM872 478h1v1h-1zM741 507h1v1h-1zM653 517h1v1h-1zM722 485h1v1h-1zM727 540h1v1h-1zM752 533h1v1h-1zM658 545h1v1h-1zM748 523h1v1h-1zM788 513h1v1h-1zM785 514h1v1h-1zM852 496h1v1h-1zM774 520h1v1h-1zM775 506h1v1h-1zM750 491h1v1h-1zM751 502h1v1h-1zM771 528h1v1h-1zM769 495h1v1h-1zM715 483h1v1h-1zM711 551h1v1h-1zM654 543h1v1h-1zM776 509h1v1h-1zM734 478h1v1h-1zM750 509h1v1h-1zM868 477h1v1h-1zM665 556h1v1h-1zM707 544h1v1h-1zM811 494h1v1h-1zM807 517h1v1h-1zM688 530h1v1h-1zM856 478h1v1h-1zM776 513h1v1h-1zM820 513h1v1h-1zM686 519h1v1h-1zM669 568h1v1h-1zM695 549h1v1h-1zM700 549h1v1h-1zM779 475h1v1h-1zM782 469h1v1h-1zM773 530h1v1h-1zM790 500h1v1h-1zM789 504h1v1h-1zM798 477h1v1h-1zM778 531h1v1h-1zM740 542h1v1h-1zM728 502h1v1h-1zM806 478h1v1h-1zM743 484h1v1h-1zM646 520h1v1h-1zM838 489h1v1h-1zM711 552h1v1h-1zM809 519h1v1h-1zM798 507h1v1h-1zM788 495h1v1h-1zM802 493h1v1h-1zM832 496h1v1h-1zM658 548h1v1h-1zM695 548h1v1h-1zM641 528h1v1h-1zM747 511h1v1h-1zM718 505h1v1h-1zM707 522h1v1h-1zM784 508h1v1h-1zM668 544h1v1h-1zM672 565h1v1h-1zM677 536h1v1h-1zM644 537h1v1h-1zM741 503h1v1h-1zM815 514h1v1h-1zM732 484h1v1h-1zM757 501h1v1h-1zM705 497h1v1h-1zM723 497h1v1h-1zM742 492h1v1h-1zM816 489h1v1h-1zM773 492h1v1h-1zM777 479h1v1h-1zM707 491h1v1h-1zM781 477h1v1h-1zM771 481h1v1h-1zM727 499h1v1h-1zM724 521h1v1h-1zM729 536h1v1h-1zM716 528h1v1h-1zM757 475h1v1h-1zM696 523h1v1h-1zM653 549h1v1h-1zM846 479h1v1h-1zM772 467h1v1h-1zM732 543h1v1h-1zM725 509h1v1h-1zM738 528h1v1h-1zM706 521h1v1h-1zM700 554h1v1h-1zM742 506h1v1h-1zM808 499h1v1h-1zM691 501h1v1h-1zM795 481h1v1h-1zM758 521h1v1h-1zM781 460h1v1h-1zM646 519h1v1h-1zM768 457h1v1h-1zM758 459h1v1h-1zM801 511h1v1h-1zM730 484h1v1h-1zM790 472h1v1h-1zM658 532h1v1h-1zM800 497h1v1h-1zM750 492h1v1h-1zM779 468h1v1h-1zM659 550h1v1h-1zM705 502h1v1h-1zM707 544h1v1h-1zM666 520h1v1h-1zM774 464h1v1h-1zM683 530h1v1h-1zM688 554h1v1h-1zM773 533h1v1h-1zM718 534h1v1h-1zM713 490h1v1h-1zM759 534h1v1h-1zM817 480h1v1h-1zM698 561h1v1h-1zM775 527h1v1h-1zM710 533h1v1h-1zM798 521h1v1h-1zM781 526h1v1h-1zM687 557h1v1h-1zM694 537h1v1h-1zM718 546h1v1h-1zM749 520h1v1h-1zM667 527h1v1h-1zM727 512h1v1h-1zM670 549h1v1h-1zM893 474h1v1h-1zM727 551h1v1h-1zM823 501h1v1h-1zM743 525h1v1h-1zM718 539h1v1h-1zM686 514h1v1h-1zM735 502h1v1h-1zM785 488h1v1h-1zM689 538h1v1h-1zM767 464h1v1h-1zM800 500h1v1h-1zM755 463h1v1h-1zM739 473h1v1h-1zM797 502h1v1h-1zM740 532h1v1h-1zM772 520h1v1h-1zM834 485h1v1h-1zM764 519h1v1h-1zM694 498h1v1h-1zM856 484h1v1h-1zM785 509h1v1h-1zM768 514h1v1h-1zM792 513h1v1h-1zM700 539h1v1h-1z" fill="#4a6cc0"/>
<path d="M973.8 289.5 L975.5 295.3 L977.1 301.0 L978.4 306.9 L979.6 312.8 L980.5 318.6 L981.2 324.6 L981.6 330.6 L981.8 336.5 L981.7 342.6 L981.3 348.5 L980.6 354.5 L979.7 360.3 L978.4 366.1 L976.8 371.9 L975.1 377.5 L973.0 382.9 L970.7 388.4 L968.0 393.7 L965.2 399.1 L962.1 404.3 L958.8 409.4 L955.2 414.4 L951.5 419.2 L947.7 423.8 L943.6 428.4 L939.6 432.8 L935.4 437.0 L931.0 441.2 L926.6 445.2 L921.9 449.2 L917.4 453.0 L912.6 456.8 L907.9 460.4 L903.0 464.0 L898.1 467.5 L893.0 470.8 L888.0 474.2 L882.9 477.5 L877.7 480.7 L872.6 483.7 L867.7 486.6 L864.0 488.7 L858.7 491.7 L853.3 494.6 L847.9 497.5 L842.4 500.3 L837.0 503.0 L831.5 505.8 L826.0 508.5 L820.5 511.1 L814.9 513.7 L809.3 516.2 L803.7 518.7 L798.1 521.2 L792.5 523.6 L787.0 525.9 L781.3 528.2 L775.6 530.5 L769.9 532.8 L764.2 535.0 L758.5 537.3 L752.9 539.4 L747.2 541.6 L741.5 543.7 L735.7 545.8 L730.0 547.9 L724.2 549.9 L718.4 552.0 L712.7 554.0 L707.0 556.0 L701.2 557.9 L695.4 559.9 L689.6 561.8 L683.7 563.7 L677.9 565.6 L672.4 567.3" fill="none" stroke="#2a55b8" stroke-width="0.9" stroke-opacity="0.85"/>
<path d="M632.6 527.7 L636.7 526.1 L640.7 524.4 L644.8 522.7 L648.9 520.9 L652.9 519.2 L656.8 517.4 L660.8 515.6 L664.8 513.8 L668.7 512.0 L672.7 510.2 L676.7 508.3 L680.6 506.4 L684.5 504.4 L688.4 502.5 L692.3 500.4 L696.2 498.4 L700.0 496.3 L703.8 494.2 L707.6 492.1 L711.5 490.0 L715.3 487.8 L719.0 485.6 L722.8 483.3 L726.6 481.0 L730.3 478.7 L733.9 476.3 L737.6 474.0 L741.3 471.5 L744.9 469.0 L748.4 466.5 L752.1 464.0 L755.6 461.4 L759.1 458.8 L762.6 456.1 L766.0 453.4 L769.4 450.6 L772.9 447.8 L776.2 444.9 L779.4 442.0 L782.7 439.1 L785.9 436.0 L789.0 433.0 L792.2 429.8 L795.2 426.6 L798.3 423.4 L801.2 420.0 L804.1 416.6 L806.8 413.3" fill="none" stroke="#2a55b8" stroke-width="0.9" stroke-opacity="0.85"/>
<line x1="827" y1="294" x2="970" y2="283" stroke="#2a55b8" stroke-width="0.8" />
<line x1="825.4" y1="310" x2="964.6" y2="300" stroke="#243e80" stroke-width="0.9" stroke-opacity="0.8"/>
<line x1="964.6" y1="300" x2="964.6" y2="410" stroke="#243e80" stroke-width="0.9" stroke-opacity="0.8"/>
<line x1="970.8" y1="299.6" x2="970.8" y2="408" stroke="#243e80" stroke-width="0.9" stroke-opacity="0.8"/>
<line x1="825.4" y1="420.4" x2="970.8" y2="408" stroke="#243e80" stroke-width="0.9" stroke-opacity="0.8"/>
<line x1="825.4" y1="431" x2="975" y2="418" stroke="#243e80" stroke-width="0.9" stroke-opacity="0.8"/>
<line x1="825.4" y1="289" x2="825.4" y2="477" stroke="#243e80" stroke-width="0.9" stroke-opacity="0.8"/>
<line x1="797.3" y1="420" x2="797.3" y2="471.4" stroke="#243e80" stroke-width="0.9" stroke-opacity="0.8"/>
<line x1="802.5" y1="420" x2="802.5" y2="477.4" stroke="#243e80" stroke-width="0.9" stroke-opacity="0.8"/>
<rect x="821" y="284.5" width="9" height="9" fill="#bfe6f2" stroke="#3a6a9a" stroke-width="1" />
<rect x="967" y="273.3" width="9" height="9" fill="#bfe6f2" stroke="#3a6a9a" stroke-width="1" />
<rect x="623.5" y="521" width="9" height="9" fill="#bfe6f2" stroke="#3a6a9a" stroke-width="1" />
<rect x="662.5" y="566.5" width="9" height="9" fill="#bfe6f2" stroke="#3a6a9a" stroke-width="1" />
<ellipse cx="972" cy="275.5" rx="45" ry="15.5" fill="none" stroke="#d6d6d6" stroke-width="2" stroke-opacity="0.6" stroke-dasharray="3 1.5"/>
<path d="M952.3 234.4L982.5 232.8L992.9 240.6L959.6 241.7Z" fill="#f0f0f0" stroke="#b8b8b8" stroke-width="1" fill-opacity="0.9"/>
<path d="M952.3 234.4L959.6 241.7V274L952.3 266Z" fill="#dcdcdc" stroke="#b0b0b0" stroke-width="1" fill-opacity="0.9"/>
<path d="M959.6 241.7L992.9 240.6V273L959.6 274Z" fill="#ececec" stroke="#b0b0b0" stroke-width="1" fill-opacity="0.88"/>
<text x="964.8" y="261.5" font-size="9.5" fill="#8a8a8a" font-weight="bold" textLength="24" lengthAdjust="spacingAndGlyphs">FRONT</text>
<rect x="999.5" y="310.5" width="35" height="112" fill="#efefef" stroke="#b8b8b8" stroke-width="1.2" rx="4" fill-opacity="0.92"/>
<circle cx="1026" cy="316.5" r="3.5" fill="#aaa"/>
<path d="M1024.3 314.8l3.4 3.4M1027.7 314.8l-3.4 3.4" fill="none" stroke="#fff" stroke-width="1" />
<circle cx="1014" cy="339" r="7" fill="#f4f4f4" stroke="#777" stroke-width="1.6"/><circle cx="1013" cy="338" r="3.2" fill="none" stroke="#777" stroke-width="1.2"/>
<rect x="1017" y="342" width="8" height="8" fill="#5aa0e0" stroke="#2a6ab0" stroke-width="1" />
<path d="M1014 361h5l-2.5 2.5z" fill="#3a3a3a" />
<line x1="1003" y1="370" x2="1031" y2="370" stroke="#c8c8c8" stroke-width="1" />
<rect x="1008" y="377" width="10" height="10" fill="#6ac06a" stroke="#3a8a3a" stroke-width="0.8" />
<circle cx="1018" cy="387" r="3.5" fill="none" stroke="#555" stroke-width="1.2"/>
<line x1="1020.5" y1="389.5" x2="1024" y2="393" stroke="#555" stroke-width="1.4" />
<path d="M1014 399h5l-2.5 2.5z" fill="#3a3a3a" />
<circle cx="1025.5" cy="416" r="3" fill="none" stroke="#999" stroke-width="1"/>
<circle cx="477.8" cy="233.3" r="14.8" fill="#fff" stroke="#1a2a9a" stroke-width="1"/>
<path d="M477.8 233.3V218.5A14.8 14.8 0 0 1 492.6 233.3Z" fill="#0a2fb5" />
<path d="M477.8 233.3V248.1A14.8 14.8 0 0 1 463 233.3Z" fill="#0a2fb5" />
<line x1="463" y1="233.3" x2="492.6" y2="233.3" stroke="#1a2a9a" stroke-width="0.8" />
<line x1="477.8" y1="218.5" x2="477.8" y2="248.1" stroke="#1a2a9a" stroke-width="0.8" />
<line x1="492.7" y1="232.4" x2="551" y2="227.3" stroke="#1f6f7f" stroke-width="1.1" />
<line x1="569.8" y1="226.2" x2="593.6" y2="224.2" stroke="#1f6f7f" stroke-width="1.1" />
<line x1="612.5" y1="222" x2="656.5" y2="219.3" stroke="#1f6f7f" stroke-width="1.1" />
<text x="509" y="222.9" font-size="15.96" fill="#333" textLength="40.5" lengthAdjust="spacingAndGlyphs" transform="rotate(-2 529 216)">T O F</text>
<clipPath id="c15"><rect x="500" y="230" width="60" height="15.8"/></clipPath>
<g clip-path="url(#c15)">
<text x="507" y="249.5" font-size="17.00" fill="#333" textLength="42.0" lengthAdjust="spacingAndGlyphs" transform="rotate(-3 528 242)">-1500</text>
</g>
<path d="M888.5 518.5v16l3.5-3.5 3 6 2-1-3-6h5z" fill="#fff" stroke="#222" stroke-width="1" />
<rect x="1035" y="189" width="17.5" height="490" fill="#f0f0f0" />
<path d="M1038 203l4-4 4 4" fill="none" stroke="#444" stroke-width="1.4" />
<rect x="1036" y="427" width="14" height="17" fill="#cdcdcd" />
<path d="M1038 669.5l4 4 4-4" fill="none" stroke="#444" stroke-width="1.4" />
<rect x="280" y="679" width="773" height="19" fill="#ececec" />
<text x="306" y="692.5" font-size="10.46" fill="#222" textLength="32.0" lengthAdjust="spacingAndGlyphs" >1 : 100</text>
<rect x="359.5" y="681.8" width="15" height="11" fill="#f4f4f4" stroke="#333" stroke-width="1.1" />
<rect x="360" y="682" width="14" height="2.2" fill="#444" />
<rect x="360.5" y="685" width="3.4" height="3.6" fill="#777" />
<rect x="363.9" y="688.6" width="3.4" height="3.6" fill="#777" />
<rect x="367.3" y="685" width="3.4" height="3.6" fill="#777" />
<rect x="370.7" y="688.6" width="3.4" height="3.6" fill="#777" />
<path d="M381.5 686l3-3h10v8l-3 3h-10z" fill="#e8e8e8" stroke="#333" stroke-width="1" />
<path d="M381.5 686h10v8M391.5 686l3-3" fill="none" stroke="#333" stroke-width="1" />
<circle cx="404" cy="686.5" r="3.3" fill="#f5d040" stroke="#e0a020" stroke-width="0.8"/>
<path d="M404 681v1.5M399 686.5h-1.5M400.5 683l-1-1M407.5 683l1-1M400.5 690l-1 1" fill="none" stroke="#e0a020" stroke-width="1" />
<path d="M407.5 688.5l5.5 5.5M413 688.5l-5.5 5.5" fill="none" stroke="#d42a2a" stroke-width="1.8" />
<circle cx="426" cy="685.5" r="3.6" fill="#e8f2fa" stroke="#2a5ab0" stroke-width="1.3"/>
<line x1="423" y1="692.5" x2="427" y2="692.5" stroke="#2a5ab0" stroke-width="1.4" />
<path d="M429 688.5l5.5 5.5M434.5 688.5l-5.5 5.5" fill="none" stroke="#d42a2a" stroke-width="1.8" />
<path d="M441 686.5l3-2.5 3.5 0.5 2 2h3l0 4-3 2.5h-4z" fill="#e8e8e8" stroke="#666" stroke-width="1" />
<circle cx="452.5" cy="689.5" r="2.8" fill="#d8ecfa" stroke="#2a5ab0" stroke-width="1.1"/>
<line x1="452.5" y1="692.3" x2="452.5" y2="694" stroke="#2a5ab0" stroke-width="1.1" />
<path d="M465 693.5v-8h12" fill="none" stroke="#2a5ab0" stroke-width="1.8" />
<line x1="466" y1="682.8" x2="477" y2="682.8" stroke="#333" stroke-width="0.9" stroke-dasharray="1.5 1"/>
<line x1="461" y1="690" x2="463" y2="690" stroke="#333" stroke-width="1" />
<path d="M470 687.5l6 6M476 687.5l-6 6" fill="none" stroke="#d42a2a" stroke-width="1.8" />
<path d="M486 693.5v-8h11" fill="none" stroke="#2a5ab0" stroke-width="1.8" />
<line x1="487" y1="682.8" x2="497" y2="682.8" stroke="#333" stroke-width="0.9" stroke-dasharray="1.5 1"/>
<line x1="482" y1="690" x2="484" y2="690" stroke="#333" stroke-width="1" />
<rect x="489.5" y="688" width="3" height="3" fill="#999" />
<circle cx="495.5" cy="688.5" r="2.6" fill="#d8ecfa" stroke="#2a5ab0" stroke-width="1.1"/>
<line x1="495.5" y1="691.1" x2="495.5" y2="693.5" stroke="#2a5ab0" stroke-width="1.1" />
<path d="M503 694v-6l6.5-5.5 6.5 5.5" fill="none" stroke="#333" stroke-width="1.3" />
<path d="M505.5 694v-5" fill="none" stroke="#333" stroke-width="1.2" />
<rect x="510" y="689.5" width="6.5" height="5" fill="#8aa898" stroke="#445" stroke-width="0.9" />
<path d="M511.5 689.5v-1.5a1.8 1.8 0 0 1 3.6 0v1.5" fill="none" stroke="#445" stroke-width="0.9" />
<path d="M523 685.5c2-2 4 0 5.5 2.5s3.5 4 5 2.5 2.5-3 4-3.5M525 689c1.5 2 3 2.5 4.5 1.5M533 684.5c2 0 3.5 1 4.5 3" fill="none" stroke="#333" stroke-width="1.1" />
<ellipse cx="551" cy="686.5" rx="2.6" ry="3.2" fill="#d8ecfa" stroke="#2a5ab0" stroke-width="1.2"/>
<line x1="551" y1="689.8" x2="551" y2="692.5" stroke="#2a5ab0" stroke-width="1.1" />
<rect x="565.5" y="684" width="11" height="8.5" fill="none" stroke="#444" stroke-width="1.1" stroke-dasharray="2 1"/>
<circle cx="574" cy="689.5" r="2.3" fill="#ddd" stroke="#555" stroke-width="1"/>
<path d="M584.5 694v-7l5-3.5 5 3.5v7" fill="none" stroke="#444" stroke-width="1.1" />
<path d="M586.5 694v-6M589 694v-6M591.5 694v-6" fill="none" stroke="#c02a2a" stroke-width="1" />
<ellipse cx="597" cy="688" rx="2.7" ry="3.2" fill="#d8ecfa" stroke="#2a5ab0" stroke-width="1.1"/>
<line x1="597" y1="691.2" x2="597" y2="694" stroke="#2a5ab0" stroke-width="1" />
<path d="M606.5 687.5h9v6.5h-9z" fill="#e4e4e4" stroke="#555" stroke-width="1" />
<path d="M608.5 685.5l2-2h8l-2 2zM615.5 687.5l3-2v6l-3 2.5" fill="#f0f0f0" stroke="#555" stroke-width="0.9" />
<path d="M625.5 683v11M640.5 683v5M625.5 684.5h15" fill="none" stroke="#333" stroke-width="1.1" />
<line x1="626" y1="691" x2="634" y2="691" stroke="#888" stroke-width="0.8" stroke-dasharray="1.5 1"/>
<rect x="634.5" y="689.5" width="6.5" height="5" fill="#f0f0f0" stroke="#333" stroke-width="1" />
<path d="M636 689.5v-1.3a1.7 1.7 0 0 1 3.4 0v1.3" fill="none" stroke="#333" stroke-width="0.9" />
<path d="M655 684l-4 4 4 4" fill="none" stroke="#333" stroke-width="1.4" />
<rect x="831" y="681.5" width="16.5" height="14" fill="#cdcdcd" />
<path d="M1024 684l4 4-4 4" fill="none" stroke="#333" stroke-width="1.4" />
<rect x="1048" y="686" width="1.2" height="1.2" fill="#999" />
<rect x="1048" y="690" width="1.2" height="1.2" fill="#999" />
<rect x="1044" y="690" width="1.2" height="1.2" fill="#999" />
<rect x="1048" y="694" width="1.2" height="1.2" fill="#999" />
<rect x="1044" y="694" width="1.2" height="1.2" fill="#999" />
<rect x="1040" y="694" width="1.2" height="1.2" fill="#999" />
<rect x="1053" y="168" width="2.5" height="530" fill="#cdcdcd" />
<rect x="1055.5" y="168" width="224.5" height="530" fill="#fff" />
<rect x="1055.5" y="168" width="224.5" height="21" fill="#f0f0f0" />
<text x="1059.5" y="183.6" font-size="11.50" fill="#222" textLength="232.5" lengthAdjust="spacingAndGlyphs" >Project Browser - 0.1 CONDO 9th FLOOR (1)</text>
<line x1="1055.5" y1="189" x2="1280" y2="189" stroke="#dcdcdc" stroke-width="1" />
<line x1="1065.3" y1="189" x2="1065.3" y2="680" stroke="#a0a0a0" stroke-width="1" stroke-dasharray="1 1"/>
<line x1="1084.7" y1="189" x2="1084.7" y2="392.5" stroke="#a0a0a0" stroke-width="1" stroke-dasharray="1 1"/>
<line x1="1104.3" y1="189" x2="1104.3" y2="216.5" stroke="#a0a0a0" stroke-width="1" stroke-dasharray="1 1"/>
<line x1="1104.3" y1="236.6" x2="1104.3" y2="251.7" stroke="#a0a0a0" stroke-width="1" stroke-dasharray="1 1"/>
<line x1="1104.3" y1="342.2" x2="1104.3" y2="357.3" stroke="#a0a0a0" stroke-width="1" stroke-dasharray="1 1"/>
<line x1="1104.3" y1="395" x2="1104.3" y2="638.9" stroke="#a0a0a0" stroke-width="1" stroke-dasharray="1 1"/>
<line x1="1124" y1="254.2" x2="1124" y2="322.1" stroke="#a0a0a0" stroke-width="1" stroke-dasharray="1 1"/>
<line x1="1124" y1="359.8" x2="1124" y2="374.9" stroke="#a0a0a0" stroke-width="1" stroke-dasharray="1 1"/>
<line x1="1124" y1="412.6" x2="1124" y2="621.3" stroke="#a0a0a0" stroke-width="1" stroke-dasharray="1 1"/>
<line x1="1124" y1="641.4" x2="1124" y2="680" stroke="#a0a0a0" stroke-width="1" stroke-dasharray="1 1"/>
<line x1="1108.8" y1="198.9" x2="1119.6" y2="198.9" stroke="#a0a0a0" stroke-width="1" stroke-dasharray="1 1"/>
<rect x="1100.3" y="194.9" width="8" height="8" fill="#f8f8f8" stroke="#8a8a8a" stroke-width="1" />
<line x1="1102.3" y1="198.9" x2="1106.3" y2="198.9" stroke="#333" stroke-width="1" />
<line x1="1104.3" y1="196.9" x2="1104.3" y2="200.9" stroke="#333" stroke-width="1" />
<text x="1121.6" y="201.4" font-size="11.80" fill="#222" textLength="90.3" lengthAdjust="spacingAndGlyphs" >1.1. FLOOR PLAN</text>
<line x1="1108.8" y1="216.5" x2="1119.6" y2="216.5" stroke="#a0a0a0" stroke-width="1" stroke-dasharray="1 1"/>
<rect x="1100.3" y="212.5" width="8" height="8" fill="#f8f8f8" stroke="#8a8a8a" stroke-width="1" />
<line x1="1102.3" y1="216.5" x2="1106.3" y2="216.5" stroke="#333" stroke-width="1" />
<line x1="1104.3" y1="214.5" x2="1104.3" y2="218.5" stroke="#333" stroke-width="1" />
<text x="1121.6" y="219" font-size="11.80" fill="#222" textLength="95.4" lengthAdjust="spacingAndGlyphs" >1.2. CEILING PLAN</text>
<line x1="1089.2" y1="234.1" x2="1100.2" y2="234.1" stroke="#a0a0a0" stroke-width="1" stroke-dasharray="1 1"/>
<rect x="1080.7" y="230.1" width="8" height="8" fill="#f8f8f8" stroke="#8a8a8a" stroke-width="1" />
<line x1="1082.7" y1="234.1" x2="1086.7" y2="234.1" stroke="#333" stroke-width="1" />
<text x="1102.2" y="236.6" font-size="11.80" fill="#222" textLength="68.8" lengthAdjust="spacingAndGlyphs" >2. ELEVATION</text>
<line x1="1108.8" y1="251.7" x2="1119.6" y2="251.7" stroke="#a0a0a0" stroke-width="1" stroke-dasharray="1 1"/>
<rect x="1100.3" y="247.7" width="8" height="8" fill="#f8f8f8" stroke="#8a8a8a" stroke-width="1" />
<line x1="1102.3" y1="251.7" x2="1106.3" y2="251.7" stroke="#333" stroke-width="1" />
<text x="1121.6" y="254.2" font-size="11.80" fill="#222" textLength="110.9" lengthAdjust="spacingAndGlyphs" >2.1. ELEVATION PLAN</text>
<line x1="1124" y1="269.3" x2="1138" y2="269.3" stroke="#a0a0a0" stroke-width="1" stroke-dasharray="1 1"/>
<text x="1141.3" y="271.8" font-size="11.80" fill="#222" textLength="73.0" lengthAdjust="spacingAndGlyphs" >Elevation: East</text>
<line x1="1124" y1="286.9" x2="1138" y2="286.9" stroke="#a0a0a0" stroke-width="1" stroke-dasharray="1 1"/>
<text x="1141.3" y="289.4" font-size="11.80" fill="#222" textLength="82.3" lengthAdjust="spacingAndGlyphs" >Elevation: North</text>
<line x1="1124" y1="304.5" x2="1138" y2="304.5" stroke="#a0a0a0" stroke-width="1" stroke-dasharray="1 1"/>
<text x="1141.3" y="307" font-size="11.80" fill="#222" textLength="82.3" lengthAdjust="spacingAndGlyphs" >Elevation: South</text>
<line x1="1124" y1="322.1" x2="1138" y2="322.1" stroke="#a0a0a0" stroke-width="1" stroke-dasharray="1 1"/>
<text x="1141.3" y="324.6" font-size="11.80" fill="#222" textLength="78.4" lengthAdjust="spacingAndGlyphs" >Elevation: West</text>
<line x1="1089.2" y1="339.7" x2="1100.2" y2="339.7" stroke="#a0a0a0" stroke-width="1" stroke-dasharray="1 1"/>
<rect x="1080.7" y="335.7" width="8" height="8" fill="#f8f8f8" stroke="#8a8a8a" stroke-width="1" />
<line x1="1082.7" y1="339.7" x2="1086.7" y2="339.7" stroke="#333" stroke-width="1" />
<text x="1102.2" y="342.2" font-size="11.80" fill="#222" textLength="28.0" lengthAdjust="spacingAndGlyphs" >3. 3D</text>
<line x1="1108.8" y1="357.3" x2="1119.6" y2="357.3" stroke="#a0a0a0" stroke-width="1" stroke-dasharray="1 1"/>
<rect x="1100.3" y="353.3" width="8" height="8" fill="#f8f8f8" stroke="#8a8a8a" stroke-width="1" />
<line x1="1102.3" y1="357.3" x2="1106.3" y2="357.3" stroke="#333" stroke-width="1" />
<text x="1121.6" y="359.8" font-size="11.80" fill="#222" textLength="64.3" lengthAdjust="spacingAndGlyphs" >3.1. 3D View</text>
<line x1="1124" y1="374.9" x2="1138" y2="374.9" stroke="#a0a0a0" stroke-width="1" stroke-dasharray="1 1"/>
<text x="1141.3" y="377.4" font-size="11.80" fill="#222" font-weight="bold" textLength="74.9" lengthAdjust="spacingAndGlyphs" >3D View: {3D}</text>
<line x1="1089.2" y1="392.5" x2="1100.2" y2="392.5" stroke="#a0a0a0" stroke-width="1" stroke-dasharray="1 1"/>
<rect x="1080.7" y="388.5" width="8" height="8" fill="#f8f8f8" stroke="#8a8a8a" stroke-width="1" />
<line x1="1082.7" y1="392.5" x2="1086.7" y2="392.5" stroke="#333" stroke-width="1" />
<text x="1102.2" y="395" font-size="11.80" fill="#222" textLength="72.0" lengthAdjust="spacingAndGlyphs" >4. STRUCTURE</text>
<line x1="1108.8" y1="410.1" x2="1119.6" y2="410.1" stroke="#a0a0a0" stroke-width="1" stroke-dasharray="1 1"/>
<rect x="1100.3" y="406.1" width="8" height="8" fill="#f8f8f8" stroke="#8a8a8a" stroke-width="1" />
<line x1="1102.3" y1="410.1" x2="1106.3" y2="410.1" stroke="#333" stroke-width="1" />
<text x="1121.6" y="412.6" font-size="11.80" fill="#222" textLength="110.9" lengthAdjust="spacingAndGlyphs" >4.1 STRUCTURE PLAN</text>
<line x1="1124" y1="427.7" x2="1138" y2="427.7" stroke="#a0a0a0" stroke-width="1" stroke-dasharray="1 1"/>
<text x="1141.3" y="430.2" font-size="11.80" fill="#222" textLength="107.6" lengthAdjust="spacingAndGlyphs" >Structural Plan: BASE</text>
<rect x="1138.3" y="435.3" width="99.5" height="17.2" fill="#e3e3e3" />
<line x1="1124" y1="445.3" x2="1138" y2="445.3" stroke="#a0a0a0" stroke-width="1" stroke-dasharray="1 1"/>
<text x="1141.3" y="447.8" font-size="11.80" fill="#222" textLength="93.3" lengthAdjust="spacingAndGlyphs" >Structural Plan: E0</text>
<line x1="1124" y1="462.9" x2="1138" y2="462.9" stroke="#a0a0a0" stroke-width="1" stroke-dasharray="1 1"/>
<text x="1141.3" y="465.4" font-size="11.80" fill="#222" textLength="92.5" lengthAdjust="spacingAndGlyphs" >Structural Plan: E1</text>
<line x1="1124" y1="480.5" x2="1138" y2="480.5" stroke="#a0a0a0" stroke-width="1" stroke-dasharray="1 1"/>
<text x="1141.3" y="483" font-size="11.80" fill="#222" textLength="92.5" lengthAdjust="spacingAndGlyphs" >Structural Plan: E2</text>
<line x1="1124" y1="498.1" x2="1138" y2="498.1" stroke="#a0a0a0" stroke-width="1" stroke-dasharray="1 1"/>
<text x="1141.3" y="500.6" font-size="11.80" fill="#222" textLength="92.5" lengthAdjust="spacingAndGlyphs" >Structural Plan: E3</text>
<line x1="1124" y1="515.7" x2="1138" y2="515.7" stroke="#a0a0a0" stroke-width="1" stroke-dasharray="1 1"/>
<text x="1141.3" y="518.2" font-size="11.80" fill="#222" textLength="92.5" lengthAdjust="spacingAndGlyphs" >Structural Plan: E4</text>
<line x1="1124" y1="533.3" x2="1138" y2="533.3" stroke="#a0a0a0" stroke-width="1" stroke-dasharray="1 1"/>
<text x="1141.3" y="535.8" font-size="11.80" fill="#222" textLength="92.5" lengthAdjust="spacingAndGlyphs" >Structural Plan: E5</text>
<line x1="1124" y1="550.9" x2="1138" y2="550.9" stroke="#a0a0a0" stroke-width="1" stroke-dasharray="1 1"/>
<text x="1141.3" y="553.4" font-size="11.80" fill="#222" textLength="92.5" lengthAdjust="spacingAndGlyphs" >Structural Plan: E6</text>
<line x1="1124" y1="568.5" x2="1138" y2="568.5" stroke="#a0a0a0" stroke-width="1" stroke-dasharray="1 1"/>
<text x="1141.3" y="571" font-size="11.80" fill="#222" textLength="92.5" lengthAdjust="spacingAndGlyphs" >Structural Plan: E7</text>
<line x1="1124" y1="586.1" x2="1138" y2="586.1" stroke="#a0a0a0" stroke-width="1" stroke-dasharray="1 1"/>
<text x="1141.3" y="588.6" font-size="11.80" fill="#222" textLength="92.5" lengthAdjust="spacingAndGlyphs" >Structural Plan: E8</text>
<line x1="1124" y1="603.7" x2="1138" y2="603.7" stroke="#a0a0a0" stroke-width="1" stroke-dasharray="1 1"/>
<text x="1141.3" y="606.2" font-size="11.80" fill="#222" textLength="92.5" lengthAdjust="spacingAndGlyphs" >Structural Plan: E9</text>
<line x1="1124" y1="621.3" x2="1138" y2="621.3" stroke="#a0a0a0" stroke-width="1" stroke-dasharray="1 1"/>
<text x="1141.3" y="623.8" font-size="11.80" fill="#222" textLength="107.0" lengthAdjust="spacingAndGlyphs" >Structural Plan: T O F</text>
<line x1="1108.8" y1="638.9" x2="1119.6" y2="638.9" stroke="#a0a0a0" stroke-width="1" stroke-dasharray="1 1"/>
<rect x="1100.3" y="634.9" width="8" height="8" fill="#f8f8f8" stroke="#8a8a8a" stroke-width="1" />
<line x1="1102.3" y1="638.9" x2="1106.3" y2="638.9" stroke="#333" stroke-width="1" />
<text x="1121.6" y="641.4" font-size="11.80" fill="#222" textLength="126.7" lengthAdjust="spacingAndGlyphs" >4.2. STRUCTURE LAYOUT</text>
<line x1="1124" y1="656.5" x2="1138" y2="656.5" stroke="#a0a0a0" stroke-width="1" stroke-dasharray="1 1"/>
<text x="1141.3" y="659" font-size="11.8" fill="#222" textLength="157.5" lengthAdjust="spacingAndGlyphs">Structural Plan: 01-BASEMENT</text>
<line x1="1124" y1="674.1" x2="1138" y2="674.1" stroke="#a0a0a0" stroke-width="1" stroke-dasharray="1 1"/>
<text x="1141.3" y="676.6" font-size="11.8" fill="#222" textLength="161.2" lengthAdjust="spacingAndGlyphs">Structural Plan: 02-E0 COLUMN</text>
<rect x="1055.5" y="681" width="224.5" height="16" fill="#f0f0f0" />
<path d="M1068 684.5l-4 4 4 4" fill="none" stroke="#333" stroke-width="1.4" />
<rect x="1073.75" y="682" width="127.5" height="14" fill="#cdcdcd" />
<rect x="0" y="698" width="1280" height="22" fill="#cbcbcb" />
<line x1="0" y1="697.8" x2="1280" y2="697.8" stroke="#f2f2f2" stroke-width="1.2" />
<text x="0.5" y="714.3" font-size="11.08" fill="#222" textLength="288.5" lengthAdjust="spacingAndGlyphs" >to select, TAB for alternates, CTRL adds, SHIFT unselects.</text>
<path d="M307 708l4-2 4 2v8l-4 2-4-2z" fill="#5aa0e0" stroke="#2a5a9a" stroke-width="1" />
<rect x="311" y="702" width="5" height="5" fill="#8acb5a" stroke="#4a7a2a" stroke-width="0.8" />
<path d="M318 705v13M321 705v13M316.5 705h6" fill="none" stroke="#333" stroke-width="1.1" />
<rect x="330.5" y="701.5" width="200" height="18.5" fill="#fff" stroke="#c8c8c8" stroke-width="1" />
<path d="M519.5 708.5l4 4 4-4" fill="none" stroke="#aaa" stroke-width="1.2" />
<path d="M539 718l7-9h8v-5h-8l-4 5" fill="#c8c8c8" stroke="#999" stroke-width="1" />
<text x="557.3" y="714.5" font-size="12.00" fill="#333" textLength="12.2" lengthAdjust="spacingAndGlyphs" >:0</text>
<rect x="591" y="702.5" width="15" height="15" fill="#f8f8f8" stroke="#333" stroke-width="1.1" />
<line x1="591" y1="706" x2="606" y2="706" stroke="#333" stroke-width="1" />
<line x1="595" y1="710" x2="603" y2="710" stroke="#333" stroke-width="1" />
<line x1="595" y1="713" x2="603" y2="713" stroke="#333" stroke-width="1" />
<rect x="617" y="703" width="15" height="14" fill="#bbb" stroke="#999" stroke-width="1" />
<rect x="639.7" y="701.5" width="200" height="18.5" fill="#fff" stroke="#d0d0d0" stroke-width="1" />
<text x="643" y="715.5" font-size="11.80" fill="#8a8a8a" textLength="61.0" lengthAdjust="spacingAndGlyphs" >Main Model</text>
<path d="M828.5 708.5l4 4 4-4" fill="none" stroke="#aaa" stroke-width="1.2" />
<rect x="1063" y="704" width="15" height="6" fill="#f0d040" stroke="#a08a20" stroke-width="1" rx="3"/>
<path d="M1069 709v9l2-2 1.8 3.5 1.2-0.6-1.8-3.5h3z" fill="#fff" stroke="#222" stroke-width="0.9" />
<path d="M1088 714l8-8v8z" fill="#8ac0f0" stroke="#2a6ab0" stroke-width="1" />
<path d="M1097 704l6 6M1103 704l-6 6" fill="none" stroke="#d22" stroke-width="1.6" />
<path d="M1094 710v9l2-2 1.8 3.5 1.2-0.6-1.8-3.5h3z" fill="#fff" stroke="#222" stroke-width="0.9" />
<rect x="1113" y="705" width="10" height="5" fill="#f0a060" stroke="#a05a20" stroke-width="1" />
<line x1="1118" y1="710" x2="1118" y2="718" stroke="#777" stroke-width="1.5" />
<path d="M1120 710v9l2-2 1.8 3.5 1.2-0.6-1.8-3.5h3z" fill="#fff" stroke="#222" stroke-width="0.9" />
<path d="M1140 705l6-2v13l-6 2z" fill="#8ac0f0" stroke="#2a6ab0" stroke-width="1" />
<path d="M1148 704l6 6M1154 704l-6 6" fill="none" stroke="#d22" stroke-width="1.6" />
<path d="M1146 710v9l2-2 1.8 3.5 1.2-0.6-1.8-3.5h3z" fill="#fff" stroke="#222" stroke-width="0.9" />
<path d="M1166 708h8M1170 704v8" fill="none" stroke="#222" stroke-width="1.4" />
<path d="M1172 708v9l2-2 1.8 3.5 1.2-0.6-1.8-3.5h3z" fill="#fff" stroke="#222" stroke-width="0.9" />
<circle cx="1197" cy="711" r="5.5" fill="none" stroke="#bbb" stroke-width="2" stroke-dasharray="2 1.5"/>
<path d="M1212 704h15l-5.5 6v7l-4 1v-8z" fill="#ddd" stroke="#555" stroke-width="1.2" />
<text x="1228.8" y="714.5" font-size="12.00" fill="#333" textLength="8.7" lengthAdjust="spacingAndGlyphs" >:1</text>
</svg></body></html>
